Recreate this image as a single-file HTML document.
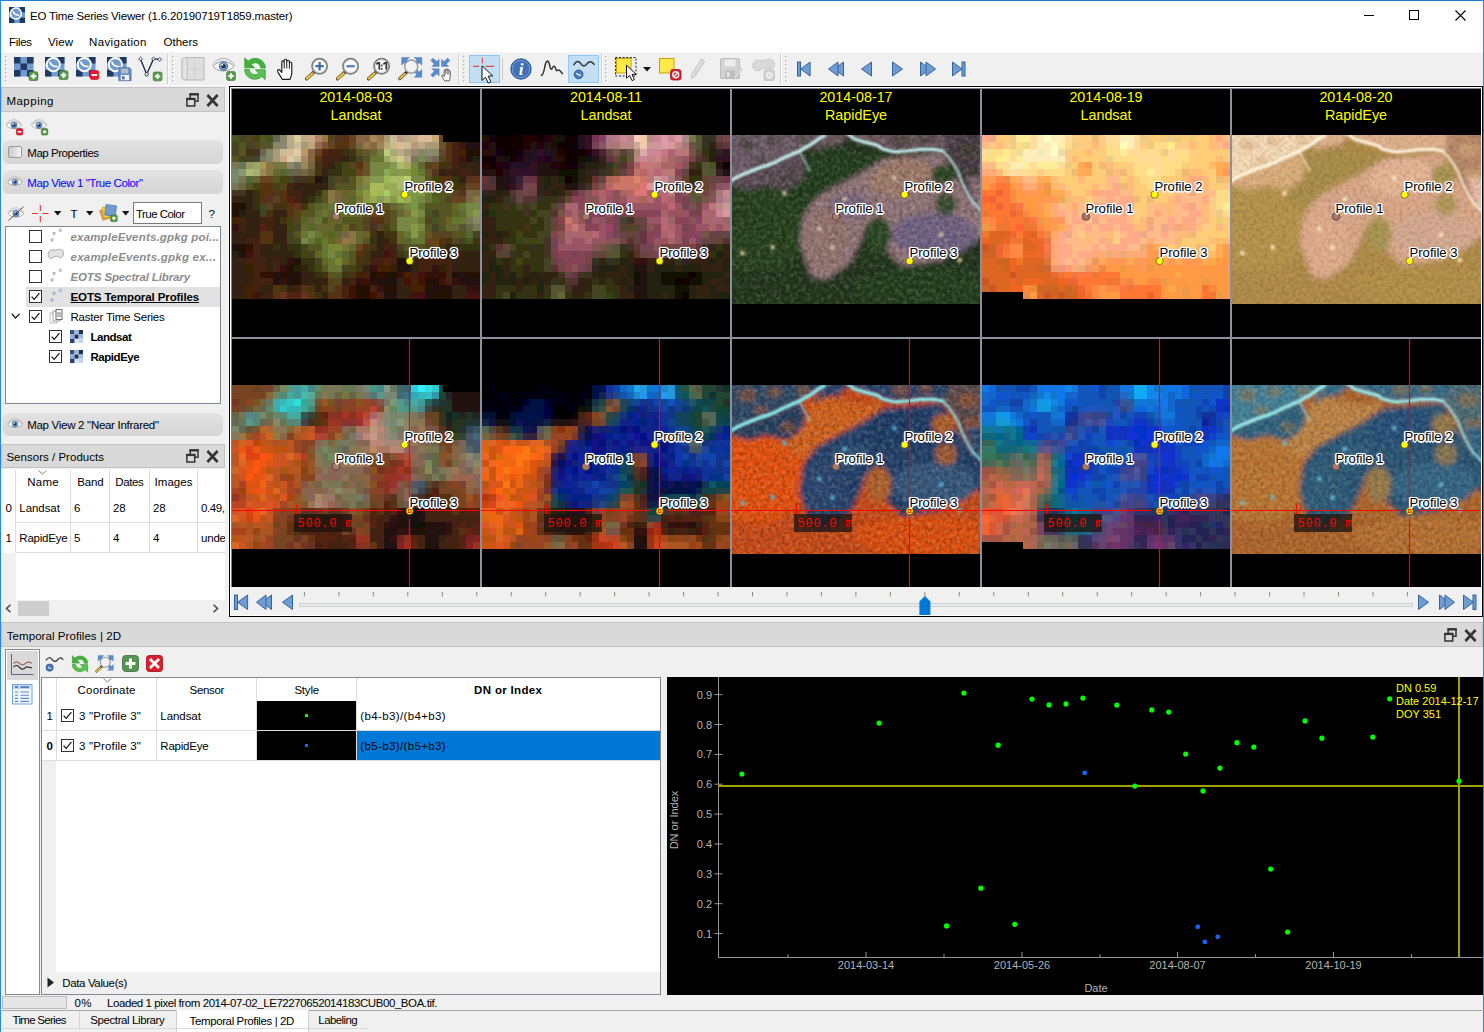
<!DOCTYPE html>
<html><head><meta charset="utf-8"><title>EO Time Series Viewer</title>
<style>

*{box-sizing:border-box;margin:0;padding:0}
html,body{width:1484px;height:1032px;overflow:hidden;background:#f0f0f0}
body{position:relative;font-family:"Liberation Sans",sans-serif;font-size:11.5px;color:#000}
.a{position:absolute}
.t{position:absolute;white-space:nowrap;line-height:14px;height:14px}
.c{text-align:center}
svg{position:absolute;overflow:visible}
.ml{position:absolute;white-space:nowrap;font-size:13.1px;line-height:16px;height:16px;color:#000;
 text-shadow:-1.5px 0 0 #fff,1.5px 0 0 #fff,0 -1.5px 0 #fff,0 1.5px 0 #fff,-1px -1px 0 #fff,1px -1px 0 #fff,-1px 1px 0 #fff,1px 1px 0 #fff,0 0 2px #fff}
.mt{position:absolute;white-space:nowrap;font-size:14.3px;line-height:16px;height:16px;color:#ffff00;text-align:center;width:250px}
.sc{position:absolute;white-space:nowrap;font-family:"Liberation Mono",monospace;font-size:12px;line-height:21px;height:18px;overflow:hidden;color:#f00;background:rgba(30,20,15,.78);letter-spacing:.75px;padding-left:4px}
.pl{position:absolute;white-space:nowrap;font-size:11px;line-height:12px;height:12px;color:#b4b4b4}
.btn{position:absolute;border-radius:6px;background:linear-gradient(#e3e3e3,#dadada 60%,#d6d6d6)}
.dt{position:absolute;background:#d9d9d9;border:1px solid #c4c4c4}
</style></head><body>
<div class="a" style="left:0;top:0;width:1484px;height:31px;background:#fff"></div><div class="a" style="left:0;top:31px;width:1484px;height:22px;background:#fff"></div><div class="a" style="left:0;top:52px;width:1484px;height:1px;background:#f7f7f7"></div><svg style="left:9px;top:7px" width="16" height="16" viewBox="0 0 16 16" ><rect x="0" y="0" width="16.02" height="16.02" fill="#6f9bd1"/><rect x="0.0" y="0.0" width="5.34" height="5.34" fill="#203a60"/><rect x="10.68" y="0.0" width="5.34" height="5.34" fill="#203a60"/><rect x="5.34" y="5.34" width="5.34" height="5.34" fill="#203a60"/><rect x="0.0" y="10.68" width="5.34" height="5.34" fill="#203a60"/><rect x="10.68" y="10.68" width="5.34" height="5.34" fill="#203a60"/><circle cx="6.9" cy="6.6" r="5.5" fill="#6f9bd1" stroke="#fff" stroke-width="1.5"/><path d="M4.2 4.8C4.8 7 6.2 7.8 9.6 8.2" stroke="#fff" stroke-width="1.5" fill="none" stroke-linecap="round"/></svg>
<div class="t" style="left:30.00px;top:9.00px;letter-spacing:-0.177px">EO Time Series Viewer (1.6.20190719T1859.master)</div>
<svg style="left:1364px;top:10px" width="110" height="12" viewBox="0 0 110 12" ><path d="M0 5.5H10" stroke="#000" stroke-width="1"/><rect x="45.5" y=".5" width="9" height="9" fill="none" stroke="#000" stroke-width="1"/><path d="M91.5 .5L101.5 10.5M101.5 .5L91.5 10.5" stroke="#000" stroke-width="1.1"/></svg>
<div class="t" style="left:9.00px;top:34.50px;letter-spacing:-0.320px">Files</div>
<div class="t" style="left:48.00px;top:34.50px;letter-spacing:0.093px">View</div>
<div class="t" style="left:89.00px;top:34.50px;letter-spacing:0.351px">Navigation</div>
<div class="t" style="left:163.50px;top:34.50px;letter-spacing:-0.002px">Others</div>
<div class="a" style="left:0;top:85px;width:1484px;height:1px;background:#fbfbfb"></div><svg style="left:5px;top:56px" width="4" height="27" viewBox="0 0 4 27" ><rect x="0" y="0" width="1.4" height="1.4" fill="#b4b4b4"/><rect x="1.2" y="1.2" width="1.3" height="1.3" fill="#fff"/><rect x="0" y="4" width="1.4" height="1.4" fill="#b4b4b4"/><rect x="1.2" y="5.2" width="1.3" height="1.3" fill="#fff"/><rect x="0" y="8" width="1.4" height="1.4" fill="#b4b4b4"/><rect x="1.2" y="9.2" width="1.3" height="1.3" fill="#fff"/><rect x="0" y="12" width="1.4" height="1.4" fill="#b4b4b4"/><rect x="1.2" y="13.2" width="1.3" height="1.3" fill="#fff"/><rect x="0" y="16" width="1.4" height="1.4" fill="#b4b4b4"/><rect x="1.2" y="17.2" width="1.3" height="1.3" fill="#fff"/><rect x="0" y="20" width="1.4" height="1.4" fill="#b4b4b4"/><rect x="1.2" y="21.2" width="1.3" height="1.3" fill="#fff"/><rect x="0" y="24" width="1.4" height="1.4" fill="#b4b4b4"/><rect x="1.2" y="25.2" width="1.3" height="1.3" fill="#fff"/></svg>
<svg style="left:172px;top:56px" width="4" height="27" viewBox="0 0 4 27" ><rect x="0" y="0" width="1.4" height="1.4" fill="#b4b4b4"/><rect x="1.2" y="1.2" width="1.3" height="1.3" fill="#fff"/><rect x="0" y="4" width="1.4" height="1.4" fill="#b4b4b4"/><rect x="1.2" y="5.2" width="1.3" height="1.3" fill="#fff"/><rect x="0" y="8" width="1.4" height="1.4" fill="#b4b4b4"/><rect x="1.2" y="9.2" width="1.3" height="1.3" fill="#fff"/><rect x="0" y="12" width="1.4" height="1.4" fill="#b4b4b4"/><rect x="1.2" y="13.2" width="1.3" height="1.3" fill="#fff"/><rect x="0" y="16" width="1.4" height="1.4" fill="#b4b4b4"/><rect x="1.2" y="17.2" width="1.3" height="1.3" fill="#fff"/><rect x="0" y="20" width="1.4" height="1.4" fill="#b4b4b4"/><rect x="1.2" y="21.2" width="1.3" height="1.3" fill="#fff"/><rect x="0" y="24" width="1.4" height="1.4" fill="#b4b4b4"/><rect x="1.2" y="25.2" width="1.3" height="1.3" fill="#fff"/></svg>
<svg style="left:463px;top:56px" width="4" height="27" viewBox="0 0 4 27" ><rect x="0" y="0" width="1.4" height="1.4" fill="#b4b4b4"/><rect x="1.2" y="1.2" width="1.3" height="1.3" fill="#fff"/><rect x="0" y="4" width="1.4" height="1.4" fill="#b4b4b4"/><rect x="1.2" y="5.2" width="1.3" height="1.3" fill="#fff"/><rect x="0" y="8" width="1.4" height="1.4" fill="#b4b4b4"/><rect x="1.2" y="9.2" width="1.3" height="1.3" fill="#fff"/><rect x="0" y="12" width="1.4" height="1.4" fill="#b4b4b4"/><rect x="1.2" y="13.2" width="1.3" height="1.3" fill="#fff"/><rect x="0" y="16" width="1.4" height="1.4" fill="#b4b4b4"/><rect x="1.2" y="17.2" width="1.3" height="1.3" fill="#fff"/><rect x="0" y="20" width="1.4" height="1.4" fill="#b4b4b4"/><rect x="1.2" y="21.2" width="1.3" height="1.3" fill="#fff"/><rect x="0" y="24" width="1.4" height="1.4" fill="#b4b4b4"/><rect x="1.2" y="25.2" width="1.3" height="1.3" fill="#fff"/></svg>
<svg style="left:605px;top:56px" width="4" height="27" viewBox="0 0 4 27" ><rect x="0" y="0" width="1.4" height="1.4" fill="#b4b4b4"/><rect x="1.2" y="1.2" width="1.3" height="1.3" fill="#fff"/><rect x="0" y="4" width="1.4" height="1.4" fill="#b4b4b4"/><rect x="1.2" y="5.2" width="1.3" height="1.3" fill="#fff"/><rect x="0" y="8" width="1.4" height="1.4" fill="#b4b4b4"/><rect x="1.2" y="9.2" width="1.3" height="1.3" fill="#fff"/><rect x="0" y="12" width="1.4" height="1.4" fill="#b4b4b4"/><rect x="1.2" y="13.2" width="1.3" height="1.3" fill="#fff"/><rect x="0" y="16" width="1.4" height="1.4" fill="#b4b4b4"/><rect x="1.2" y="17.2" width="1.3" height="1.3" fill="#fff"/><rect x="0" y="20" width="1.4" height="1.4" fill="#b4b4b4"/><rect x="1.2" y="21.2" width="1.3" height="1.3" fill="#fff"/><rect x="0" y="24" width="1.4" height="1.4" fill="#b4b4b4"/><rect x="1.2" y="25.2" width="1.3" height="1.3" fill="#fff"/></svg>
<svg style="left:785px;top:56px" width="4" height="27" viewBox="0 0 4 27" ><rect x="0" y="0" width="1.4" height="1.4" fill="#b4b4b4"/><rect x="1.2" y="1.2" width="1.3" height="1.3" fill="#fff"/><rect x="0" y="4" width="1.4" height="1.4" fill="#b4b4b4"/><rect x="1.2" y="5.2" width="1.3" height="1.3" fill="#fff"/><rect x="0" y="8" width="1.4" height="1.4" fill="#b4b4b4"/><rect x="1.2" y="9.2" width="1.3" height="1.3" fill="#fff"/><rect x="0" y="12" width="1.4" height="1.4" fill="#b4b4b4"/><rect x="1.2" y="13.2" width="1.3" height="1.3" fill="#fff"/><rect x="0" y="16" width="1.4" height="1.4" fill="#b4b4b4"/><rect x="1.2" y="17.2" width="1.3" height="1.3" fill="#fff"/><rect x="0" y="20" width="1.4" height="1.4" fill="#b4b4b4"/><rect x="1.2" y="21.2" width="1.3" height="1.3" fill="#fff"/><rect x="0" y="24" width="1.4" height="1.4" fill="#b4b4b4"/><rect x="1.2" y="25.2" width="1.3" height="1.3" fill="#fff"/></svg>
<div class="a" style="left:167px;top:54px;width:1px;height:30px;background:#d0d0d0"></div><div class="a" style="left:168px;top:54px;width:1px;height:30px;background:#fff"></div><div class="a" style="left:458px;top:54px;width:1px;height:30px;background:#d0d0d0"></div><div class="a" style="left:459px;top:54px;width:1px;height:30px;background:#fff"></div><div class="a" style="left:601px;top:54px;width:1px;height:30px;background:#d0d0d0"></div><div class="a" style="left:602px;top:54px;width:1px;height:30px;background:#fff"></div><div class="a" style="left:780px;top:54px;width:1px;height:30px;background:#d0d0d0"></div><div class="a" style="left:781px;top:54px;width:1px;height:30px;background:#fff"></div><div class="a" style="left:469px;top:55px;width:31px;height:28px;background:#c4def4;border:1px solid #90c8f6"></div><div class="a" style="left:568px;top:55px;width:31px;height:28px;background:#c4def4;border:1px solid #90c8f6"></div><div class="a" style="left:502px;top:58px;width:1px;height:22px;background:#c8c8c8"></div><svg style="left:14px;top:57px" width="24" height="24" viewBox="0 0 24 24" ><rect x="0" y="0" width="19.5" height="19.5" fill="#6f9bd1"/><rect x="0.0" y="0.0" width="6.5" height="6.5" fill="#203a60"/><rect x="13.0" y="0.0" width="6.5" height="6.5" fill="#203a60"/><rect x="6.5" y="6.5" width="6.5" height="6.5" fill="#203a60"/><rect x="0.0" y="13.0" width="6.5" height="6.5" fill="#203a60"/><rect x="13.0" y="13.0" width="6.5" height="6.5" fill="#203a60"/><rect x="15.1" y="14.799999999999999" width="8.8" height="8.8" rx="1.6" fill="#5a9a4e" stroke="#3d7a34" stroke-width=".7"/><path d="M16.8 19.2H22.2M19.5 16.5V21.9" stroke="#fff" stroke-width="1.9" fill="none"/></svg>
<svg style="left:45px;top:57px" width="24" height="24" viewBox="0 0 24 24" ><rect x="0" y="0" width="19.5" height="19.5" fill="#6f9bd1"/><rect x="0.0" y="0.0" width="6.5" height="6.5" fill="#203a60"/><rect x="13.0" y="0.0" width="6.5" height="6.5" fill="#203a60"/><rect x="6.5" y="6.5" width="6.5" height="6.5" fill="#203a60"/><rect x="0.0" y="13.0" width="6.5" height="6.5" fill="#203a60"/><rect x="13.0" y="13.0" width="6.5" height="6.5" fill="#203a60"/><circle cx="8.3" cy="7.6" r="6.6" fill="#6f9bd1" stroke="#fff" stroke-width="1.9"/><path d="M5.1000000000000005 5.3999999999999995C5.9 8.2 7.700000000000001 9.2 11.9 9.6" stroke="#fff" stroke-width="1.8" fill="none" stroke-linecap="round"/><rect x="14.200000000000001" y="13.799999999999999" width="8.8" height="8.8" rx="1.6" fill="#5a9a4e" stroke="#3d7a34" stroke-width=".7"/><path d="M15.900000000000002 18.2H21.3M18.6 15.5V20.9" stroke="#fff" stroke-width="1.9" fill="none"/></svg>
<svg style="left:76px;top:57px" width="24" height="24" viewBox="0 0 24 24" ><rect x="0" y="0" width="19.5" height="19.5" fill="#6f9bd1"/><rect x="0.0" y="0.0" width="6.5" height="6.5" fill="#203a60"/><rect x="13.0" y="0.0" width="6.5" height="6.5" fill="#203a60"/><rect x="6.5" y="6.5" width="6.5" height="6.5" fill="#203a60"/><rect x="0.0" y="13.0" width="6.5" height="6.5" fill="#203a60"/><rect x="13.0" y="13.0" width="6.5" height="6.5" fill="#203a60"/><circle cx="8.3" cy="7.6" r="6.6" fill="#6f9bd1" stroke="#fff" stroke-width="1.9"/><path d="M5.1000000000000005 5.3999999999999995C5.9 8.2 7.700000000000001 9.2 11.9 9.6" stroke="#fff" stroke-width="1.8" fill="none" stroke-linecap="round"/><rect x="13.999999999999998" y="13.6" width="8.8" height="8.8" rx="1.8" fill="#f01830" stroke="#d01028" stroke-width=".7"/><path d="M15.599999999999998 18H21.2" stroke="#fff" stroke-width="2" fill="none"/></svg>
<svg style="left:107px;top:57px" width="24" height="24" viewBox="0 0 24 24" ><rect x="0" y="0" width="19.5" height="19.5" fill="#6f9bd1"/><rect x="0.0" y="0.0" width="6.5" height="6.5" fill="#203a60"/><rect x="13.0" y="0.0" width="6.5" height="6.5" fill="#203a60"/><rect x="6.5" y="6.5" width="6.5" height="6.5" fill="#203a60"/><rect x="0.0" y="13.0" width="6.5" height="6.5" fill="#203a60"/><rect x="13.0" y="13.0" width="6.5" height="6.5" fill="#203a60"/><circle cx="8.3" cy="7.6" r="6.6" fill="#6f9bd1" stroke="#fff" stroke-width="1.9"/><path d="M5.1000000000000005 5.3999999999999995C5.9 8.2 7.700000000000001 9.2 11.9 9.6" stroke="#fff" stroke-width="1.8" fill="none" stroke-linecap="round"/><path d="M11.8 10.7H22.4L24.0 12.299999999999999V23.7H11.8Z" fill="#6a90c6" stroke="#44699f" stroke-width=".8"/><rect x="14.200000000000001" y="11.6" width="6.799999999999999" height="4.68" fill="#b9bcc2"/><rect x="13.8" y="17.98" width="8.2" height="5.22" fill="#f2f5fa"/><rect x="15.0" y="19.28" width="2.6" height="3.12" fill="#4a70a8"/></svg>
<svg style="left:139px;top:57px" width="24" height="24" viewBox="0 0 24 24" ><path d="M1.4 1.9L7.7 17.3L14.5 1.9L20.8 2.5" stroke="#1f2f4f" stroke-width="1.4" fill="none"/><path d="M-0.2999999999999998 1.9L1.6 0.0L3.5 1.9L1.6 3.8Z" fill="#fff" stroke="#1f2f4f" stroke-width=".9"/><path d="M12.6 1.9L14.5 0.0L16.4 1.9L14.5 3.8Z" fill="#fff" stroke="#1f2f4f" stroke-width=".9"/><path d="M18.900000000000002 2.5L20.8 0.6000000000000001L22.7 2.5L20.8 4.4Z" fill="#fff" stroke="#1f2f4f" stroke-width=".9"/><circle cx="7.7" cy="17.3" r="1.7" fill="#fff" stroke="#1f2f4f" stroke-width=".9"/><rect x="14.200000000000001" y="14.999999999999998" width="8.8" height="8.8" rx="1.6" fill="#5a9a4e" stroke="#3d7a34" stroke-width=".7"/><path d="M15.900000000000002 19.4H21.3M18.6 16.7V22.099999999999998" stroke="#fff" stroke-width="1.9" fill="none"/></svg>
<svg style="left:181px;top:57px" width="24" height="24" viewBox="0 0 24 24" ><path d="M3.6 .6H23V23H4.4C2 23 .8 21.6 .8 19.8V3.6C.8 1.6 2 .6 3.6 .6Z" fill="#dedede" stroke="#b8b8b8" stroke-width="1"/><path d="M3.8 .8C5.6 1 6 2.2 6 3.8V19.6C6 21.4 5.2 22.6 3.6 22.8" fill="#ececec" stroke="#b8b8b8" stroke-width="1"/><path d="M13.5 3.5V20.5M7.5 12H21.5" stroke="#c4c4c4" stroke-width="1" stroke-dasharray="1.6 1"/></svg>
<svg style="left:212px;top:57px" width="24" height="24" viewBox="0 0 24 24" ><path d="M1.0 9.5C6.25 2.75 16.75 2.75 22.0 9.5C16.75 15.440000000000001 6.25 15.440000000000001 1.0 9.5Z" fill="#fff" stroke="#8a8a8a" stroke-width="0.9"/><path d="M0.5 7.9C6.25 -0.7599999999999998 17.275 -0.7599999999999998 22.8 8.5" fill="none" stroke="#9a9a9a" stroke-width="0.8"/><circle cx="11.5" cy="9.2" r="4.3" fill="#6f9bd1" stroke="#35588a" stroke-width="0.7"/><circle cx="11.5" cy="9.2" r="2.1" fill="#1a2c48"/><circle cx="10.2" cy="7.8" r="1.0" fill="#fff"/><rect x="14.6" y="14.6" width="8.8" height="8.8" rx="1.6" fill="#5a9a4e" stroke="#3d7a34" stroke-width=".7"/><path d="M16.3 19H21.7M19 16.3V21.7" stroke="#fff" stroke-width="1.9" fill="none"/></svg>
<svg style="left:243px;top:57px" width="24" height="24" viewBox="0 0 24 24" ><g transform="translate(24,0) scale(-1,1)"><path d="M1.6 11C1.8 5.4 6.4 1.4 11.8 1.4C14.8 1.4 17 2.4 18.8 4.2L22.2 1V10.8H12.4L15.8 7.4C14.8 6.4 13.4 5.8 11.8 5.8C8.6 5.8 6.6 7.8 6.2 11Z" fill="#46b03e" stroke="#2e9a2e" stroke-width=".8" stroke-linejoin="round"/><path d="M22.4 12.6C22.2 18.2 17.6 22.2 12.2 22.2C9.2 22.2 7 21.2 5.2 19.4L1.8 22.6V12.8H11.6L8.2 16.2C9.2 17.2 10.6 17.8 12.2 17.8C15.4 17.8 17.4 15.8 17.8 12.6Z" fill="#5cc052" stroke="#2e9a2e" stroke-width=".8" stroke-linejoin="round"/></g></svg>
<svg style="left:275px;top:57px" width="24" height="24" viewBox="0 0 24 24" ><path d="M7.4 22.4C5.6 19.6 3.6 16.6 2.8 14.8C2 13 3.8 11.8 5.2 13.4L6.8 15.4V5.2C6.8 3.4 9.2 3.4 9.2 5.2V3.6C9.2 1.8 11.8 1.8 11.8 3.6V4.4C11.8 2.8 14.4 2.8 14.4 4.6V6.2C14.4 4.8 16.8 4.8 16.8 6.6V15.4C16.8 18.4 15.8 20.4 15 22.4Z" fill="#fff" stroke="#1a1a1a" stroke-width="1.15" stroke-linejoin="round"/><path d="M9.2 5.2V11.5M11.8 4.4V11.5M14.4 6.2V11.8" stroke="#1a1a1a" stroke-width="1" fill="none"/></svg>
<svg style="left:305px;top:57px" width="24" height="24" viewBox="0 0 24 24" ><path d="M9.6 14.6L1.6 21.8" stroke="#3a3a3a" stroke-width="3.4" stroke-linecap="round"/><path d="M7.6 16.4L1.8 21.6" stroke="#f2c230" stroke-width="2.3" stroke-linecap="round"/><circle cx="14.6" cy="9.2" r="7.6" fill="#f4f4f4" stroke="#7d7d7d" stroke-width="1.7"/><circle cx="14.6" cy="9.2" r="6.2" fill="#fdfdfd" stroke="#d4d4d4" stroke-width=".8"/><path d="M10.4 9.2H18.8M14.6 5V13.4" stroke="#3f6fae" stroke-width="2.3" fill="none"/></svg>
<svg style="left:336px;top:57px" width="24" height="24" viewBox="0 0 24 24" ><path d="M9.6 14.6L1.6 21.8" stroke="#3a3a3a" stroke-width="3.4" stroke-linecap="round"/><path d="M7.6 16.4L1.8 21.6" stroke="#f2c230" stroke-width="2.3" stroke-linecap="round"/><circle cx="14.6" cy="9.2" r="7.6" fill="#f4f4f4" stroke="#7d7d7d" stroke-width="1.7"/><circle cx="14.6" cy="9.2" r="6.2" fill="#fdfdfd" stroke="#d4d4d4" stroke-width=".8"/><path d="M10.4 9.2H18.8" stroke="#5d88c2" stroke-width="2.5" fill="none"/></svg>
<svg style="left:367px;top:57px" width="24" height="24" viewBox="0 0 24 24" ><path d="M9.6 14.6L1.6 21.8" stroke="#3a3a3a" stroke-width="3.4" stroke-linecap="round"/><path d="M7.6 16.4L1.8 21.6" stroke="#f2c230" stroke-width="2.3" stroke-linecap="round"/><circle cx="14.6" cy="9.2" r="7.6" fill="#f4f4f4" stroke="#7d7d7d" stroke-width="1.7"/><circle cx="14.6" cy="9.2" r="6.2" fill="#fdfdfd" stroke="#d4d4d4" stroke-width=".8"/><path d="M9.3 7.2L11.2 5.9H12.3V12.8" stroke="#333" stroke-width="1.7" fill="none" stroke-linejoin="miter"/><path d="M16.3 7.2L18.2 5.9H19.3V12.8" stroke="#333" stroke-width="1.7" fill="none" stroke-linejoin="miter"/><rect x="13.9" y="7.6" width="1.6" height="1.7" fill="#333"/><rect x="13.9" y="11" width="1.6" height="1.7" fill="#333"/></svg>
<svg style="left:399px;top:57px" width="24" height="24" viewBox="0 0 24 24" ><path d="M5.8919999999999995 3.792L10.452 8.352" stroke="#5b8dce" stroke-width="3.952" fill="none"/><path d="M2.7 0.6L10.3 0.6L2.7 8.2Z" fill="#5b8dce" stroke="#3c6db0" stroke-width=".4"/><path d="M19.608 3.792L15.048000000000002 8.352" stroke="#5b8dce" stroke-width="3.952" fill="none"/><path d="M22.8 0.6L15.200000000000001 0.6L22.8 8.2Z" fill="#5b8dce" stroke="#3c6db0" stroke-width=".4"/><path d="M19.608 17.008L15.048000000000002 12.448" stroke="#5b8dce" stroke-width="3.952" fill="none"/><path d="M22.8 20.2L15.200000000000001 20.2L22.8 12.6Z" fill="#5b8dce" stroke="#3c6db0" stroke-width=".4"/><path d="M7.4 15.4L.8 21.6" stroke="#222" stroke-width="3.2" stroke-linecap="round"/><path d="M6 16.8L.9 21.5" stroke="#f2c230" stroke-width="2.2" stroke-linecap="round"/><circle cx="12.2" cy="9.6" r="6.6" fill="#e9e9e9" stroke="#9a9a9a" stroke-width="1.4"/><circle cx="12.2" cy="9.6" r="5" fill="#f3f3f3"/></svg>
<svg style="left:430px;top:57px" width="24" height="24" viewBox="0 0 24 24" ><path d="M6.076000000000001 6.376L1.7560000000000011 2.056" stroke="#5b8dce" stroke-width="3.744" fill="none"/><path d="M9.100000000000001 9.4L1.9000000000000012 9.4L9.100000000000001 2.2Z" fill="#5b8dce" stroke="#3c6db0" stroke-width=".4"/><path d="M14.524000000000001 6.376L18.844 2.056" stroke="#5b8dce" stroke-width="3.744" fill="none"/><path d="M11.5 9.4L18.7 9.4L11.5 2.2Z" fill="#5b8dce" stroke="#3c6db0" stroke-width=".4"/><path d="M6.076000000000001 14.823999999999998L1.7560000000000011 19.144" stroke="#5b8dce" stroke-width="3.744" fill="none"/><path d="M9.100000000000001 11.799999999999999L1.9000000000000012 11.799999999999999L9.100000000000001 19.0Z" fill="#5b8dce" stroke="#3c6db0" stroke-width=".4"/><g transform="translate(10.2,10.4) scale(.6)"><path d="M7.4 22.4C5.6 19.6 3.6 16.6 2.8 14.8C2 13 3.8 11.8 5.2 13.4L6.8 15.4V5.2C6.8 3.4 9.2 3.4 9.2 5.2V3.6C9.2 1.8 11.8 1.8 11.8 3.6V4.4C11.8 2.8 14.4 2.8 14.4 4.6V6.2C14.4 4.8 16.8 4.8 16.8 6.6V15.4C16.8 18.4 15.8 20.4 15 22.4Z" fill="#fff" stroke="#1a1a1a" stroke-width="1.15" stroke-linejoin="round"/><path d="M9.2 5.2V11.5M11.8 4.4V11.5M14.4 6.2V11.8" stroke="#1a1a1a" stroke-width="1" fill="none"/></g></svg>
<svg style="left:473px;top:57px" width="24" height="24" viewBox="0 0 24 24" ><path d="M.2 9.4H6.2M12.4 9.4H20.9M9.3 .6V6.4M9.3 12.4V21.3" stroke="#e04848" stroke-width="1.1" fill="none"/><path d="M9 8.8L9 23.360000000000003L12.472000000000001 20.224L15.272 26.048000000000002L17.848 24.816000000000003L15.16 19.216L19.752000000000002 18.880000000000003Z" fill="#fff" stroke="#111" stroke-width="1" stroke-linejoin="round"/></svg>
<svg style="left:509px;top:57px" width="24" height="24" viewBox="0 0 24 24" ><circle cx="12" cy="12" r="10.2" fill="#3f6fb4" stroke="#27518f" stroke-width="1"/><circle cx="12" cy="12" r="8.8" fill="none" stroke="#7ea4d8" stroke-width=".9"/><text x="12.2" y="18.2" font-family="Liberation Serif" font-style="italic" font-weight="bold" font-size="17" text-anchor="middle" fill="#fff">i</text></svg>
<svg style="left:540px;top:57px" width="24" height="24" viewBox="0 0 24 24" ><path d="M1.5 18.5C3.5 17.5 4 14 5 9C6 3.5 8.4 2 9.6 8C10.4 12 11.2 13.4 12.4 11C13.6 8.4 15 8.6 15.8 12C16.4 14.6 17.4 13.6 18.4 13C19.6 12.4 20.4 14.6 22.5 16.5" stroke="#333" stroke-width="1.5" fill="none" stroke-linecap="round"/></svg>
<svg style="left:572px;top:57px" width="24" height="24" viewBox="0 0 24 24" ><path d="M1.8 7.8C4.4 3.6 6.8 3.8 8.8 6.6C10.8 9.6 13 9.8 15 6.8C17 4 19.6 3.8 22.2 7.4" stroke="#333" stroke-width="1.5" fill="none" stroke-linecap="round"/><circle cx="6.6" cy="17.4" r="4.4" fill="#4a7cc0" stroke="#2a5391" stroke-width=".9"/><path d="M4.6 16.6L6.6 18L8.6 18.2" stroke="#fff" stroke-width="1.2" fill="none" stroke-linecap="round"/></svg>
<svg style="left:615px;top:57px" width="24" height="24" viewBox="0 0 24 24" ><rect x="1.5" y="1.5" width="14.5" height="14.5" fill="#ffe84a" stroke="#c9a400" stroke-width="1"/><rect x=".5" y=".5" width="20.5" height="18.5" fill="none" stroke="#222" stroke-width="1" stroke-dasharray="2 1.6"/><path d="M11.5 8.2L11.5 21.2L14.6 18.4L17.1 23.6L19.4 22.5L17.0 17.5L21.1 17.2Z" fill="#fff" stroke="#111" stroke-width="1" stroke-linejoin="round"/></svg>
<svg style="left:658px;top:57px" width="24" height="24" viewBox="0 0 24 24" ><rect x="1.5" y="1.5" width="14.5" height="14.5" fill="#ffe84a" stroke="#c9a400" stroke-width="1"/><rect x="12.5" y="12.5" width="10.5" height="10.5" rx="2.4" fill="#e01a2b" stroke="#a30f1c" stroke-width=".8"/><circle cx="17.75" cy="17.75" r="3" fill="none" stroke="#fff" stroke-width="1.3"/><path d="M15.7 19.8L19.8 15.7" stroke="#fff" stroke-width="1.3"/></svg>
<svg style="left:688px;top:57px" width="24" height="24" viewBox="0 0 24 24" ><path d="M13.6 2L16.6 4.4L7 19.4L3.2 21.6L3.8 17.2Z" fill="#dedede" stroke="#c2c2c2" stroke-width="1" stroke-linejoin="round"/><path d="M5.4 15L8.6 17.4" stroke="#c6c6c6" stroke-width=".9"/></svg>
<svg style="left:719px;top:57px" width="24" height="24" viewBox="0 0 24 24" ><rect x="1.5" y="1.5" width="19" height="20" rx="1.5" fill="#d4d4d4" stroke="#bcbcbc" stroke-width="1"/><rect x="5" y="2" width="12" height="8" fill="#ececec" stroke="#c4c4c4" stroke-width=".6"/><rect x="6" y="13.5" width="10" height="8" fill="#bdbdbd"/><rect x="8" y="15" width="2.6" height="5" fill="#e4e4e4"/><path d="M21.4 10.4L23.2 12L17 21L14.6 22.2L15 19.6Z" fill="#e6dcdc" stroke="#c9bcbc" stroke-width=".8"/></svg>
<svg style="left:751px;top:57px" width="24" height="24" viewBox="0 0 24 24" ><path d="M3 5C6 1.5 11 4.5 14.5 3C18.5 1.2 23.5 2.5 23.5 7.5C23.5 12 19.5 12.4 15.5 11.5C11 10.5 9.5 14.5 5.5 13.5C1.5 12.5 .5 8 3 5Z" fill="#d9d9d9" stroke="#c6c6c6" stroke-width=".9"/><rect x="13" y="13" width="10.5" height="10.5" rx="2" fill="#cfcfcf" stroke="#bdbdbd" stroke-width=".7"/><path d="M18.25 14.6V21.9M14.6 18.25H21.9M15.7 15.7L20.8 20.8M20.8 15.7L15.7 20.8" stroke="#f3f3f3" stroke-width="1.5"/><circle cx="18.25" cy="18.25" r="1.2" fill="#cfcfcf"/></svg>
<svg style="left:643px;top:67px" width="8" height="5" viewBox="0 0 8 5" ><path d="M0 0H8L4 4.5Z" fill="#111"/></svg>
<svg style="left:797px;top:62px" width="15" height="14" viewBox="0 0 15 14" ><rect x="0.5" y="0" width="3" height="14" fill="#6d9dd2" stroke="#35639c" stroke-width="1"/><path d="M13.1 0L3.6 7.0L13.1 14Z" fill="#6d9dd2" stroke="#35639c" stroke-width="1" stroke-linejoin="round"/></svg>
<svg style="left:828px;top:62px" width="16" height="14" viewBox="0 0 16 14" ><path d="M15.5 0L6 7.0L15.5 14Z" fill="#6d9dd2" stroke="#35639c" stroke-width="1" stroke-linejoin="round"/><path d="M10.0 0L0.5 7.0L10.0 14Z" fill="#6d9dd2" stroke="#35639c" stroke-width="1" stroke-linejoin="round"/></svg>
<svg style="left:861px;top:62px" width="12" height="14" viewBox="0 0 12 14" ><path d="M10.5 0L0.5 7.0L10.5 14Z" fill="#6d9dd2" stroke="#35639c" stroke-width="1" stroke-linejoin="round"/></svg>
<svg style="left:892px;top:62px" width="12" height="14" viewBox="0 0 12 14" ><path d="M0.5 0L10.5 7.0L0.5 14Z" fill="#6d9dd2" stroke="#35639c" stroke-width="1" stroke-linejoin="round"/></svg>
<svg style="left:920px;top:62px" width="16" height="14" viewBox="0 0 16 14" ><path d="M0.5 0L10.0 7.0L0.5 14Z" fill="#6d9dd2" stroke="#35639c" stroke-width="1" stroke-linejoin="round"/><path d="M6 0L15.5 7.0L6 14Z" fill="#6d9dd2" stroke="#35639c" stroke-width="1" stroke-linejoin="round"/></svg>
<svg style="left:952px;top:62px" width="15" height="14" viewBox="0 0 15 14" ><path d="M0.5 0L10.0 7.0L0.5 14Z" fill="#6d9dd2" stroke="#35639c" stroke-width="1" stroke-linejoin="round"/><rect x="10.0" y="0" width="3" height="14" fill="#6d9dd2" stroke="#35639c" stroke-width="1"/></svg>
<div class="a" style="left:0;top:0;width:1px;height:1032px;background:#2a86d8"></div><div class="a" style="left:1483px;top:0;width:1px;height:1032px;background:#2a86d8"></div><div class="a" style="left:0;top:0;width:1484px;height:1px;background:#1b7fd6"></div><div class="dt" style="left:1px;top:87px;width:224px;height:25px"></div><div class="t" style="left:6.40px;top:94.00px;letter-spacing:0.497px">Mapping</div>
<svg style="left:186px;top:93px" width="34" height="14" viewBox="0 0 34 14" ><rect x="4.2" y="1" width="7.8" height="7.2" fill="none" stroke="#333" stroke-width="1.5"/><path d="M3.4 1.4H12.8" stroke="#333" stroke-width="2.2"/><rect x=".9" y="5.6" width="7.8" height="7.4" fill="#dcdcdc" stroke="#333" stroke-width="1.5"/><path d="M.2 6H9.4" stroke="#333" stroke-width="2.2"/><path d="M21.4 2L31.6 13M31.6 2L21.4 13" stroke="#333" stroke-width="2.6"/></svg>
<svg style="left:6px;top:118px" width="18" height="18" viewBox="0 0 18 18" ><path d="M0.4400000000000004 7.5C4.220000000000001 2.6400000000000006 11.78 2.6400000000000006 15.559999999999999 7.5C11.78 11.776800000000001 4.220000000000001 11.776800000000001 0.4400000000000004 7.5Z" fill="#fff" stroke="#8a8a8a" stroke-width="0.648"/><path d="M0.0800000000000004 6.348C4.220000000000001 0.1128000000000009 12.158000000000001 0.1128000000000009 16.136 6.78" fill="none" stroke="#9a9a9a" stroke-width="0.576"/><circle cx="8" cy="7.284" r="3.0959999999999996" fill="#6f9bd1" stroke="#35588a" stroke-width="0.504"/><circle cx="8" cy="7.284" r="1.512" fill="#1a2c48"/><circle cx="7.064" cy="6.276" r="0.72" fill="#fff"/><rect x="10.4" y="10.6" width="6.4" height="6.4" rx="1.4" fill="#e8192c" stroke="#a80f1e" stroke-width=".6"/><path d="M11.8 13.8H15.4" stroke="#fff" stroke-width="1.6"/></svg>
<svg style="left:31px;top:118px" width="18" height="18" viewBox="0 0 18 18" ><path d="M0.4400000000000004 7.5C4.220000000000001 2.6400000000000006 11.78 2.6400000000000006 15.559999999999999 7.5C11.78 11.776800000000001 4.220000000000001 11.776800000000001 0.4400000000000004 7.5Z" fill="#fff" stroke="#8a8a8a" stroke-width="0.648"/><path d="M0.0800000000000004 6.348C4.220000000000001 0.1128000000000009 12.158000000000001 0.1128000000000009 16.136 6.78" fill="none" stroke="#9a9a9a" stroke-width="0.576"/><circle cx="8" cy="7.284" r="3.0959999999999996" fill="#6f9bd1" stroke="#35588a" stroke-width="0.504"/><circle cx="8" cy="7.284" r="1.512" fill="#1a2c48"/><circle cx="7.064" cy="6.276" r="0.72" fill="#fff"/><rect x="10.4" y="10.6" width="6.4" height="6.4" rx="1.4" fill="#4e9a3d" stroke="#2f6e26" stroke-width=".6"/><path d="M11.8 13.8H15.4M13.6 12V15.6" stroke="#fff" stroke-width="1.4"/></svg>
<div class="btn" style="left:3px;top:140px;width:220px;height:24px"></div><div class="a" style="left:8px;top:146px;width:14px;height:12px;border:1px solid #9a9a9a;border-radius:2px;background:linear-gradient(90deg,#c9c9c9,#f4f4f4)"></div><div class="t" style="left:27.30px;top:146.00px;letter-spacing:-0.476px">Map Properties</div>
<div class="btn" style="left:3px;top:170px;width:220px;height:24px"></div><svg style="left:7px;top:176px" width="16" height="12" viewBox="0 0 16 12" ><path d="M0.8599999999999994 6.3C4.43 1.709999999999999 11.57 1.709999999999999 15.14 6.3C11.57 10.339200000000002 4.43 10.339200000000002 0.8599999999999994 6.3Z" fill="#fff" stroke="#8a8a8a" stroke-width="0.6120000000000001"/><path d="M0.5199999999999994 5.212C4.43 -0.676800000000001 11.927 -0.676800000000001 15.684000000000001 5.62" fill="none" stroke="#9a9a9a" stroke-width="0.544"/><circle cx="8" cy="6.096" r="2.924" fill="#6f9bd1" stroke="#35588a" stroke-width="0.476"/><circle cx="8" cy="6.096" r="1.4280000000000002" fill="#1a2c48"/><circle cx="7.116" cy="5.144" r="0.68" fill="#fff"/></svg>
<div class="t" style="left:27.30px;top:176.00px;letter-spacing:-0.429px;color:#0000ff">Map View 1 "True Color"</div>
<svg style="left:7px;top:205px" width="18" height="17" viewBox="0 0 18 17" ><path d="M1.2300000000000004 8.8C5.115 3.8050000000000006 12.885 3.8050000000000006 16.77 8.8C12.885 13.1956 5.115 13.1956 1.2300000000000004 8.8Z" fill="#fff" stroke="#8a8a8a" stroke-width="0.666"/><path d="M0.8600000000000004 7.6160000000000005C5.115 1.2076000000000011 13.2735 1.2076000000000011 17.362 8.06" fill="none" stroke="#9a9a9a" stroke-width="0.592"/><circle cx="9" cy="8.578000000000001" r="3.182" fill="#6f9bd1" stroke="#35588a" stroke-width="0.518"/><circle cx="9" cy="8.578000000000001" r="1.554" fill="#1a2c48"/><circle cx="8.038" cy="7.542000000000001" r="0.74" fill="#fff"/><path d="M1.5 15.5L16.5 1.8" stroke="#555" stroke-width="1"/></svg>
<svg style="left:32px;top:205px" width="17" height="17" viewBox="0 0 17 17" ><path d="M0 8.5H6M10.5 8.5H16.5M8.3 0V6M8.3 11V17" stroke="#e83030" stroke-width="1.1"/></svg>
<svg style="left:54px;top:211px" width="8" height="5" viewBox="0 0 8 5" ><path d="M0 0H7.4L3.7 4.4Z" fill="#111"/></svg>
<div class="t" style="left:70.50px;top:207.00px">T</div>
<svg style="left:86px;top:211px" width="8" height="5" viewBox="0 0 8 5" ><path d="M0 0H7.4L3.7 4.4Z" fill="#111"/></svg>
<svg style="left:100px;top:204px" width="18" height="18" viewBox="0 0 18 18" ><rect x="1" y="5" width="10" height="10" fill="#e8a23a" stroke="#b97818" stroke-width=".6" transform="rotate(-18 6 10)"/><rect x="3" y="2.5" width="10.5" height="10.5" fill="#f2d04a" stroke="#c5a21c" stroke-width=".6" transform="rotate(-8 8 8)"/><rect x="5.4" y="1" width="10.6" height="10.6" fill="#6f9bd1" stroke="#3f6ea8" stroke-width=".6" transform="rotate(8 10 6)"/><rect x="10.6" y="11" width="6.6" height="6.6" rx="1.4" fill="#4e9a3d" stroke="#2f6e26" stroke-width=".6"/><path d="M12 14.3H15.8M13.9 12.4V16.2" stroke="#fff" stroke-width="1.4"/></svg>
<svg style="left:122px;top:211px" width="8" height="5" viewBox="0 0 8 5" ><path d="M0 0H7.4L3.7 4.4Z" fill="#111"/></svg>
<div class="a" style="left:133px;top:202px;width:69px;height:22px;background:#fff;border:1px solid #7a7a7a"></div><div class="t" style="left:136.00px;top:207.00px;letter-spacing:-0.544px">True Color</div>
<div class="t" style="left:208.50px;top:206.50px">?</div>
<div class="a" style="left:5px;top:226px;width:216px;height:178px;background:#fff;border:1px solid #828790"></div><div class="a" style="left:26px;top:287px;width:194px;height:20px;background:#e2e2e2"></div><svg style="left:29px;top:230px" width="13" height="13" viewBox="0 0 13 13" ><rect x=".5" y=".5" width="12" height="12" fill="#fff" stroke="#333" stroke-width="1"/></svg>
<svg style="left:49px;top:228px" width="15" height="15" viewBox="0 0 15 15" ><circle cx="3" cy="12" r="1.2" fill="#fff" stroke="#8a8a8a" stroke-width=".8"/><circle cx="5" cy="5.4" r="1.2" fill="#fff" stroke="#8a8a8a" stroke-width=".8"/><circle cx="11.4" cy="2.4" r="1.2" fill="#fff" stroke="#8a8a8a" stroke-width=".8"/></svg>
<div class="t" style="left:70.50px;top:229.50px;letter-spacing:0.170px;font-weight:bold;font-style:italic;color:#8c8c8c">exampleEvents.gpkg poi...</div>
<svg style="left:29px;top:250px" width="13" height="13" viewBox="0 0 13 13" ><rect x=".5" y=".5" width="12" height="12" fill="#fff" stroke="#333" stroke-width="1"/></svg>
<svg style="left:47px;top:248px" width="18" height="13" viewBox="0 0 18 13" ><path d="M2 3.5C4 .5 7 2.5 9 2C12 1 16.5 .8 16.5 4.8C16.5 8.5 14 10.5 12.2 9.2C10.4 7.8 7.6 7.8 5.8 9.6C3.4 11.8 .6 9 1.2 6.2Z" fill="#e2e2e2" stroke="#9a9a9a" stroke-width=".8"/></svg>
<div class="t" style="left:70.50px;top:249.50px;letter-spacing:0.236px;font-weight:bold;font-style:italic;color:#8c8c8c">exampleEvents.gpkg ex...</div>
<svg style="left:29px;top:270px" width="13" height="13" viewBox="0 0 13 13" ><rect x=".5" y=".5" width="12" height="12" fill="#fff" stroke="#333" stroke-width="1"/></svg>
<svg style="left:49px;top:268px" width="15" height="15" viewBox="0 0 15 15" ><circle cx="3" cy="12" r="1.2" fill="#fff" stroke="#8a8a8a" stroke-width=".8"/><circle cx="5" cy="5.4" r="1.2" fill="#fff" stroke="#8a8a8a" stroke-width=".8"/><circle cx="11.4" cy="2.4" r="1.2" fill="#fff" stroke="#8a8a8a" stroke-width=".8"/></svg>
<div class="t" style="left:70.50px;top:269.50px;letter-spacing:-0.124px;font-weight:bold;font-style:italic;color:#8c8c8c">EOTS Spectral Library</div>
<svg style="left:29px;top:290px" width="13" height="13" viewBox="0 0 13 13" ><rect x=".5" y=".5" width="12" height="12" fill="#fff" stroke="#333" stroke-width="1"/><path d="M2.6 6.6L5.2 9.4L10.4 3.2" stroke="#111" stroke-width="1.2" fill="none"/></svg>
<svg style="left:49px;top:288px" width="15" height="15" viewBox="0 0 15 15" ><circle cx="3" cy="12" r="1.2" fill="#fff" stroke="#5a8ac6" stroke-width=".8"/><circle cx="5" cy="5.4" r="1.2" fill="#fff" stroke="#5a8ac6" stroke-width=".8"/><circle cx="11.4" cy="2.4" r="1.2" fill="#fff" stroke="#5a8ac6" stroke-width=".8"/></svg>
<div class="t" style="left:70.50px;top:289.50px;letter-spacing:-0.100px;font-weight:bold;text-decoration:underline">EOTS Temporal Profiles</div>
<svg style="left:29px;top:310px" width="13" height="13" viewBox="0 0 13 13" ><rect x=".5" y=".5" width="12" height="12" fill="#fff" stroke="#333" stroke-width="1"/><path d="M2.6 6.6L5.2 9.4L10.4 3.2" stroke="#111" stroke-width="1.2" fill="none"/></svg>
<svg style="left:49px;top:309px" width="15" height="15" viewBox="0 0 15 15" ><rect x="1" y="4" width="7" height="10" fill="#fff" stroke="#aaa" stroke-width=".8"/><rect x="4" y="2" width="7" height="10" fill="#fff" stroke="#888" stroke-width=".8"/><rect x="7" y=".6" width="6" height="10" fill="#fff" stroke="#555" stroke-width=".9"/><path d="M9 3V8M11 3V8" stroke="#555" stroke-width=".8"/></svg>
<div class="t" style="left:70.50px;top:309.50px;letter-spacing:-0.205px">Raster Time Series</div>
<svg style="left:11px;top:313px" width="10" height="7" viewBox="0 0 10 7" ><path d="M.8 .8L4.6 5L8.6 .8" stroke="#222" stroke-width="1.3" fill="none"/></svg>
<svg style="left:49px;top:330px" width="13" height="13" viewBox="0 0 13 13" ><rect x=".5" y=".5" width="12" height="12" fill="#fff" stroke="#333" stroke-width="1"/><path d="M2.6 6.6L5.2 9.4L10.4 3.2" stroke="#111" stroke-width="1.2" fill="none"/></svg>
<svg style="left:70px;top:330px" width="13" height="13" viewBox="0 0 13 13" ><rect width="13" height="13" fill="#dbe6f3"/><rect x="0" y="0" width="4.4" height="4.4" fill="#35507a"/><rect x="8.6" y="0" width="4.4" height="4.4" fill="#1c2f4f"/><rect x="4.4" y="4.4" width="4.2" height="4.2" fill="#1c2f4f"/><rect x="0" y="8.6" width="4.4" height="4.4" fill="#27426c"/><rect x="4.4" y="0" width="4.2" height="4.4" fill="#9dbbe0"/><rect x="8.6" y="4.4" width="4.4" height="4.2" fill="#9dbbe0"/><rect x="0" y="4.4" width="4.4" height="4.2" fill="#8fb0da"/><rect x="8.6" y="8.6" width="4.4" height="4.4" fill="#c6d6ea"/></svg>
<div class="t" style="left:90.50px;top:329.50px;letter-spacing:-0.465px;font-weight:bold">Landsat</div>
<svg style="left:49px;top:350px" width="13" height="13" viewBox="0 0 13 13" ><rect x=".5" y=".5" width="12" height="12" fill="#fff" stroke="#333" stroke-width="1"/><path d="M2.6 6.6L5.2 9.4L10.4 3.2" stroke="#111" stroke-width="1.2" fill="none"/></svg>
<svg style="left:70px;top:350px" width="13" height="13" viewBox="0 0 13 13" ><rect width="13" height="13" fill="#dbe6f3"/><rect x="0" y="0" width="4.4" height="4.4" fill="#35507a"/><rect x="8.6" y="0" width="4.4" height="4.4" fill="#1c2f4f"/><rect x="4.4" y="4.4" width="4.2" height="4.2" fill="#1c2f4f"/><rect x="0" y="8.6" width="4.4" height="4.4" fill="#27426c"/><rect x="4.4" y="0" width="4.2" height="4.4" fill="#9dbbe0"/><rect x="8.6" y="4.4" width="4.4" height="4.2" fill="#9dbbe0"/><rect x="0" y="4.4" width="4.4" height="4.2" fill="#8fb0da"/><rect x="8.6" y="8.6" width="4.4" height="4.4" fill="#c6d6ea"/></svg>
<div class="t" style="left:90.50px;top:349.50px;letter-spacing:-0.458px;font-weight:bold">RapidEye</div>
<div class="btn" style="left:3px;top:413px;width:220px;height:23px"></div><svg style="left:7px;top:418px" width="16" height="12" viewBox="0 0 16 12" ><path d="M0.8599999999999994 6.3C4.43 1.709999999999999 11.57 1.709999999999999 15.14 6.3C11.57 10.339200000000002 4.43 10.339200000000002 0.8599999999999994 6.3Z" fill="#fff" stroke="#8a8a8a" stroke-width="0.6120000000000001"/><path d="M0.5199999999999994 5.212C4.43 -0.676800000000001 11.927 -0.676800000000001 15.684000000000001 5.62" fill="none" stroke="#9a9a9a" stroke-width="0.544"/><circle cx="8" cy="6.096" r="2.924" fill="#6f9bd1" stroke="#35588a" stroke-width="0.476"/><circle cx="8" cy="6.096" r="1.4280000000000002" fill="#1a2c48"/><circle cx="7.116" cy="5.144" r="0.68" fill="#fff"/></svg>
<div class="t" style="left:27.20px;top:418.00px;letter-spacing:-0.288px">Map View 2 "Near Infrared"</div>
<div class="dt" style="left:1px;top:444px;width:224px;height:24px"></div><div class="t" style="left:6.40px;top:450.00px;letter-spacing:0.026px">Sensors / Products</div>
<svg style="left:186px;top:449px" width="34" height="14" viewBox="0 0 34 14" ><rect x="4.2" y="1" width="7.8" height="7.2" fill="none" stroke="#333" stroke-width="1.5"/><path d="M3.4 1.4H12.8" stroke="#333" stroke-width="2.2"/><rect x=".9" y="5.6" width="7.8" height="7.4" fill="#dcdcdc" stroke="#333" stroke-width="1.5"/><path d="M.2 6H9.4" stroke="#333" stroke-width="2.2"/><path d="M21.4 2L31.6 13M31.6 2L21.4 13" stroke="#333" stroke-width="2.6"/></svg>
<div class="a" style="left:1px;top:469px;width:224px;height:148px;background:#fff"></div><div class="a" style="left:1px;top:553px;width:15px;height:48px;background:#f0f0f0"></div><svg style="left:38px;top:470px" width="10" height="5" viewBox="0 0 10 5" ><path d="M.5 .5L4.5 4L8.5 .5" stroke="#777" stroke-width=".9" fill="none"/></svg>
<div class="t" style="left:27.25px;top:475.00px;letter-spacing:0.274px">Name</div>
<div class="t" style="left:77.25px;top:475.00px;letter-spacing:-0.120px">Band</div>
<div class="t" style="left:115.25px;top:475.00px;letter-spacing:-0.385px">Dates</div>
<div class="t" style="left:154.50px;top:475.00px;letter-spacing:0.057px">Images</div>
<div class="a" style="left:15px;top:470px;width:1px;height:82px;background:#dcdcdc"></div><div class="a" style="left:70px;top:470px;width:1px;height:82px;background:#dcdcdc"></div><div class="a" style="left:109px;top:470px;width:1px;height:82px;background:#dcdcdc"></div><div class="a" style="left:149px;top:470px;width:1px;height:82px;background:#dcdcdc"></div><div class="a" style="left:197px;top:470px;width:1px;height:82px;background:#dcdcdc"></div><div class="a" style="left:15px;top:522px;width:210px;height:1px;background:#dcdcdc"></div><div class="a" style="left:15px;top:552px;width:210px;height:1px;background:#dcdcdc"></div><div class="t" style="left:5.50px;top:500.50px">0</div>
<div class="t" style="left:19.30px;top:500.50px;letter-spacing:-0.054px">Landsat</div>
<div class="t" style="left:74.00px;top:500.50px">6</div>
<div class="t" style="left:113.00px;top:500.50px;letter-spacing:-0.192px">28</div>
<div class="t" style="left:153.00px;top:500.50px;letter-spacing:-0.192px">28</div>
<div class="t" style="left:201.00px;top:500.50px;letter-spacing:-0.394px">0.49,</div>
<div class="t" style="left:5.50px;top:530.50px">1</div>
<div class="t" style="left:19.30px;top:530.50px;letter-spacing:-0.224px">RapidEye</div>
<div class="t" style="left:74.00px;top:530.50px">5</div>
<div class="t" style="left:113.00px;top:530.50px">4</div>
<div class="t" style="left:153.00px;top:530.50px">4</div>
<div class="t" style="left:201.00px;top:530.50px;letter-spacing:-0.195px">unde</div>
<div class="a" style="left:225px;top:469px;width:5px;height:148px;background:#f0f0f0"></div><div class="a" style="left:1px;top:600px;width:224px;height:17px;background:#f0f0f0"></div><div class="a" style="left:18px;top:601px;width:31px;height:15px;background:#cdcdcd"></div><svg style="left:5px;top:604px" width="7" height="9" viewBox="0 0 7 9" ><path d="M5.5 .8L1.5 4.5L5.5 8.2" stroke="#444" stroke-width="1.5" fill="none"/></svg>
<svg style="left:212px;top:604px" width="7" height="9" viewBox="0 0 7 9" ><path d="M1.5 .8L5.5 4.5L1.5 8.2" stroke="#444" stroke-width="1.5" fill="none"/></svg>
<div class="a" style="left:229px;top:86px;width:1254px;height:531px;background:#000;border:1px solid #000"></div><div class="a" style="left:230px;top:87px;width:1252px;height:529px;border:1px solid #fff"></div><div class="a" style="left:231px;top:88px;width:1250px;height:499px;border:1px solid #7c8494;border-right:none;border-bottom:none"></div><div class="a" style="left:228px;top:86px;width:1px;height:531px;background:#fafafa"></div><svg style="left:0px;top:0px" width="1484" height="1032" viewBox="0 0 1484 1032" ><defs><clipPath id="rc"><rect x="0" y="0" width="249" height="169"/></clipPath><filter id="rb" x="-5%" y="-5%" width="110%" height="110%"><feGaussianBlur stdDeviation="2.6"/></filter><filter id="rb2" x="-5%" y="-5%" width="110%" height="110%"><feGaussianBlur stdDeviation=".9"/></filter><filter id="rn" x="0" y="0" width="100%" height="100%"><feTurbulence type="fractalNoise" baseFrequency=".28" numOctaves="2" seed="7"/><feColorMatrix values="0 0 0 0 0  0 0 0 0 0  0 0 0 0 0  1.6 0 0 0 -.62"/></filter><filter id="rw" x="0" y="0" width="100%" height="100%"><feTurbulence type="fractalNoise" baseFrequency=".24" numOctaves="2" seed="23"/><feColorMatrix values="0 0 0 0 1  0 0 0 0 1  0 0 0 0 .9  0 1.8 0 0 -.74"/></filter></defs><path fill="#452" d="M232 135h7v7h-7zM266 135h7v7h-7zM425 210h7v7h-7zM432 217h7v7h-7zM466 238h7v6h-7z"/><path fill="#442" d="M239 135h7v7h-7zM232 142h7v7h-7zM246 142h7v7h-7zM232 149h7v7h-7zM239 156h7v6h-7zM246 156h7v6h-7zM356 156h7v6h-7zM287 176h7v7h-7zM328 176h7v7h-7zM342 176h7v7h-7zM328 183h7v7h-7zM315 196h7v7h-7zM260 203h6v7h-6zM260 210h6v7h-6zM432 210h7v7h-7zM294 224h7v7h-7zM432 224h7v7h-7zM287 231h7v7h-7zM473 231h7v7h-7zM287 238h7v6h-7zM294 238h7v6h-7zM459 238h7v6h-7zM301 244h7v7h-7zM397 244h7v7h-7zM308 251h7v7h-7zM411 251h7v7h-7zM315 258h7v7h-7zM342 265h7v7h-7z"/><path fill="#542" d="M246 135h7v7h-7zM328 135h7v7h-7zM253 142h7v7h-7zM439 156h7v6h-7zM349 162h7v7h-7zM425 162h7v7h-7zM335 176h7v7h-7zM280 183h7v7h-7zM446 183h6v7h-6zM452 190h7v6h-7zM273 196h7v7h-7zM446 196h6v7h-6zM266 203h7v7h-7zM377 203h7v7h-7zM384 210h6v7h-6zM294 217h7v7h-7zM363 217h7v7h-7zM384 217h6v7h-6zM425 217h7v7h-7zM349 224h7v7h-7zM363 224h7v7h-7zM377 224h7v7h-7zM432 231h7v7h-7zM439 231h7v7h-7zM446 231h6v7h-6zM452 238h7v6h-7zM335 278h7v7h-7zM328 285h7v7h-7z"/><path fill="#441" d="M253 135h7v7h-7zM342 162h7v7h-7zM342 169h7v7h-7zM349 169h7v7h-7zM280 176h7v7h-7zM432 176h7v7h-7zM253 183h7v7h-7zM273 183h7v7h-7zM432 183h7v7h-7zM287 217h7v7h-7zM287 224h7v7h-7zM384 224h6v7h-6zM301 251h7v7h-7zM404 251h7v7h-7zM418 251h7v7h-7zM315 265h7v7h-7zM349 265h7v7h-7z"/><path fill="#552" d="M260 135h6v7h-6zM239 142h7v7h-7zM260 142h6v7h-6zM239 149h7v7h-7zM356 149h7v7h-7zM232 156h7v6h-7zM363 156h7v6h-7zM273 176h7v7h-7zM349 176h7v7h-7zM425 176h7v7h-7zM246 183h7v7h-7zM335 183h7v7h-7zM342 183h7v7h-7zM349 183h7v7h-7zM425 183h7v7h-7zM322 190h6v6h-6zM432 190h7v6h-7zM439 190h7v6h-7zM446 190h6v6h-6zM322 196h6v7h-6zM439 196h7v7h-7zM308 203h7v7h-7zM370 203h7v7h-7zM384 203h6v7h-6zM425 203h7v7h-7zM432 203h7v7h-7zM439 203h7v7h-7zM446 203h6v7h-6zM301 210h7v7h-7zM308 210h7v7h-7zM363 210h7v7h-7zM390 210h7v7h-7zM439 210h7v7h-7zM446 210h6v7h-6zM322 217h6v7h-6zM342 217h7v7h-7zM349 217h7v7h-7zM356 217h7v7h-7zM390 217h7v7h-7zM439 217h7v7h-7zM335 224h7v7h-7zM356 224h7v7h-7zM390 224h7v7h-7zM425 224h7v7h-7zM439 224h7v7h-7zM294 231h7v7h-7zM452 231h7v7h-7zM459 231h7v7h-7zM363 238h7v6h-7zM308 244h7v7h-7zM315 244h7v7h-7zM404 244h7v7h-7zM411 244h7v7h-7zM418 244h7v7h-7zM349 251h7v7h-7zM349 258h7v7h-7zM322 265h6v7h-6zM328 272h7v6h-7zM335 272h7v6h-7z"/><path fill="#665" d="M273 135h7v7h-7zM260 149h6v7h-6z"/><path fill="#886" d="M280 135h7v7h-7zM273 142h7v7h-7zM266 149h7v7h-7zM418 149h7v7h-7zM432 149h7v7h-7zM266 156h7v6h-7zM287 162h7v7h-7zM473 217h7v7h-7z"/><path fill="#ba8" d="M287 135h7v7h-7zM301 135h7v7h-7zM404 135h7v7h-7zM287 142h7v7h-7zM418 142h7v7h-7zM397 149h7v7h-7zM404 156h7v6h-7z"/><path fill="#dc9" d="M294 135h7v7h-7z"/><path fill="#ca8" d="M308 135h7v7h-7zM411 135h7v7h-7zM280 156h7v6h-7z"/><path fill="#a86" d="M315 135h7v7h-7zM301 156h7v6h-7z"/><path fill="#974" d="M322 135h6v7h-6zM363 142h7v7h-7zM342 238h7v6h-7z"/><path fill="#532" d="M335 135h7v7h-7zM432 169h7v7h-7zM466 176h7v7h-7zM439 183h7v7h-7zM273 190h7v6h-7zM459 190h7v6h-7zM266 196h7v7h-7zM370 217h7v7h-7z"/><path fill="#531" d="M342 135h7v7h-7zM446 135h6v7h-6zM335 142h7v7h-7zM342 142h7v7h-7zM446 142h6v7h-6zM446 149h6v7h-6zM315 156h7v6h-7zM446 156h6v6h-6zM356 162h7v7h-7zM439 176h7v7h-7zM446 176h6v7h-6zM260 183h6v7h-6zM266 183h7v7h-7zM260 190h6v6h-6zM266 190h7v6h-7zM280 190h7v6h-7zM260 196h6v7h-6zM280 196h7v7h-7zM287 203h7v7h-7zM287 210h7v7h-7zM377 217h7v7h-7zM260 231h6v7h-6zM266 231h7v7h-7zM260 238h6v6h-6zM266 238h7v6h-7zM439 238h7v6h-7zM363 244h7v7h-7zM356 251h7v7h-7zM425 251h7v7h-7zM432 251h7v7h-7zM273 285h7v7h-7zM301 285h7v7h-7zM335 285h7v7h-7zM273 292h7v7h-7zM308 292h7v7h-7zM328 292h7v7h-7zM335 292h7v7h-7z"/><path fill="#642" d="M349 135h7v7h-7zM328 142h7v7h-7zM349 142h7v7h-7zM315 149h7v7h-7zM432 162h7v7h-7zM356 169h7v7h-7zM260 176h6v7h-6zM266 176h7v7h-7zM466 183h7v7h-7zM473 183h7v7h-7zM452 196h7v7h-7zM459 196h7v7h-7zM370 210h7v7h-7zM425 238h7v6h-7zM356 244h7v7h-7zM432 244h7v7h-7z"/><path fill="#864" d="M356 135h7v7h-7zM363 135h7v7h-7zM370 142h7v7h-7zM308 149h7v7h-7zM308 156h7v6h-7z"/><path fill="#a85" d="M370 135h7v7h-7z"/><path fill="#975" d="M377 135h7v7h-7z"/><path fill="#a97" d="M384 135h6v7h-6zM301 142h7v7h-7zM425 142h7v7h-7zM432 142h7v7h-7zM273 149h7v7h-7zM404 149h7v7h-7zM273 156h7v6h-7z"/><path fill="#cb9" d="M390 135h7v7h-7zM294 142h7v7h-7zM404 142h7v7h-7zM280 149h7v7h-7zM294 156h7v6h-7z"/><path fill="#b98" d="M397 135h7v7h-7z"/><path fill="#db9" d="M418 135h7v7h-7zM425 135h7v7h-7zM397 142h7v7h-7zM287 149h7v7h-7z"/><path fill="#ca7" d="M432 135h7v7h-7z"/><path fill="#643" d="M439 135h7v7h-7zM439 149h7v7h-7z"/><path fill="#421" d="M452 135h7v7h-7zM452 142h7v7h-7zM328 149h7v7h-7zM335 149h7v7h-7zM452 149h7v7h-7zM322 156h6v6h-6zM328 156h7v6h-7zM335 156h7v6h-7zM452 156h7v6h-7zM322 162h6v7h-6zM452 162h7v7h-7zM446 169h6v7h-6zM459 169h7v7h-7zM466 169h7v7h-7zM287 183h7v7h-7zM287 190h7v6h-7zM294 190h7v6h-7zM294 196h7v7h-7zM239 217h7v7h-7zM260 217h6v7h-6zM266 217h7v7h-7zM239 224h7v7h-7zM266 224h7v7h-7zM246 238h7v6h-7zM253 238h7v6h-7zM253 244h7v7h-7zM384 244h6v7h-6zM390 244h7v7h-7zM253 251h7v7h-7zM390 251h7v7h-7zM439 251h7v7h-7zM246 258h7v7h-7zM253 258h7v7h-7zM260 258h6v7h-6zM273 258h7v7h-7zM370 258h7v7h-7zM377 258h7v7h-7zM390 258h7v7h-7zM418 258h7v7h-7zM425 258h7v7h-7zM432 258h7v7h-7zM439 258h7v7h-7zM446 258h6v7h-6zM253 265h7v7h-7zM260 265h6v7h-6zM273 265h7v7h-7zM418 265h7v7h-7zM425 265h7v7h-7zM446 265h6v7h-6zM253 272h7v6h-7zM363 272h7v6h-7zM411 272h7v6h-7zM446 272h6v6h-6zM253 278h7v7h-7zM260 278h6v7h-6zM266 278h7v7h-7zM349 278h7v7h-7zM411 278h7v7h-7zM446 278h6v7h-6zM253 285h7v7h-7zM294 285h7v7h-7zM342 285h7v7h-7zM370 285h7v7h-7zM266 292h7v7h-7zM342 292h7v7h-7zM377 292h7v7h-7z"/><path fill="#420" d="M459 135h7v7h-7zM459 149h7v7h-7zM232 217h7v7h-7zM377 265h7v7h-7zM384 265h6v7h-6zM356 272h7v6h-7zM404 272h7v6h-7zM246 285h7v7h-7zM411 285h7v7h-7zM418 285h7v7h-7zM246 292h7v7h-7z"/><path fill="#210" d="M466 135h7v7h-7zM473 135h7v7h-7zM466 149h7v7h-7zM473 149h7v7h-7zM232 203h7v7h-7zM239 203h7v7h-7zM232 210h7v7h-7zM239 244h7v7h-7zM294 258h7v7h-7zM287 265h7v7h-7zM280 272h7v6h-7zM287 272h7v6h-7zM370 272h7v6h-7zM384 272h6v6h-6zM390 272h7v6h-7zM452 272h7v6h-7zM466 272h7v6h-7zM473 272h7v6h-7zM294 278h7v7h-7zM425 278h7v7h-7zM432 278h7v7h-7zM356 285h7v7h-7zM363 285h7v7h-7zM384 285h6v7h-6zM390 285h7v7h-7zM425 285h7v7h-7zM439 285h7v7h-7zM356 292h7v7h-7zM363 292h7v7h-7zM432 292h7v7h-7zM439 292h7v7h-7zM446 292h6v7h-6z"/><path fill="#553" d="M266 142h7v7h-7zM459 224h7v7h-7z"/><path fill="#887" d="M280 142h7v7h-7zM425 149h7v7h-7z"/><path fill="#ba7" d="M308 142h7v7h-7zM384 142h6v7h-6z"/><path fill="#965" d="M315 142h7v7h-7z"/><path fill="#753" d="M322 142h6v7h-6z"/><path fill="#764" d="M356 142h7v7h-7zM308 162h7v7h-7zM301 169h7v7h-7zM466 190h7v6h-7zM335 196h7v7h-7zM466 196h7v7h-7zM342 231h7v7h-7z"/><path fill="#985" d="M377 142h7v7h-7zM301 162h7v7h-7zM260 169h6v7h-6z"/><path fill="#cb8" d="M390 142h7v7h-7z"/><path fill="#b97" d="M411 142h7v7h-7z"/><path fill="#653" d="M439 142h7v7h-7zM363 149h7v7h-7zM308 169h7v7h-7z"/><path fill="#411" d="M459 142h7v7h-7zM459 156h7v6h-7zM246 251h7v7h-7zM384 251h6v7h-6zM418 272h7v6h-7zM439 278h7v7h-7zM253 292h7v7h-7zM411 292h7v7h-7zM418 292h7v7h-7zM466 292h7v7h-7zM473 292h7v7h-7z"/><path fill="#211" d="M466 142h7v7h-7zM473 142h7v7h-7zM466 156h7v6h-7zM315 176h7v7h-7zM232 244h7v7h-7zM239 251h7v7h-7zM397 258h7v7h-7zM404 258h7v7h-7zM397 265h7v7h-7zM404 265h7v7h-7zM273 272h7v6h-7zM294 272h7v6h-7zM459 272h7v6h-7zM273 278h7v7h-7zM287 278h7v7h-7zM370 278h7v7h-7zM377 278h7v7h-7zM384 278h6v7h-6zM390 278h7v7h-7zM459 278h7v7h-7zM466 278h7v7h-7zM473 278h7v7h-7zM432 285h7v7h-7zM446 285h6v7h-6zM384 292h6v7h-6zM390 292h7v7h-7zM425 292h7v7h-7z"/><path fill="#431" d="M246 149h7v7h-7zM349 149h7v7h-7zM315 162h7v7h-7zM439 162h7v7h-7zM446 162h6v7h-6zM315 169h7v7h-7zM308 176h7v7h-7zM452 183h7v7h-7zM459 183h7v7h-7zM273 203h7v7h-7zM280 203h7v7h-7zM301 203h7v7h-7zM266 210h7v7h-7zM280 217h7v7h-7zM370 231h7v7h-7zM384 231h6v7h-6zM390 231h7v7h-7zM390 238h7v6h-7zM446 238h6v6h-6zM473 238h7v6h-7zM370 244h7v7h-7zM439 244h7v7h-7zM363 251h7v7h-7zM397 251h7v7h-7zM356 258h7v7h-7zM363 258h7v7h-7zM356 265h7v7h-7zM322 272h6v6h-6zM342 272h7v6h-7zM349 272h7v6h-7zM280 285h7v7h-7zM308 285h7v7h-7zM322 285h6v7h-6z"/><path fill="#432" d="M253 149h7v7h-7zM294 176h7v7h-7zM301 176h7v7h-7zM232 190h7v6h-7zM239 190h7v6h-7zM370 224h7v7h-7z"/><path fill="#dca" d="M294 149h7v7h-7zM287 156h7v6h-7z"/><path fill="#b96" d="M301 149h7v7h-7z"/><path fill="#521" d="M322 149h6v7h-6zM287 196h7v7h-7zM260 224h6v7h-6zM384 258h6v7h-6zM287 292h7v7h-7zM294 292h7v7h-7z"/><path fill="#331" d="M342 149h7v7h-7zM349 156h7v6h-7zM335 162h7v7h-7zM328 169h7v7h-7zM335 169h7v7h-7zM452 176h7v7h-7zM253 190h7v6h-7zM315 190h7v6h-7zM253 196h7v7h-7zM308 196h7v7h-7zM253 203h7v7h-7zM370 238h7v6h-7zM273 244h7v7h-7zM287 244h7v7h-7zM294 244h7v7h-7zM452 244h7v7h-7zM459 244h7v7h-7zM466 244h7v7h-7zM473 244h7v7h-7zM294 251h7v7h-7zM301 258h7v7h-7zM308 258h7v7h-7zM308 265h7v7h-7zM315 272h7v6h-7zM315 292h7v7h-7z"/><path fill="#663" d="M370 149h7v7h-7zM418 162h7v7h-7zM273 169h7v7h-7zM253 176h7v7h-7zM349 190h7v6h-7zM342 196h7v7h-7zM322 203h6v7h-6zM390 203h7v7h-7zM315 210h7v7h-7zM328 210h7v7h-7zM335 210h7v7h-7zM356 210h7v7h-7zM397 210h7v7h-7zM459 210h7v7h-7zM308 217h7v7h-7zM335 217h7v7h-7zM301 224h7v7h-7zM315 224h7v7h-7zM322 224h6v7h-6zM328 224h7v7h-7zM446 224h6v7h-6zM452 224h7v7h-7zM335 231h7v7h-7zM356 231h7v7h-7zM356 238h7v6h-7zM349 244h7v7h-7z"/><path fill="#774" d="M377 149h7v7h-7zM273 162h7v7h-7zM280 162h7v7h-7zM356 183h7v7h-7z"/><path fill="#bc7" d="M384 149h6v7h-6zM404 176h7v7h-7z"/><path fill="#aa7" d="M390 149h7v7h-7zM253 169h7v7h-7z"/><path fill="#987" d="M411 149h7v7h-7z"/><path fill="#443" d="M253 156h7v6h-7z"/><path fill="#776" d="M260 156h6v6h-6zM294 162h7v7h-7z"/><path fill="#321" d="M342 156h7v6h-7zM328 162h7v7h-7zM459 162h7v7h-7zM466 162h7v7h-7zM473 162h7v7h-7zM322 169h6v7h-6zM439 169h7v7h-7zM452 169h7v7h-7zM473 169h7v7h-7zM459 176h7v7h-7zM294 183h7v7h-7zM301 183h7v7h-7zM308 183h7v7h-7zM315 183h7v7h-7zM322 183h6v7h-6zM246 190h7v6h-7zM301 190h7v6h-7zM308 190h7v6h-7zM232 196h7v7h-7zM239 196h7v7h-7zM246 196h7v7h-7zM301 196h7v7h-7zM246 203h7v7h-7zM246 210h7v7h-7zM253 210h7v7h-7zM273 210h7v7h-7zM280 210h7v7h-7zM246 217h7v7h-7zM253 217h7v7h-7zM273 217h7v7h-7zM246 224h7v7h-7zM253 224h7v7h-7zM273 224h7v7h-7zM280 224h7v7h-7zM232 231h7v7h-7zM239 231h7v7h-7zM246 231h7v7h-7zM253 231h7v7h-7zM273 231h7v7h-7zM280 231h7v7h-7zM377 231h7v7h-7zM232 238h7v6h-7zM239 238h7v6h-7zM273 238h7v6h-7zM280 238h7v6h-7zM377 238h7v6h-7zM384 238h6v6h-6zM260 244h6v7h-6zM266 244h7v7h-7zM280 244h7v7h-7zM377 244h7v7h-7zM446 244h6v7h-6zM260 251h6v7h-6zM266 251h7v7h-7zM273 251h7v7h-7zM280 251h7v7h-7zM287 251h7v7h-7zM370 251h7v7h-7zM377 251h7v7h-7zM446 251h6v7h-6zM452 251h7v7h-7zM459 251h7v7h-7zM466 251h7v7h-7zM473 251h7v7h-7zM232 258h7v7h-7zM239 258h7v7h-7zM266 258h7v7h-7zM280 258h7v7h-7zM411 258h7v7h-7zM452 258h7v7h-7zM459 258h7v7h-7zM466 258h7v7h-7zM473 258h7v7h-7zM232 265h7v7h-7zM239 265h7v7h-7zM266 265h7v7h-7zM301 265h7v7h-7zM363 265h7v7h-7zM411 265h7v7h-7zM452 265h7v7h-7zM459 265h7v7h-7zM466 265h7v7h-7zM473 265h7v7h-7zM232 272h7v6h-7zM239 272h7v6h-7zM246 272h7v6h-7zM301 272h7v6h-7zM308 272h7v6h-7zM232 278h7v7h-7zM239 278h7v7h-7zM246 278h7v7h-7zM301 278h7v7h-7zM308 278h7v7h-7zM315 278h7v7h-7zM322 278h6v7h-6zM342 278h7v7h-7zM397 278h7v7h-7zM232 285h7v7h-7zM239 285h7v7h-7zM260 285h6v7h-6zM266 285h7v7h-7zM287 285h7v7h-7zM315 285h7v7h-7zM397 285h7v7h-7zM404 285h7v7h-7zM452 285h7v7h-7zM459 285h7v7h-7zM232 292h7v7h-7zM239 292h7v7h-7zM260 292h6v7h-6zM322 292h6v7h-6zM397 292h7v7h-7zM404 292h7v7h-7zM452 292h7v7h-7zM459 292h7v7h-7z"/><path fill="#673" d="M370 156h7v6h-7zM377 156h7v6h-7zM418 169h7v7h-7zM425 190h7v6h-7zM425 196h7v7h-7zM328 203h7v7h-7zM356 203h7v7h-7zM397 203h7v7h-7zM418 203h7v7h-7zM459 203h7v7h-7zM322 210h6v7h-6zM315 217h7v7h-7zM418 217h7v7h-7zM452 217h7v7h-7zM459 217h7v7h-7zM301 231h7v7h-7zM315 231h7v7h-7zM404 231h7v7h-7zM418 231h7v7h-7zM308 238h7v6h-7zM322 238h6v6h-6zM411 238h7v6h-7zM418 238h7v6h-7zM322 244h6v7h-6zM322 251h6v7h-6zM335 251h7v7h-7zM328 258h7v7h-7zM328 265h7v7h-7zM335 265h7v7h-7z"/><path fill="#9a6" d="M384 156h6v6h-6zM253 162h7v7h-7zM404 183h7v7h-7z"/><path fill="#bb7" d="M390 156h7v6h-7z"/><path fill="#cc8" d="M397 156h7v6h-7z"/><path fill="#775" d="M411 156h7v6h-7zM425 156h7v6h-7zM232 162h7v7h-7zM239 176h7v7h-7zM232 183h7v7h-7zM466 217h7v7h-7zM473 224h7v7h-7z"/><path fill="#785" d="M418 156h7v6h-7z"/><path fill="#765" d="M432 156h7v6h-7z"/><path fill="#221" d="M473 156h7v6h-7zM322 176h6v7h-6zM239 210h7v7h-7zM232 251h7v7h-7z"/><path fill="#675" d="M239 162h7v7h-7z"/><path fill="#996" d="M246 162h7v7h-7z"/><path fill="#a95" d="M260 162h6v7h-6z"/><path fill="#874" d="M266 162h7v7h-7zM266 169h7v7h-7zM328 190h7v6h-7zM328 196h7v7h-7zM473 196h7v7h-7zM349 231h7v7h-7zM349 238h7v6h-7z"/><path fill="#652" d="M363 162h7v7h-7zM363 169h7v7h-7zM425 169h7v7h-7zM425 231h7v7h-7z"/><path fill="#784" d="M370 162h7v7h-7zM377 162h7v7h-7zM384 162h6v7h-6zM411 162h7v7h-7zM370 169h7v7h-7zM377 169h7v7h-7zM411 176h7v7h-7zM418 176h7v7h-7zM363 183h7v7h-7zM418 196h7v7h-7zM404 203h7v7h-7zM466 203h7v7h-7zM473 203h7v7h-7zM418 210h7v7h-7zM466 210h7v7h-7zM397 217h7v7h-7zM404 217h7v7h-7zM411 217h7v7h-7zM397 224h7v7h-7zM404 224h7v7h-7zM418 224h7v7h-7zM308 231h7v7h-7zM301 238h7v6h-7zM328 251h7v7h-7z"/><path fill="#895" d="M390 162h7v7h-7zM397 169h7v7h-7zM370 176h7v7h-7zM377 176h7v7h-7zM404 190h7v6h-7zM377 196h7v7h-7z"/><path fill="#ab6" d="M397 162h7v7h-7zM390 176h7v7h-7zM397 176h7v7h-7zM397 183h7v7h-7z"/><path fill="#aa6" d="M404 162h7v7h-7z"/><path fill="#786" d="M232 169h7v7h-7zM232 176h7v7h-7z"/><path fill="#897" d="M239 169h7v7h-7z"/><path fill="#ab7" d="M246 169h7v7h-7z"/><path fill="#563" d="M280 169h7v7h-7zM246 176h7v7h-7zM349 196h7v7h-7zM466 231h7v7h-7zM404 238h7v6h-7zM342 251h7v7h-7z"/><path fill="#664" d="M287 169h7v7h-7zM294 169h7v7h-7zM239 183h7v7h-7zM466 224h7v7h-7z"/><path fill="#8a5" d="M384 169h6v7h-6z"/><path fill="#894" d="M390 169h7v7h-7zM404 169h7v7h-7zM363 190h7v6h-7zM418 190h7v6h-7zM363 196h7v7h-7zM390 196h7v7h-7zM411 210h7v7h-7zM473 210h7v7h-7zM411 224h7v7h-7zM411 231h7v7h-7z"/><path fill="#783" d="M411 169h7v7h-7zM418 183h7v7h-7zM356 190h7v6h-7zM328 244h7v7h-7zM335 244h7v7h-7zM335 258h7v7h-7z"/><path fill="#773" d="M356 176h7v7h-7zM356 196h7v7h-7zM335 203h7v7h-7zM404 210h7v7h-7zM342 244h7v7h-7z"/><path fill="#884" d="M363 176h7v7h-7z"/><path fill="#9b5" d="M384 176h6v7h-6zM377 190h7v6h-7zM397 196h7v7h-7z"/><path fill="#631" d="M473 176h7v7h-7z"/><path fill="#ab5" d="M370 183h7v7h-7zM377 183h7v7h-7zM370 190h7v6h-7z"/><path fill="#9a5" d="M384 183h6v7h-6zM390 183h7v7h-7zM390 190h7v6h-7zM397 190h7v6h-7zM370 196h7v7h-7zM384 196h6v7h-6zM404 196h7v7h-7z"/><path fill="#885" d="M411 183h7v7h-7z"/><path fill="#763" d="M335 190h7v6h-7zM473 190h7v6h-7zM335 238h7v6h-7z"/><path fill="#662" d="M342 190h7v6h-7zM349 203h7v7h-7zM363 203h7v7h-7zM452 203h7v7h-7zM342 210h7v7h-7zM349 210h7v7h-7zM328 217h7v7h-7zM446 217h6v7h-6zM342 224h7v7h-7zM322 231h6v7h-6zM363 231h7v7h-7zM397 231h7v7h-7zM328 238h7v6h-7zM397 238h7v6h-7zM315 251h7v7h-7zM322 258h6v7h-6zM342 258h7v7h-7z"/><path fill="#ac6" d="M384 190h6v6h-6z"/><path fill="#794" d="M411 190h7v6h-7zM411 196h7v7h-7zM411 203h7v7h-7z"/><path fill="#562" d="M432 196h7v7h-7zM315 203h7v7h-7zM342 203h7v7h-7zM452 210h7v7h-7zM301 217h7v7h-7zM308 224h7v7h-7zM328 231h7v7h-7zM315 238h7v6h-7z"/><path fill="#632" d="M294 203h7v7h-7zM280 292h7v7h-7zM301 292h7v7h-7z"/><path fill="#541" d="M294 210h7v7h-7zM425 244h7v7h-7zM328 278h7v7h-7z"/><path fill="#641" d="M377 210h7v7h-7zM432 238h7v6h-7z"/><path fill="#311" d="M232 224h7v7h-7zM287 258h7v7h-7zM280 265h7v7h-7zM370 265h7v7h-7zM432 265h7v7h-7zM397 272h7v6h-7zM432 272h7v6h-7zM280 278h7v7h-7zM356 278h7v7h-7zM452 278h7v7h-7zM377 285h7v7h-7zM466 285h7v7h-7zM473 285h7v7h-7z"/><path fill="#310" d="M246 244h7v7h-7zM260 272h6v6h-6zM266 272h7v6h-7zM377 272h7v6h-7zM425 272h7v6h-7zM439 272h7v6h-7z"/><path fill="#320" d="M246 265h7v7h-7zM390 265h7v7h-7zM439 265h7v7h-7z"/><path fill="#220" d="M294 265h7v7h-7z"/><path fill="#410" d="M363 278h7v7h-7zM404 278h7v7h-7zM418 278h7v7h-7zM349 285h7v7h-7zM349 292h7v7h-7zM370 292h7v7h-7z"/><rect x="443" y="135" width="38" height="7" fill="#000"/><path fill="#210" d="M482 135h7v7h-7zM551 135h7v7h-7zM482 149h7v7h-7zM558 156h7v6h-7zM634 292h6v7h-6z"/><path fill="#101" d="M489 135h7v7h-7zM572 142h6v7h-6zM496 149h7v7h-7zM516 149h7v7h-7zM489 156h7v6h-7zM572 162h6v7h-6z"/><path fill="#100" d="M496 135h7v7h-7zM503 135h7v7h-7zM510 135h6v7h-6zM516 135h7v7h-7zM537 135h7v7h-7zM565 135h7v7h-7zM572 135h6v7h-6zM496 142h7v7h-7zM503 142h7v7h-7zM510 142h6v7h-6zM516 142h7v7h-7zM558 142h7v7h-7zM565 142h7v7h-7zM503 149h7v7h-7zM510 149h6v7h-6zM565 149h7v7h-7zM572 149h6v7h-6zM578 149h7v7h-7zM482 156h7v6h-7zM510 156h6v6h-6zM565 156h7v6h-7zM572 156h6v6h-6zM489 162h7v7h-7zM565 162h7v7h-7zM723 162h7v7h-7zM565 176h7v7h-7zM689 272h7v6h-7zM675 278h7v7h-7zM682 278h7v7h-7zM682 292h7v7h-7z"/><path fill="#200" d="M523 135h7v7h-7zM530 135h7v7h-7zM523 142h7v7h-7zM558 149h7v7h-7zM482 162h7v7h-7zM558 162h7v7h-7zM496 169h7v7h-7z"/><path fill="#201" d="M544 135h7v7h-7zM482 142h7v7h-7zM537 142h7v7h-7zM585 149h7v7h-7zM516 156h7v6h-7zM496 162h7v7h-7zM503 162h7v7h-7zM551 162h7v7h-7z"/><path fill="#111" d="M558 135h7v7h-7zM503 156h7v6h-7zM585 156h7v6h-7z"/><path fill="#212" d="M578 135h7v7h-7zM578 142h7v7h-7zM530 149h7v7h-7zM544 149h7v7h-7zM523 156h7v6h-7zM530 156h7v6h-7zM510 162h6v7h-6zM516 162h7v7h-7zM523 162h7v7h-7zM510 176h6v7h-6z"/><path fill="#312" d="M585 135h7v7h-7zM585 142h7v7h-7zM537 149h7v7h-7zM592 149h7v7h-7zM723 149h7v7h-7zM716 156h7v6h-7zM723 156h7v6h-7zM530 162h7v7h-7zM510 169h6v7h-6zM516 169h7v7h-7zM530 169h7v7h-7zM510 183h6v7h-6z"/><path fill="#735" d="M592 135h7v7h-7z"/><path fill="#846" d="M599 135h7v7h-7zM613 203h7v7h-7zM654 210h7v7h-7zM696 217h6v7h-6zM606 231h7v7h-7zM654 231h7v7h-7zM696 231h6v7h-6z"/><path fill="#a78" d="M606 135h7v7h-7zM716 196h7v7h-7z"/><path fill="#b78" d="M613 135h7v7h-7zM668 183h7v7h-7z"/><path fill="#c89" d="M620 135h7v7h-7zM654 135h7v7h-7zM668 135h7v7h-7zM647 149h7v7h-7zM654 149h7v7h-7zM640 156h7v6h-7zM661 176h7v7h-7zM723 190h7v6h-7zM716 210h7v7h-7z"/><path fill="#b88" d="M627 135h7v7h-7zM647 135h7v7h-7zM620 142h7v7h-7zM627 142h7v7h-7zM675 142h7v7h-7zM634 156h6v6h-6zM647 156h7v6h-7zM654 183h7v7h-7zM661 183h7v7h-7zM723 196h7v7h-7zM716 203h7v7h-7z"/><path fill="#fcb" d="M634 135h6v7h-6z"/><path fill="#eca" d="M640 135h7v7h-7zM640 142h7v7h-7z"/><path fill="#d9a" d="M661 135h7v7h-7zM675 135h7v7h-7zM661 142h7v7h-7z"/><path fill="#a88" d="M682 135h7v7h-7z"/><path fill="#774" d="M689 135h7v7h-7z"/><path fill="#553" d="M696 135h6v7h-6zM696 142h6v7h-6zM702 162h7v7h-7zM702 169h7v7h-7zM709 169h7v7h-7zM696 196h6v7h-6zM613 244h7v7h-7zM606 251h7v7h-7zM613 251h7v7h-7zM551 285h7v7h-7zM558 285h7v7h-7zM551 292h7v7h-7z"/><path fill="#332" d="M702 135h7v7h-7zM709 135h7v7h-7zM702 142h7v7h-7zM606 162h7v7h-7zM599 169h7v7h-7zM696 183h6v7h-6zM503 196h7v7h-7zM537 196h7v7h-7zM530 244h7v7h-7zM620 244h7v7h-7zM510 251h6v7h-6zM592 258h7v7h-7zM606 258h7v7h-7zM675 258h7v7h-7zM585 272h7v6h-7zM551 278h7v7h-7z"/><path fill="#644" d="M716 135h7v7h-7zM606 149h7v7h-7zM620 169h7v7h-7zM682 169h7v7h-7zM599 176h7v7h-7zM709 176h7v7h-7zM716 176h7v7h-7zM682 183h7v7h-7zM516 190h7v6h-7zM530 190h7v6h-7zM516 196h7v7h-7zM558 203h7v7h-7zM551 217h7v7h-7zM634 217h6v7h-6zM640 217h7v7h-7zM640 224h7v7h-7zM620 231h7v7h-7zM634 231h6v7h-6zM709 231h7v7h-7zM716 231h7v7h-7zM723 231h7v7h-7zM634 238h6v6h-6zM702 238h7v6h-7zM709 238h7v6h-7zM592 251h7v7h-7zM640 251h7v7h-7zM661 251h7v7h-7zM668 251h7v7h-7zM689 251h7v7h-7zM551 258h7v7h-7zM585 265h7v7h-7zM565 272h7v6h-7z"/><path fill="#744" d="M723 135h7v7h-7zM689 156h7v6h-7zM627 162h7v7h-7zM530 183h7v7h-7zM592 183h7v7h-7zM675 183h7v7h-7zM709 183h7v7h-7zM523 190h7v6h-7zM702 190h7v6h-7zM696 203h6v7h-6zM696 210h6v7h-6zM558 224h7v7h-7zM620 238h7v6h-7zM661 244h7v7h-7zM668 244h7v7h-7zM675 244h7v7h-7zM682 244h7v7h-7zM689 244h7v7h-7zM551 251h7v7h-7zM647 251h7v7h-7zM585 258h7v7h-7zM558 265h7v7h-7z"/><path fill="#211" d="M489 142h7v7h-7zM530 142h7v7h-7zM544 142h7v7h-7zM489 149h7v7h-7zM523 149h7v7h-7zM551 149h7v7h-7zM496 156h7v6h-7zM551 156h7v6h-7zM592 156h7v6h-7zM537 162h7v7h-7zM544 162h7v7h-7zM578 162h7v7h-7zM716 162h7v7h-7zM482 169h7v7h-7zM489 169h7v7h-7zM503 169h7v7h-7zM537 169h7v7h-7zM544 169h7v7h-7zM551 169h7v7h-7zM723 169h7v7h-7zM496 176h7v7h-7zM503 176h7v7h-7zM496 183h7v7h-7zM503 183h7v7h-7zM565 183h7v7h-7zM572 183h6v7h-6zM634 265h6v7h-6zM640 265h7v7h-7zM640 272h7v6h-7zM640 278h7v7h-7zM634 285h6v7h-6zM640 285h7v7h-7zM640 292h7v7h-7z"/><path fill="#110" d="M551 142h7v7h-7zM578 156h7v6h-7zM558 169h7v7h-7zM565 169h7v7h-7zM572 169h6v7h-6zM572 176h6v7h-6zM634 272h6v6h-6zM661 272h7v6h-7zM668 272h7v6h-7zM675 272h7v6h-7zM682 272h7v6h-7zM696 272h6v6h-6zM634 278h6v7h-6zM661 278h7v7h-7zM668 278h7v7h-7zM689 278h7v7h-7zM696 278h6v7h-6zM675 285h7v7h-7zM682 285h7v7h-7zM675 292h7v7h-7z"/><path fill="#745" d="M592 142h7v7h-7zM523 183h7v7h-7zM578 190h7v6h-7zM675 190h7v6h-7zM682 196h7v7h-7zM682 203h7v7h-7zM585 210h7v7h-7zM599 210h7v7h-7zM613 210h7v7h-7zM620 210h7v7h-7zM627 210h7v7h-7zM689 210h7v7h-7zM585 217h7v7h-7zM613 217h7v7h-7zM613 224h7v7h-7zM682 224h7v7h-7zM613 231h7v7h-7zM551 238h7v6h-7zM682 238h7v6h-7zM696 238h6v6h-6zM551 244h7v7h-7zM640 244h7v7h-7zM647 244h7v7h-7zM572 251h6v7h-6zM585 251h7v7h-7zM654 251h7v7h-7zM558 258h7v7h-7zM578 265h7v7h-7z"/><path fill="#856" d="M599 142h7v7h-7zM716 183h7v7h-7zM599 217h7v7h-7z"/><path fill="#a77" d="M606 142h7v7h-7zM613 142h7v7h-7zM682 142h7v7h-7zM668 176h7v7h-7zM716 190h7v6h-7z"/><path fill="#ca9" d="M634 142h6v7h-6z"/><path fill="#c99" d="M647 142h7v7h-7zM654 142h7v7h-7zM654 176h7v7h-7zM723 203h7v7h-7z"/><path fill="#d99" d="M668 142h7v7h-7zM647 183h7v7h-7zM723 210h7v7h-7z"/><path fill="#654" d="M689 142h7v7h-7zM627 149h7v7h-7zM689 196h7v7h-7zM606 244h7v7h-7z"/><path fill="#321" d="M709 142h7v7h-7zM599 162h7v7h-7zM585 169h7v7h-7zM689 169h7v7h-7zM696 169h6v7h-6zM537 176h7v7h-7zM551 176h7v7h-7zM585 176h7v7h-7zM551 183h7v7h-7zM558 183h7v7h-7zM489 190h7v6h-7zM503 190h7v6h-7zM544 190h7v6h-7zM558 190h7v6h-7zM496 196h7v7h-7zM482 203h7v7h-7zM482 217h7v7h-7zM489 217h7v7h-7zM482 224h7v7h-7zM489 224h7v7h-7zM489 231h7v7h-7zM503 231h7v7h-7zM482 238h7v6h-7zM489 238h7v6h-7zM496 238h7v6h-7zM723 244h7v7h-7zM482 251h7v7h-7zM489 251h7v7h-7zM627 251h7v7h-7zM702 251h7v7h-7zM723 251h7v7h-7zM482 258h7v7h-7zM503 258h7v7h-7zM599 258h7v7h-7zM627 258h7v7h-7zM647 258h7v7h-7zM654 258h7v7h-7zM661 258h7v7h-7zM668 258h7v7h-7zM689 258h7v7h-7zM696 258h6v7h-6zM702 258h7v7h-7zM716 258h7v7h-7zM482 265h7v7h-7zM503 265h7v7h-7zM523 265h7v7h-7zM620 265h7v7h-7zM647 265h7v7h-7zM675 265h7v7h-7zM702 265h7v7h-7zM709 265h7v7h-7zM716 265h7v7h-7zM489 272h7v6h-7zM503 272h7v6h-7zM523 272h7v6h-7zM537 272h7v6h-7zM544 272h7v6h-7zM551 272h7v6h-7zM592 272h7v6h-7zM606 272h7v6h-7zM613 272h7v6h-7zM620 272h7v6h-7zM723 272h7v6h-7zM489 278h7v7h-7zM516 278h7v7h-7zM530 278h7v7h-7zM544 278h7v7h-7zM578 278h7v7h-7zM585 278h7v7h-7zM599 278h7v7h-7zM613 278h7v7h-7zM627 278h7v7h-7zM709 278h7v7h-7zM716 278h7v7h-7zM482 285h7v7h-7zM489 285h7v7h-7zM516 285h7v7h-7zM572 285h6v7h-6zM578 285h7v7h-7zM585 285h7v7h-7zM620 285h7v7h-7zM696 285h6v7h-6zM702 285h7v7h-7zM716 285h7v7h-7zM723 285h7v7h-7zM482 292h7v7h-7zM489 292h7v7h-7zM537 292h7v7h-7zM572 292h6v7h-6zM578 292h7v7h-7zM620 292h7v7h-7zM627 292h7v7h-7zM661 292h7v7h-7zM696 292h6v7h-6zM702 292h7v7h-7z"/><path fill="#533" d="M716 142h7v7h-7zM696 156h6v6h-6zM620 162h7v7h-7zM482 183h7v7h-7zM489 183h7v7h-7zM510 190h6v6h-6zM523 196h7v7h-7zM530 196h7v7h-7zM551 210h7v7h-7zM627 238h7v6h-7zM723 238h7v6h-7zM496 244h7v7h-7zM696 251h6v7h-6zM551 265h7v7h-7zM565 278h7v7h-7zM572 278h6v7h-6z"/><path fill="#634" d="M723 142h7v7h-7zM606 156h7v6h-7zM523 176h7v7h-7zM530 176h7v7h-7zM572 190h6v6h-6zM640 231h7v7h-7zM640 238h7v6h-7zM696 244h6v7h-6zM572 272h6v6h-6z"/><path fill="#523" d="M599 149h7v7h-7z"/><path fill="#754" d="M613 149h7v7h-7zM689 149h7v7h-7zM702 196h7v7h-7zM558 210h7v7h-7zM702 231h7v7h-7zM599 244h7v7h-7z"/><path fill="#543" d="M620 149h7v7h-7zM696 149h6v7h-6zM551 203h7v7h-7zM620 224h7v7h-7zM634 224h6v7h-6zM496 251h7v7h-7zM503 251h7v7h-7z"/><path fill="#a87" d="M634 149h6v7h-6z"/><path fill="#daa" d="M640 149h7v7h-7z"/><path fill="#c78" d="M661 149h7v7h-7z"/><path fill="#a67" d="M668 149h7v7h-7zM654 190h7v6h-7zM572 203h6v7h-6zM702 210h7v7h-7zM709 217h7v7h-7zM716 217h7v7h-7zM572 231h6v7h-6zM565 238h7v6h-7zM585 238h7v6h-7z"/><path fill="#b77" d="M675 149h7v7h-7zM682 149h7v7h-7zM661 156h7v6h-7zM654 162h7v7h-7zM647 169h7v7h-7zM661 169h7v7h-7zM668 169h7v7h-7zM647 176h7v7h-7zM668 190h7v6h-7zM709 203h7v7h-7z"/><path fill="#331" d="M702 149h7v7h-7zM696 162h6v7h-6zM689 176h7v7h-7zM696 176h6v7h-6zM544 196h7v7h-7zM551 196h7v7h-7zM489 203h7v7h-7zM496 203h7v7h-7zM510 203h6v7h-6zM537 203h7v7h-7zM544 203h7v7h-7zM496 210h7v7h-7zM503 210h7v7h-7zM510 210h6v7h-6zM516 210h7v7h-7zM530 210h7v7h-7zM496 217h7v7h-7zM503 217h7v7h-7zM510 217h6v7h-6zM516 217h7v7h-7zM523 217h7v7h-7zM537 217h7v7h-7zM496 224h7v7h-7zM503 224h7v7h-7zM510 224h6v7h-6zM516 224h7v7h-7zM530 224h7v7h-7zM537 224h7v7h-7zM510 231h6v7h-6zM523 231h7v7h-7zM530 231h7v7h-7zM503 238h7v6h-7zM510 238h6v6h-6zM489 244h7v7h-7zM516 244h7v7h-7zM523 244h7v7h-7zM537 244h7v7h-7zM716 244h7v7h-7zM516 251h7v7h-7zM530 251h7v7h-7zM537 251h7v7h-7zM620 251h7v7h-7zM709 251h7v7h-7zM496 258h7v7h-7zM510 258h6v7h-6zM523 258h7v7h-7zM530 258h7v7h-7zM537 258h7v7h-7zM613 258h7v7h-7zM510 265h6v7h-6zM516 265h7v7h-7zM530 265h7v7h-7zM537 265h7v7h-7zM516 272h7v6h-7zM558 278h7v7h-7zM592 278h7v7h-7zM606 278h7v7h-7zM496 285h7v7h-7zM503 285h7v7h-7zM510 285h6v7h-6zM523 285h7v7h-7zM530 285h7v7h-7zM544 285h7v7h-7zM606 285h7v7h-7zM613 285h7v7h-7zM496 292h7v7h-7zM516 292h7v7h-7zM523 292h7v7h-7zM530 292h7v7h-7zM544 292h7v7h-7zM565 292h7v7h-7zM585 292h7v7h-7zM613 292h7v7h-7z"/><path fill="#221" d="M709 149h7v7h-7zM709 156h7v6h-7zM585 162h7v7h-7zM592 162h7v7h-7zM578 169h7v7h-7zM544 176h7v7h-7zM558 176h7v7h-7zM578 176h7v7h-7zM544 183h7v7h-7zM496 190h7v6h-7zM551 190h7v6h-7zM482 196h7v7h-7zM489 196h7v7h-7zM482 210h7v7h-7zM482 231h7v7h-7zM496 231h7v7h-7zM482 244h7v7h-7zM716 251h7v7h-7zM489 258h7v7h-7zM620 258h7v7h-7zM709 258h7v7h-7zM723 258h7v7h-7zM489 265h7v7h-7zM496 265h7v7h-7zM599 265h7v7h-7zM606 265h7v7h-7zM613 265h7v7h-7zM627 265h7v7h-7zM654 265h7v7h-7zM661 265h7v7h-7zM668 265h7v7h-7zM682 265h7v7h-7zM689 265h7v7h-7zM696 265h6v7h-6zM723 265h7v7h-7zM482 272h7v6h-7zM496 272h7v6h-7zM510 272h6v6h-6zM530 272h7v6h-7zM599 272h7v6h-7zM627 272h7v6h-7zM647 272h7v6h-7zM654 272h7v6h-7zM702 272h7v6h-7zM709 272h7v6h-7zM716 272h7v6h-7zM482 278h7v7h-7zM496 278h7v7h-7zM503 278h7v7h-7zM510 278h6v7h-6zM523 278h7v7h-7zM537 278h7v7h-7zM620 278h7v7h-7zM647 278h7v7h-7zM654 278h7v7h-7zM702 278h7v7h-7zM723 278h7v7h-7zM537 285h7v7h-7zM627 285h7v7h-7zM647 285h7v7h-7zM654 285h7v7h-7zM661 285h7v7h-7zM668 285h7v7h-7zM689 285h7v7h-7zM709 285h7v7h-7zM510 292h6v7h-6zM647 292h7v7h-7zM654 292h7v7h-7zM668 292h7v7h-7zM689 292h7v7h-7zM709 292h7v7h-7zM716 292h7v7h-7zM723 292h7v7h-7z"/><path fill="#322" d="M716 149h7v7h-7zM599 156h7v6h-7zM592 169h7v7h-7zM716 169h7v7h-7zM537 183h7v7h-7zM578 183h7v7h-7zM482 190h7v6h-7zM537 190h7v6h-7zM709 244h7v7h-7zM682 258h7v7h-7zM592 265h7v7h-7z"/><path fill="#302" d="M537 156h7v6h-7z"/><path fill="#202" d="M544 156h7v6h-7z"/><path fill="#643" d="M613 156h7v6h-7zM682 176h7v7h-7zM702 176h7v7h-7zM702 183h7v7h-7zM565 196h7v7h-7zM551 224h7v7h-7zM627 231h7v7h-7zM716 238h7v6h-7zM503 244h7v7h-7zM599 251h7v7h-7zM675 251h7v7h-7zM682 251h7v7h-7z"/><path fill="#442" d="M620 156h7v6h-7zM613 162h7v7h-7zM516 203h7v7h-7zM530 203h7v7h-7zM537 210h7v7h-7zM544 210h7v7h-7zM530 217h7v7h-7zM544 217h7v7h-7zM544 224h7v7h-7zM537 231h7v7h-7zM544 231h7v7h-7zM523 238h7v6h-7zM537 238h7v6h-7zM510 244h6v7h-6zM523 251h7v7h-7zM544 258h7v7h-7zM544 265h7v7h-7zM592 285h7v7h-7zM599 285h7v7h-7zM503 292h7v7h-7zM592 292h7v7h-7zM599 292h7v7h-7z"/><path fill="#653" d="M627 156h7v6h-7zM689 190h7v6h-7z"/><path fill="#c88" d="M654 156h7v6h-7z"/><path fill="#a66" d="M668 156h7v6h-7zM634 162h6v7h-6zM661 162h7v7h-7zM668 162h7v7h-7zM599 190h7v6h-7zM620 190h7v6h-7zM647 190h7v6h-7zM599 196h7v7h-7zM668 196h7v7h-7zM565 203h7v7h-7zM572 210h6v7h-6zM661 210h7v7h-7zM709 210h7v7h-7zM572 217h6v7h-6zM702 217h7v7h-7zM578 224h7v7h-7zM668 224h7v7h-7zM709 224h7v7h-7zM723 224h7v7h-7zM565 231h7v7h-7zM578 231h7v7h-7zM585 231h7v7h-7zM661 231h7v7h-7zM668 238h7v6h-7z"/><path fill="#966" d="M675 156h7v6h-7zM668 217h7v7h-7zM723 217h7v7h-7z"/><path fill="#956" d="M682 156h7v6h-7zM723 183h7v7h-7zM606 196h7v7h-7zM620 196h7v7h-7zM654 196h7v7h-7zM585 203h7v7h-7zM592 203h7v7h-7zM599 203h7v7h-7zM627 203h7v7h-7zM634 203h6v7h-6zM640 203h7v7h-7zM647 203h7v7h-7zM654 203h7v7h-7zM675 203h7v7h-7zM702 203h7v7h-7zM565 210h7v7h-7zM606 210h7v7h-7zM668 210h7v7h-7zM682 210h7v7h-7zM592 217h7v7h-7zM647 217h7v7h-7zM654 217h7v7h-7zM599 224h7v7h-7zM675 224h7v7h-7zM696 224h6v7h-6zM702 224h7v7h-7zM716 224h7v7h-7zM599 231h7v7h-7zM675 231h7v7h-7zM572 238h6v6h-6zM578 238h7v6h-7zM592 238h7v6h-7zM599 238h7v6h-7zM654 238h7v6h-7zM675 238h7v6h-7zM689 238h7v6h-7zM558 244h7v7h-7zM565 244h7v7h-7zM572 244h6v7h-6zM578 244h7v7h-7zM585 244h7v7h-7z"/><path fill="#432" d="M702 156h7v6h-7zM689 162h7v7h-7zM606 169h7v7h-7zM585 183h7v7h-7zM689 183h7v7h-7zM565 190h7v6h-7zM558 196h7v7h-7zM503 203h7v7h-7zM523 203h7v7h-7zM523 210h7v7h-7zM627 217h7v7h-7zM544 238h7v6h-7zM544 244h7v7h-7zM627 244h7v7h-7zM702 244h7v7h-7zM544 251h7v7h-7zM558 272h7v6h-7zM578 272h7v6h-7zM565 285h7v7h-7z"/><path fill="#c77" d="M640 162h7v7h-7zM647 162h7v7h-7zM572 224h6v7h-6z"/><path fill="#a56" d="M675 162h7v7h-7zM592 190h7v6h-7zM606 190h7v6h-7zM661 203h7v7h-7z"/><path fill="#855" d="M682 162h7v7h-7zM675 176h7v7h-7zM599 183h7v7h-7zM585 190h7v6h-7zM613 190h7v6h-7zM682 190h7v6h-7zM585 196h7v7h-7zM592 196h7v7h-7zM613 196h7v7h-7zM709 196h7v7h-7zM578 210h7v7h-7zM689 217h7v7h-7zM647 224h7v7h-7zM558 231h7v7h-7zM558 238h7v6h-7zM606 238h7v6h-7zM613 238h7v6h-7zM592 244h7v7h-7zM654 244h7v7h-7zM572 265h6v7h-6z"/><path fill="#452" d="M709 162h7v7h-7z"/><path fill="#313" d="M523 169h7v7h-7z"/><path fill="#542" d="M613 169h7v7h-7zM627 224h7v7h-7z"/><path fill="#844" d="M627 169h7v7h-7zM558 217h7v7h-7z"/><path fill="#b76" d="M634 169h6v7h-6z"/><path fill="#b66" d="M640 169h7v7h-7zM606 183h7v7h-7zM627 190h7v6h-7zM634 196h6v7h-6zM565 224h7v7h-7z"/><path fill="#b67" d="M654 169h7v7h-7zM661 190h7v6h-7zM627 196h7v7h-7zM647 196h7v7h-7zM661 196h7v7h-7zM668 203h7v7h-7zM661 217h7v7h-7zM661 224h7v7h-7zM592 231h7v7h-7zM668 231h7v7h-7z"/><path fill="#845" d="M675 169h7v7h-7zM572 196h6v7h-6zM578 196h7v7h-7zM675 196h7v7h-7zM578 203h7v7h-7zM606 203h7v7h-7zM620 203h7v7h-7zM592 210h7v7h-7zM634 210h6v7h-6zM640 210h7v7h-7zM647 210h7v7h-7zM606 217h7v7h-7zM675 217h7v7h-7zM682 217h7v7h-7zM585 224h7v7h-7zM592 224h7v7h-7zM654 224h7v7h-7zM689 224h7v7h-7zM551 231h7v7h-7zM647 231h7v7h-7zM682 231h7v7h-7zM689 231h7v7h-7zM647 238h7v6h-7zM558 251h7v7h-7zM565 251h7v7h-7zM578 251h7v7h-7zM565 258h7v7h-7zM572 258h6v7h-6zM578 258h7v7h-7zM565 265h7v7h-7z"/><path fill="#633" d="M482 176h7v7h-7zM592 176h7v7h-7zM634 244h6v7h-6z"/><path fill="#433" d="M489 176h7v7h-7zM510 196h6v7h-6z"/><path fill="#323" d="M516 176h7v7h-7z"/><path fill="#a65" d="M606 176h7v7h-7zM640 196h7v7h-7z"/><path fill="#b65" d="M613 176h7v7h-7z"/><path fill="#c76" d="M620 176h7v7h-7zM627 176h7v7h-7zM640 176h7v7h-7zM613 183h7v7h-7zM620 183h7v7h-7zM627 183h7v7h-7zM634 183h6v7h-6zM565 217h7v7h-7z"/><path fill="#d86" d="M634 176h6v7h-6z"/><path fill="#734" d="M723 176h7v7h-7z"/><path fill="#423" d="M516 183h7v7h-7z"/><path fill="#d77" d="M640 183h7v7h-7zM634 190h6v6h-6zM640 190h7v6h-7z"/><path fill="#663" d="M696 190h6v6h-6zM558 292h7v7h-7z"/><path fill="#755" d="M709 190h7v6h-7zM689 203h7v7h-7z"/><path fill="#231" d="M489 210h7v7h-7z"/><path fill="#955" d="M675 210h7v7h-7zM578 217h7v7h-7zM661 238h7v6h-7z"/><path fill="#443" d="M620 217h7v7h-7z"/><path fill="#431" d="M523 224h7v7h-7z"/><path fill="#946" d="M606 224h7v7h-7z"/><path fill="#441" d="M516 231h7v7h-7zM530 238h7v6h-7zM516 258h7v7h-7z"/><path fill="#341" d="M516 238h7v6h-7zM606 292h7v7h-7z"/><path fill="#532" d="M634 251h6v7h-6z"/><path fill="#311" d="M634 258h6v7h-6zM640 258h7v7h-7z"/><path fill="#fa8" d="M982 135h7v7h-7zM1223 142h7v7h-7zM1196 176h6v7h-6zM1113 183h7v7h-7zM1099 190h7v6h-7zM1106 190h7v6h-7zM1113 190h7v6h-7zM1106 196h7v7h-7zM1120 196h7v7h-7zM1127 196h7v7h-7zM1175 196h7v7h-7zM1202 196h7v7h-7zM1085 203h7v7h-7zM1092 203h7v7h-7zM1099 203h7v7h-7zM1106 203h7v7h-7zM1113 203h7v7h-7zM1120 203h7v7h-7zM1127 203h7v7h-7zM1182 203h7v7h-7zM1058 210h7v7h-7zM1072 210h6v7h-6zM1092 210h7v7h-7zM1099 210h7v7h-7zM1120 210h7v7h-7zM1189 210h7v7h-7zM1196 210h6v7h-6zM1072 217h6v7h-6zM1078 217h7v7h-7zM1106 217h7v7h-7zM1113 217h7v7h-7zM1120 217h7v7h-7zM1168 217h7v7h-7zM1182 217h7v7h-7zM1189 217h7v7h-7zM1085 224h7v7h-7zM1099 224h7v7h-7zM1106 224h7v7h-7zM1120 224h7v7h-7zM1127 224h7v7h-7zM1168 224h7v7h-7zM1189 224h7v7h-7zM1058 231h7v7h-7zM1127 231h7v7h-7zM1134 231h6v7h-6zM1161 231h7v7h-7zM1058 238h7v6h-7zM1099 238h7v6h-7zM1120 238h7v6h-7zM1127 238h7v6h-7zM1134 238h6v6h-6zM1058 244h7v7h-7zM1065 244h7v7h-7zM1092 244h7v7h-7zM1106 244h7v7h-7zM1113 244h7v7h-7zM1120 244h7v7h-7zM1058 251h7v7h-7zM1065 251h7v7h-7zM1078 251h7v7h-7zM1085 251h7v7h-7zM1058 258h7v7h-7zM1072 258h6v7h-6z"/><path fill="#ea8" d="M989 135h7v7h-7zM1189 183h7v7h-7zM1189 190h7v6h-7zM1189 203h7v7h-7zM1092 217h7v7h-7zM1147 224h7v7h-7zM1161 224h7v7h-7zM1065 231h7v7h-7zM1140 231h7v7h-7z"/><path fill="#fc7" d="M996 135h7v7h-7zM1003 135h7v7h-7zM1078 135h7v7h-7zM1147 135h7v7h-7zM1154 135h7v7h-7zM1182 135h7v7h-7zM1196 135h6v7h-6zM1202 135h7v7h-7zM1085 142h7v7h-7zM1196 142h6v7h-6zM1202 142h7v7h-7zM1072 149h6v7h-6zM1078 149h7v7h-7zM1092 149h7v7h-7zM1099 149h7v7h-7zM1196 149h6v7h-6zM1202 149h7v7h-7zM1209 149h7v7h-7zM1216 149h7v7h-7zM1223 149h7v7h-7zM1078 156h7v6h-7zM1085 156h7v6h-7zM1092 156h7v6h-7zM1099 156h7v6h-7zM1189 156h7v6h-7zM1196 156h6v6h-6zM1202 156h7v6h-7zM1209 156h7v6h-7zM1223 156h7v6h-7zM1072 162h6v7h-6zM1092 162h7v7h-7zM1113 162h7v7h-7zM1120 162h7v7h-7zM1182 162h7v7h-7zM1189 162h7v7h-7zM1196 162h6v7h-6zM1202 162h7v7h-7zM1065 169h7v7h-7zM1092 169h7v7h-7zM1099 169h7v7h-7zM1127 169h7v7h-7zM1175 169h7v7h-7zM1202 169h7v7h-7zM1209 169h7v7h-7zM1058 176h7v7h-7zM1065 176h7v7h-7zM1072 176h6v7h-6zM1085 176h7v7h-7zM1092 176h7v7h-7zM1099 176h7v7h-7zM1120 176h7v7h-7zM1134 176h6v7h-6zM1161 176h7v7h-7zM1168 176h7v7h-7zM1175 176h7v7h-7zM1209 176h7v7h-7zM1065 183h7v7h-7zM1072 183h6v7h-6zM1078 183h7v7h-7zM1085 183h7v7h-7zM1099 183h7v7h-7zM1134 183h6v7h-6zM1140 183h7v7h-7zM1161 183h7v7h-7zM1168 183h7v7h-7zM1175 183h7v7h-7zM1182 183h7v7h-7zM1209 183h7v7h-7zM1216 183h7v7h-7zM1072 190h6v6h-6zM1078 190h7v6h-7zM1134 190h6v6h-6zM1140 190h7v6h-7zM1147 190h7v6h-7zM1154 190h7v6h-7zM1161 190h7v6h-7zM1168 190h7v6h-7zM1085 196h7v7h-7zM1140 196h7v7h-7zM1154 196h7v7h-7zM1161 196h7v7h-7zM1134 203h6v7h-6zM1140 203h7v7h-7zM1140 210h7v7h-7zM1134 217h6v7h-6zM1209 217h7v7h-7zM1223 217h7v7h-7zM1209 224h7v7h-7zM1223 224h7v7h-7zM1196 231h6v7h-6zM1202 231h7v7h-7zM1209 231h7v7h-7zM1216 231h7v7h-7zM1223 231h7v7h-7zM1182 238h7v6h-7zM1189 238h7v6h-7zM1196 238h6v6h-6zM1202 238h7v6h-7zM1168 244h7v7h-7zM1182 244h7v7h-7zM1189 244h7v7h-7zM1209 244h7v7h-7zM1168 251h7v7h-7zM1175 251h7v7h-7z"/><path fill="#ec8" d="M1010 135h6v7h-6zM1140 135h7v7h-7zM1161 135h7v7h-7zM1168 135h7v7h-7zM1010 142h6v7h-6zM1072 142h6v7h-6zM1161 149h7v7h-7zM1106 156h7v6h-7zM1216 210h7v7h-7z"/><path fill="#fe9" d="M1016 135h7v7h-7zM1023 135h7v7h-7zM1120 149h7v7h-7zM1003 156h7v6h-7zM1016 156h7v6h-7zM1023 162h7v7h-7zM1037 162h7v7h-7zM1044 162h7v7h-7zM1051 162h7v7h-7zM1147 169h7v7h-7zM1223 203h7v7h-7z"/><path fill="#fd9" d="M1030 135h7v7h-7zM1065 135h7v7h-7zM1106 135h7v7h-7zM1113 135h7v7h-7zM1134 135h6v7h-6zM1030 142h7v7h-7zM1113 142h7v7h-7zM1134 142h6v7h-6zM982 149h7v7h-7zM1127 149h7v7h-7zM1134 149h6v7h-6zM1147 149h7v7h-7zM1168 149h7v7h-7zM1010 156h6v6h-6zM1140 156h7v6h-7zM1147 156h7v6h-7zM1154 156h7v6h-7zM1168 156h7v6h-7zM1003 162h7v7h-7zM1030 162h7v7h-7zM1058 162h7v7h-7zM1154 162h7v7h-7zM1016 169h7v7h-7zM1023 169h7v7h-7zM1154 169h7v7h-7z"/><path fill="#feb" d="M1037 135h7v7h-7zM1051 135h7v7h-7zM1058 135h7v7h-7zM1120 135h7v7h-7zM1127 135h7v7h-7zM1037 142h7v7h-7zM1044 142h7v7h-7zM1127 142h7v7h-7zM1023 149h7v7h-7zM1030 149h7v7h-7zM1044 149h7v7h-7zM1023 156h7v6h-7zM1030 156h7v6h-7zM1037 156h7v6h-7zM1044 156h7v6h-7zM1051 156h7v6h-7zM1058 156h7v6h-7zM1016 162h7v7h-7z"/><path fill="#ffc" d="M1044 135h7v7h-7zM1051 149h7v7h-7z"/><path fill="#fc8" d="M1072 135h6v7h-6zM1085 135h7v7h-7zM1099 135h7v7h-7zM989 142h7v7h-7zM1003 142h7v7h-7zM1078 142h7v7h-7zM1099 142h7v7h-7zM1140 142h7v7h-7zM1175 142h7v7h-7zM1182 142h7v7h-7zM1065 149h7v7h-7zM1189 149h7v7h-7zM1065 156h7v6h-7zM1127 162h7v7h-7zM1037 169h7v7h-7zM1223 183h7v7h-7zM1209 196h7v7h-7zM1209 203h7v7h-7zM1134 210h6v7h-6zM1209 210h7v7h-7zM1202 224h7v7h-7zM1078 231h7v7h-7zM1113 231h7v7h-7zM1113 238h7v6h-7z"/><path fill="#eb7" d="M1092 135h7v7h-7zM1099 162h7v7h-7zM1072 169h6v7h-6zM1106 169h7v7h-7zM1120 169h7v7h-7zM1182 169h7v7h-7zM1216 176h7v7h-7zM1120 183h7v7h-7zM1065 196h7v7h-7zM1134 196h6v7h-6zM1147 196h7v7h-7zM1189 231h7v7h-7zM1106 238h7v6h-7zM1175 238h7v6h-7zM1196 244h6v7h-6zM1202 251h7v7h-7z"/><path fill="#ec7" d="M1175 135h7v7h-7zM1189 135h7v7h-7zM1147 142h7v7h-7zM1065 162h7v7h-7zM1216 217h7v7h-7z"/><path fill="#fb7" d="M1209 135h7v7h-7zM996 142h7v7h-7zM1092 142h7v7h-7zM1189 142h7v7h-7zM1209 142h7v7h-7zM1085 149h7v7h-7zM1072 156h6v6h-6zM1216 156h7v6h-7zM1106 162h7v7h-7zM996 169h7v7h-7zM1113 169h7v7h-7zM1189 169h7v7h-7zM1196 169h6v7h-6zM1030 176h7v7h-7zM1051 176h7v7h-7zM1078 176h7v7h-7zM1127 176h7v7h-7zM1182 176h7v7h-7zM1202 176h7v7h-7zM1058 183h7v7h-7zM1092 183h7v7h-7zM1127 183h7v7h-7zM1202 183h7v7h-7zM1065 190h7v6h-7zM1085 190h7v6h-7zM1072 196h6v7h-6zM1078 196h7v7h-7zM1168 196h7v7h-7zM1065 203h7v7h-7zM1161 203h7v7h-7zM1168 203h7v7h-7zM1202 203h7v7h-7zM1168 210h7v7h-7zM1202 210h7v7h-7zM1140 217h7v7h-7zM1202 217h7v7h-7zM1134 224h6v7h-6zM1140 224h7v7h-7zM1196 224h6v7h-6zM1216 224h7v7h-7zM1085 231h7v7h-7zM1106 231h7v7h-7zM1175 231h7v7h-7zM1182 231h7v7h-7zM1085 238h7v6h-7zM1209 238h7v6h-7zM1223 238h7v6h-7zM1161 244h7v7h-7zM1175 244h7v7h-7zM1202 244h7v7h-7z"/><path fill="#fa7" d="M1216 135h7v7h-7zM982 169h7v7h-7zM989 169h7v7h-7zM1189 176h7v7h-7zM1023 183h7v7h-7zM1030 183h7v7h-7zM1092 190h7v6h-7zM1051 203h7v7h-7zM1072 203h6v7h-6zM1051 210h7v7h-7zM1154 210h7v7h-7zM1065 224h7v7h-7zM1182 224h7v7h-7zM1051 238h7v6h-7zM1147 238h7v6h-7zM1051 244h7v7h-7zM1051 251h7v7h-7zM1092 251h7v7h-7zM1099 251h7v7h-7zM1113 251h7v7h-7zM1127 251h7v7h-7zM1134 251h6v7h-6zM1140 251h7v7h-7zM1051 258h7v7h-7zM1085 258h7v7h-7zM1072 265h6v7h-6z"/><path fill="#fb8" d="M1223 135h7v7h-7zM982 142h7v7h-7zM1216 142h7v7h-7zM982 162h7v7h-7zM989 162h7v7h-7zM1023 176h7v7h-7zM1106 176h7v7h-7zM1113 176h7v7h-7zM1106 183h7v7h-7zM1196 183h6v7h-6zM1120 190h7v6h-7zM1127 190h7v6h-7zM1175 190h7v6h-7zM1182 190h7v6h-7zM1196 190h6v6h-6zM1202 190h7v6h-7zM1209 190h7v6h-7zM1092 196h7v7h-7zM1099 196h7v7h-7zM1113 196h7v7h-7zM1182 196h7v7h-7zM1189 196h7v7h-7zM1196 196h6v7h-6zM1058 203h7v7h-7zM1078 203h7v7h-7zM1147 203h7v7h-7zM1154 203h7v7h-7zM1175 203h7v7h-7zM1196 203h6v7h-6zM1065 210h7v7h-7zM1078 210h7v7h-7zM1085 210h7v7h-7zM1106 210h7v7h-7zM1113 210h7v7h-7zM1127 210h7v7h-7zM1147 210h7v7h-7zM1161 210h7v7h-7zM1175 210h7v7h-7zM1182 210h7v7h-7zM1065 217h7v7h-7zM1085 217h7v7h-7zM1099 217h7v7h-7zM1127 217h7v7h-7zM1154 217h7v7h-7zM1161 217h7v7h-7zM1175 217h7v7h-7zM1196 217h6v7h-6zM1072 224h6v7h-6zM1078 224h7v7h-7zM1092 224h7v7h-7zM1113 224h7v7h-7zM1154 224h7v7h-7zM1072 231h6v7h-6zM1092 231h7v7h-7zM1099 231h7v7h-7zM1120 231h7v7h-7zM1147 231h7v7h-7zM1154 231h7v7h-7zM1168 231h7v7h-7zM1065 238h7v6h-7zM1072 238h6v6h-6zM1078 238h7v6h-7zM1092 238h7v6h-7zM1140 238h7v6h-7zM1154 238h7v6h-7zM1161 238h7v6h-7zM1168 238h7v6h-7zM1072 244h6v7h-6zM1078 244h7v7h-7zM1085 244h7v7h-7zM1099 244h7v7h-7zM1127 244h7v7h-7zM1134 244h6v7h-6zM1072 251h6v7h-6zM1065 258h7v7h-7zM1078 258h7v7h-7z"/><path fill="#fd8" d="M1016 142h7v7h-7zM1065 142h7v7h-7zM1106 142h7v7h-7zM1154 142h7v7h-7zM1161 142h7v7h-7zM989 149h7v7h-7zM996 149h7v7h-7zM1010 149h6v7h-6zM1106 149h7v7h-7zM1113 149h7v7h-7zM1140 149h7v7h-7zM1154 149h7v7h-7zM1175 149h7v7h-7zM1182 149h7v7h-7zM982 156h7v6h-7zM989 156h7v6h-7zM1113 156h7v6h-7zM1120 156h7v6h-7zM1127 156h7v6h-7zM1134 156h6v6h-6zM1161 156h7v6h-7zM1175 156h7v6h-7zM1182 156h7v6h-7zM996 162h7v7h-7zM1134 162h6v7h-6zM1140 162h7v7h-7zM1147 162h7v7h-7zM1161 162h7v7h-7zM1168 162h7v7h-7zM1175 162h7v7h-7zM1003 169h7v7h-7zM1030 169h7v7h-7zM1044 169h7v7h-7zM1051 169h7v7h-7zM1058 169h7v7h-7zM1134 169h6v7h-6zM1140 169h7v7h-7zM1161 169h7v7h-7zM1168 169h7v7h-7zM1140 176h7v7h-7zM1147 176h7v7h-7zM1154 176h7v7h-7zM1147 183h7v7h-7zM1154 183h7v7h-7zM1216 190h7v6h-7zM1223 190h7v6h-7zM1216 196h7v7h-7zM1223 196h7v7h-7zM1216 203h7v7h-7zM1223 210h7v7h-7z"/><path fill="#ed8" d="M1023 142h7v7h-7z"/><path fill="#ffb" d="M1051 142h7v7h-7zM1120 142h7v7h-7z"/><path fill="#fea" d="M1058 142h7v7h-7zM1010 162h6v7h-6z"/><path fill="#fe8" d="M1168 142h7v7h-7zM1003 149h7v7h-7zM996 156h7v6h-7z"/><path fill="#ed9" d="M1016 149h7v7h-7z"/><path fill="#eeb" d="M1037 149h7v7h-7z"/><path fill="#eda" d="M1058 149h7v7h-7z"/><path fill="#fa5" d="M1078 162h7v7h-7zM1216 162h7v7h-7zM1223 162h7v7h-7zM1078 169h7v7h-7zM1085 169h7v7h-7zM1216 169h7v7h-7zM1010 176h6v7h-6zM1037 176h7v7h-7zM1044 176h7v7h-7zM1051 190h7v6h-7zM1058 190h7v6h-7zM1044 203h7v7h-7zM1044 210h7v7h-7zM1058 224h7v7h-7zM1154 244h7v7h-7zM1216 244h7v7h-7zM1216 251h7v7h-7zM1099 258h7v7h-7zM1127 258h7v7h-7zM1161 258h7v7h-7zM1175 258h7v7h-7zM1202 258h7v7h-7z"/><path fill="#f95" d="M1085 162h7v7h-7zM1223 169h7v7h-7zM982 176h7v7h-7zM989 176h7v7h-7zM1016 183h7v7h-7zM1037 183h7v7h-7zM1023 190h7v6h-7zM1030 190h7v6h-7zM1044 196h7v7h-7zM1051 196h7v7h-7zM1037 203h7v7h-7zM1051 217h7v7h-7zM1058 217h7v7h-7zM1051 224h7v7h-7zM1147 244h7v7h-7zM1223 244h7v7h-7zM1147 251h7v7h-7zM1106 258h7v7h-7zM1113 258h7v7h-7zM1120 258h7v7h-7zM1134 258h6v7h-6zM1140 258h7v7h-7zM1168 258h7v7h-7zM1182 258h7v7h-7zM1189 258h7v7h-7zM1196 258h6v7h-6zM1092 265h7v7h-7zM1140 265h7v7h-7zM1223 265h7v7h-7z"/><path fill="#fb6" d="M1209 162h7v7h-7zM1223 176h7v7h-7zM1051 183h7v7h-7zM1216 238h7v6h-7zM1161 251h7v7h-7zM1182 251h7v7h-7zM1209 251h7v7h-7z"/><path fill="#fda" d="M1010 169h6v7h-6z"/><path fill="#f84" d="M996 176h7v7h-7zM989 183h7v7h-7zM1010 190h6v6h-6zM1010 196h6v7h-6zM1023 210h7v7h-7zM982 217h7v7h-7zM989 217h7v7h-7zM989 224h7v7h-7zM1037 224h7v7h-7zM1010 244h6v7h-6zM1016 244h7v7h-7zM1010 251h6v7h-6zM1016 251h7v7h-7zM1120 278h7v7h-7zM1147 278h7v7h-7zM1154 278h7v7h-7zM1092 285h7v7h-7zM1106 285h7v7h-7zM1113 285h7v7h-7zM1092 292h7v7h-7z"/><path fill="#e84" d="M1003 176h7v7h-7zM1044 231h7v7h-7zM1099 265h7v7h-7zM1127 278h7v7h-7zM1023 292h7v7h-7z"/><path fill="#fa6" d="M1016 176h7v7h-7zM1051 231h7v7h-7z"/><path fill="#f94" d="M982 183h7v7h-7zM1010 183h6v7h-6zM1016 190h7v6h-7zM1037 190h7v6h-7zM1016 196h7v7h-7zM1023 196h7v7h-7zM1030 196h7v7h-7zM1037 196h7v7h-7zM1023 203h7v7h-7zM1030 203h7v7h-7zM1030 210h7v7h-7zM1037 210h7v7h-7zM1044 217h7v7h-7zM1044 224h7v7h-7zM1154 251h7v7h-7zM1223 251h7v7h-7zM1147 258h7v7h-7zM1154 258h7v7h-7zM1216 258h7v7h-7zM1223 258h7v7h-7zM1106 265h7v7h-7zM1113 265h7v7h-7zM1127 265h7v7h-7zM1134 265h6v7h-6zM1154 265h7v7h-7zM1161 265h7v7h-7zM1168 265h7v7h-7zM1175 265h7v7h-7zM1182 265h7v7h-7zM1189 265h7v7h-7zM1196 265h6v7h-6zM1202 265h7v7h-7zM1209 265h7v7h-7zM1216 265h7v7h-7zM1120 272h7v6h-7zM1127 272h7v6h-7zM1134 272h6v6h-6zM1140 272h7v6h-7zM1147 272h7v6h-7zM1154 272h7v6h-7zM1161 272h7v6h-7zM1168 272h7v6h-7zM1182 272h7v6h-7zM1189 272h7v6h-7zM1196 272h6v6h-6zM1202 272h7v6h-7zM1209 272h7v6h-7zM1216 272h7v6h-7zM1223 272h7v6h-7zM1134 278h6v7h-6zM1140 278h7v7h-7zM1168 278h7v7h-7zM1175 278h7v7h-7zM1182 278h7v7h-7zM1189 278h7v7h-7zM1196 278h6v7h-6zM1209 278h7v7h-7zM1216 278h7v7h-7zM1223 278h7v7h-7zM1099 285h7v7h-7zM1161 285h7v7h-7zM1175 285h7v7h-7zM1189 285h7v7h-7zM1196 285h6v7h-6zM1216 285h7v7h-7zM1223 285h7v7h-7zM1030 292h7v7h-7zM1099 292h7v7h-7zM1106 292h7v7h-7zM1113 292h7v7h-7zM1161 292h7v7h-7zM1168 292h7v7h-7zM1175 292h7v7h-7zM1189 292h7v7h-7zM1196 292h6v7h-6zM1223 292h7v7h-7z"/><path fill="#f73" d="M996 183h7v7h-7zM1003 183h7v7h-7zM982 190h7v6h-7zM989 190h7v6h-7zM1003 190h7v6h-7zM996 196h7v7h-7zM1003 196h7v7h-7zM982 203h7v7h-7zM989 203h7v7h-7zM1003 203h7v7h-7zM989 210h7v7h-7zM996 210h7v7h-7zM1003 210h7v7h-7zM996 217h7v7h-7zM1010 217h6v7h-6zM1016 217h7v7h-7zM1010 224h6v7h-6zM1016 231h7v7h-7zM1037 231h7v7h-7zM1003 251h7v7h-7zM1065 272h7v6h-7zM1099 272h7v6h-7zM1106 272h7v6h-7zM1113 272h7v6h-7zM1078 278h7v7h-7zM1085 278h7v7h-7zM1092 278h7v7h-7zM1099 278h7v7h-7zM1085 285h7v7h-7zM1134 285h6v7h-6zM1140 285h7v7h-7zM1147 285h7v7h-7zM1154 285h7v7h-7zM1120 292h7v7h-7zM1127 292h7v7h-7zM1134 292h6v7h-6zM1140 292h7v7h-7zM1154 292h7v7h-7zM1202 292h7v7h-7z"/><path fill="#e94" d="M1044 183h7v7h-7zM1044 190h7v6h-7zM1037 217h7v7h-7zM982 224h7v7h-7zM1120 265h7v7h-7zM1147 265h7v7h-7zM1161 278h7v7h-7zM1202 278h7v7h-7zM1182 285h7v7h-7zM1182 292h7v7h-7zM1216 292h7v7h-7z"/><path fill="#e63" d="M996 190h7v6h-7zM989 196h7v7h-7zM996 203h7v7h-7zM1010 210h6v7h-6zM1010 231h6v7h-6zM1037 238h7v6h-7zM996 244h7v7h-7zM1037 244h7v7h-7zM996 251h7v7h-7zM1037 251h7v7h-7zM1051 272h7v6h-7zM1065 278h7v7h-7zM1072 278h6v7h-6zM1078 285h7v7h-7zM1147 292h7v7h-7z"/><path fill="#f63" d="M982 196h7v7h-7zM1016 224h7v7h-7z"/><path fill="#ea5" d="M1058 196h7v7h-7z"/><path fill="#e73" d="M1010 203h6v7h-6zM982 210h7v7h-7zM1016 210h7v7h-7zM1003 217h7v7h-7zM1023 217h7v7h-7zM996 224h7v7h-7zM1003 224h7v7h-7zM1023 224h7v7h-7zM1030 224h7v7h-7zM982 231h7v7h-7zM1010 238h6v6h-6zM1016 238h7v6h-7zM1003 244h7v7h-7zM1058 272h7v6h-7zM1092 272h7v6h-7zM1106 278h7v7h-7zM1113 278h7v7h-7zM1127 285h7v7h-7zM1202 285h7v7h-7zM1085 292h7v7h-7zM1209 292h7v7h-7z"/><path fill="#f74" d="M1016 203h7v7h-7zM1030 217h7v7h-7zM1044 244h7v7h-7zM1078 272h7v6h-7zM1085 272h7v6h-7zM1120 285h7v7h-7z"/><path fill="#ea7" d="M1147 217h7v7h-7zM1175 224h7v7h-7zM1140 244h7v7h-7zM1106 251h7v7h-7zM1120 251h7v7h-7zM1078 265h7v7h-7z"/><path fill="#d62" d="M989 231h7v7h-7zM996 231h7v7h-7zM1003 231h7v7h-7zM1030 231h7v7h-7zM989 238h7v6h-7zM996 238h7v6h-7zM1023 238h7v6h-7zM1023 244h7v7h-7zM1030 244h7v7h-7zM982 258h7v7h-7zM989 258h7v7h-7zM1023 258h7v7h-7zM1030 258h7v7h-7zM1037 258h7v7h-7zM982 265h7v7h-7zM989 265h7v7h-7zM996 265h7v7h-7zM1016 265h7v7h-7zM1023 265h7v7h-7zM1030 265h7v7h-7zM982 272h7v6h-7zM989 272h7v6h-7zM996 272h7v6h-7zM1003 272h7v6h-7zM1016 272h7v6h-7zM1023 272h7v6h-7zM1030 272h7v6h-7zM1037 272h7v6h-7zM1044 272h7v6h-7zM989 278h7v7h-7zM996 278h7v7h-7zM1003 278h7v7h-7zM1016 278h7v7h-7zM1044 278h7v7h-7zM1051 278h7v7h-7zM996 285h7v7h-7zM1003 285h7v7h-7zM1058 285h7v7h-7zM1072 285h6v7h-6zM996 292h7v7h-7zM1003 292h7v7h-7zM1010 292h6v7h-6zM1016 292h7v7h-7zM1037 292h7v7h-7z"/><path fill="#e62" d="M1023 231h7v7h-7zM982 238h7v6h-7zM1003 238h7v6h-7zM1030 238h7v6h-7zM1023 251h7v7h-7zM1030 251h7v7h-7zM1010 258h6v7h-6zM1010 265h6v7h-6zM1010 278h6v7h-6zM1023 278h7v7h-7zM1030 278h7v7h-7zM1037 278h7v7h-7zM1058 278h7v7h-7zM1010 285h6v7h-6zM1016 285h7v7h-7zM1078 292h7v7h-7z"/><path fill="#e74" d="M1044 238h7v6h-7zM1044 251h7v7h-7zM1072 272h6v6h-6z"/><path fill="#c52" d="M982 244h7v7h-7zM1010 272h6v6h-6zM982 278h7v7h-7zM989 285h7v7h-7zM989 292h7v7h-7zM1044 292h7v7h-7zM1058 292h7v7h-7z"/><path fill="#c62" d="M989 244h7v7h-7zM982 251h7v7h-7zM989 251h7v7h-7zM996 258h7v7h-7zM1003 258h7v7h-7zM1003 265h7v7h-7zM1037 265h7v7h-7zM982 285h7v7h-7zM1037 285h7v7h-7zM1044 285h7v7h-7zM1051 285h7v7h-7zM1065 285h7v7h-7zM1051 292h7v7h-7zM1065 292h7v7h-7zM1072 292h6v7h-6z"/><path fill="#fc6" d="M1189 251h7v7h-7z"/><path fill="#eb6" d="M1196 251h6v7h-6z"/><path fill="#e72" d="M1016 258h7v7h-7z"/><path fill="#d73" d="M1044 258h7v7h-7z"/><path fill="#e95" d="M1092 258h7v7h-7z"/><path fill="#fa4" d="M1209 258h7v7h-7zM1175 272h7v6h-7zM1168 285h7v7h-7z"/><path fill="#c63" d="M1044 265h7v7h-7z"/><path fill="#e96" d="M1051 265h7v7h-7zM1085 265h7v7h-7z"/><path fill="#e97" d="M1058 265h7v7h-7z"/><path fill="#f97" d="M1065 265h7v7h-7z"/><path fill="#f83" d="M1023 285h7v7h-7zM1209 285h7v7h-7z"/><path fill="#e83" d="M1030 285h7v7h-7z"/><path fill="#b52" d="M982 292h7v7h-7z"/><rect x="982" y="292" width="41" height="8" fill="#000"/><g transform="translate(732,135)" clip-path="url(#rc)"><g filter="url(#rb)"><rect x="-10" y="-10" width="270" height="190" fill="#20341a"/><ellipse cx="25.3" cy="94.3" rx="50.5" ry="43.8" fill="#284420" opacity="0.8"/><ellipse cx="193.7" cy="151.6" rx="70.8" ry="20.2" fill="#284420" opacity="0.55"/><polygon points="-10.1,-10.1 101.1,-10.1 91.8,1.3 79.2,9.3 67.4,16.0 55.6,21.1 42.1,27.8 25.3,33.7 10.1,39.6 -10.1,50.5" fill="#6e5c68"/><polygon points="-10.1,48.9 10.1,40.4 25.3,34.5 42.1,28.6 55.6,21.9 67.4,16.8 74.1,30.3 70.8,43.8 55.6,55.6 33.7,50.5 16.8,55.6 0.0,50.5" fill="#5c4c54"/><polygon points="91.8,1.3 101.1,-10.1 225.7,-10.1 219.0,16.8 210.6,16.0 202.2,14.3 188.7,14.3 175.2,16.0 161.7,16.8 151.6,14.3 144.9,10.1 134.8,7.6 123.0,4.2 116.2,0.0 107.8,10.1 94.3,11.8 79.2,18.5" fill="#6a545c"/><polygon points="219.0,-10.1 262.8,-10.1 262.8,84.2 250.0,76.7 242.6,69.1 235.8,59.0 230.0,47.2 225.7,36.2 220.7,27.8 216.5,21.9 212.3,16.8" fill="#4a3e44"/><ellipse cx="15.2" cy="10.1" rx="9.3" ry="6.5" fill="#3a3a2c" opacity="0.55"/><ellipse cx="42.1" cy="6.7" rx="7.6" ry="5.3" fill="#3a3a2c" opacity="0.55"/><ellipse cx="28.6" cy="25.3" rx="6.7" ry="4.7" fill="#3a3a2c" opacity="0.55"/><ellipse cx="70.8" cy="5.1" rx="6.7" ry="4.7" fill="#3a3a2c" opacity="0.55"/><ellipse cx="55.6" cy="42.1" rx="7.6" ry="5.3" fill="#3a3a2c" opacity="0.55"/><ellipse cx="168.5" cy="5.1" rx="9.3" ry="6.5" fill="#3a3a2c" opacity="0.55"/><ellipse cx="193.7" cy="3.4" rx="7.6" ry="5.3" fill="#3a3a2c" opacity="0.55"/><ellipse cx="235.8" cy="15.2" rx="10.1" ry="7.1" fill="#3a3a2c" opacity="0.55"/><ellipse cx="240.9" cy="38.7" rx="8.4" ry="5.9" fill="#3a3a2c" opacity="0.55"/><polygon points="74.1,30.3 79.2,18.5 94.3,11.8 107.8,15.2 128.0,20.2 148.2,16.0 146.6,25.3 128.0,38.7 107.8,48.9 84.2,62.3 70.8,74.1 57.3,67.4 55.6,55.6 70.8,43.8" fill="#213c1b"/><polygon points="107.8,48.9 128.0,38.7 151.6,23.6 210.6,17.7 224.1,42.1 235.8,60.6 242.6,70.8 262.8,80.9 262.8,102.8 219.0,107.8 212.3,124.7 170.1,131.4 156.7,117.9 144.9,101.1 134.8,87.6 128.0,107.8 117.9,128.0 94.3,144.9 79.2,141.5 67.4,107.8 70.8,80.9 84.2,62.3" fill="#927479"/><ellipse cx="168.5" cy="42.1" rx="32.0" ry="17.7" fill="#a07c6a" transform="rotate(-12 168.5 42.1)"/><ellipse cx="94.3" cy="104.4" rx="20.2" ry="33.7" fill="#96746e" opacity="0.8"/><ellipse cx="202.2" cy="99.4" rx="42.1" ry="21.9" fill="#736384"/><ellipse cx="117.9" cy="70.8" rx="20.2" ry="11.8" fill="#736384" opacity="0.7"/><polygon points="235.8,42.1 262.8,43.8 262.8,80.9 242.6,70.8" fill="#8a6c76"/><ellipse cx="146.6" cy="99.4" rx="12.6" ry="17.7" fill="#2a4624"/><ellipse cx="211.4" cy="39.6" rx="11.8" ry="10.4" fill="#2a4624"/><ellipse cx="213.9" cy="69.1" rx="11.1" ry="11.1" fill="#2a4624" opacity="0.85"/></g><rect x="0" y="0" width="249" height="169" filter="url(#rn)" opacity="0.38"/><rect x="0" y="0" width="249" height="169" filter="url(#rw)" opacity="0.21"/><g filter="url(#rb2)" fill="none" stroke="#c6f0f0" stroke-linecap="round" stroke-linejoin="round"><path d="M-1.7 45.8L10.1 39.6L25.3 33.7L42.1 27.8L55.6 21.1L67.4 16.0L79.2 9.3L87.6 3.4L92.3 0.7" stroke-width="3.4"/><path d="M67.4 16.8L74.1 28.6L77.8 35.7" stroke-width="1.8" opacity=".65"/><path d="M115.9 -1.0L123.0 4.2L134.8 7.6L144.9 10.1L151.6 14.3L161.7 16.8L175.2 16.0L188.7 14.3L202.2 14.3L210.6 16.0" stroke-width="3.2"/><path d="M210.6 16.0L216.5 21.9L220.7 27.8L225.7 36.2L230.0 47.2L235.8 59.0L242.6 69.1L251.0 77.2" stroke-width="2.3" opacity=".85"/></g><g filter="url(#rb2)" fill="#dccaa8" opacity=".8"><rect x="84.8" y="91.5" width="4.5" height="4.5"/><rect x="98.2" y="110.5" width="4.5" height="4.5"/><rect x="110.5" y="61.7" width="4.5" height="4.5"/><rect x="50.2" y="56.1" width="4.5" height="4.5"/><rect x="160.1" y="41.0" width="4.5" height="4.5"/><rect x="38.4" y="110.0" width="4.5" height="4.5"/><rect x="8.1" y="115.9" width="4.5" height="4.5"/><rect x="225.4" y="122.7" width="4.5" height="4.5"/><rect x="206.9" y="97.4" width="4.5" height="4.5"/></g></g><g transform="translate(1232,135)" clip-path="url(#rc)"><g filter="url(#rb)"><rect x="-10" y="-10" width="270" height="190" fill="#b08c46"/><ellipse cx="25.3" cy="94.3" rx="50.5" ry="43.8" fill="#b8964e" opacity="0.8"/><ellipse cx="193.7" cy="151.6" rx="70.8" ry="20.2" fill="#b8964e" opacity="0.55"/><polygon points="-10.1,-10.1 101.1,-10.1 91.8,1.3 79.2,9.3 67.4,16.0 55.6,21.1 42.1,27.8 25.3,33.7 10.1,39.6 -10.1,50.5" fill="#f8dcb8"/><polygon points="-10.1,48.9 10.1,40.4 25.3,34.5 42.1,28.6 55.6,21.9 67.4,16.8 74.1,30.3 70.8,43.8 55.6,55.6 33.7,50.5 16.8,55.6 0.0,50.5" fill="#dcae7c"/><polygon points="91.8,1.3 101.1,-10.1 225.7,-10.1 219.0,16.8 210.6,16.0 202.2,14.3 188.7,14.3 175.2,16.0 161.7,16.8 151.6,14.3 144.9,10.1 134.8,7.6 123.0,4.2 116.2,0.0 107.8,10.1 94.3,11.8 79.2,18.5" fill="#e2b28e"/><polygon points="219.0,-10.1 262.8,-10.1 262.8,84.2 250.0,76.7 242.6,69.1 235.8,59.0 230.0,47.2 225.7,36.2 220.7,27.8 216.5,21.9 212.3,16.8" fill="#b88868"/><ellipse cx="15.2" cy="10.1" rx="9.3" ry="6.5" fill="#d8b080" opacity="0.55"/><ellipse cx="42.1" cy="6.7" rx="7.6" ry="5.3" fill="#d8b080" opacity="0.55"/><ellipse cx="28.6" cy="25.3" rx="6.7" ry="4.7" fill="#d8b080" opacity="0.55"/><ellipse cx="70.8" cy="5.1" rx="6.7" ry="4.7" fill="#d8b080" opacity="0.55"/><ellipse cx="55.6" cy="42.1" rx="7.6" ry="5.3" fill="#d8b080" opacity="0.55"/><ellipse cx="168.5" cy="5.1" rx="9.3" ry="6.5" fill="#d8b080" opacity="0.55"/><ellipse cx="193.7" cy="3.4" rx="7.6" ry="5.3" fill="#d8b080" opacity="0.55"/><ellipse cx="235.8" cy="15.2" rx="10.1" ry="7.1" fill="#d8b080" opacity="0.55"/><ellipse cx="240.9" cy="38.7" rx="8.4" ry="5.9" fill="#d8b080" opacity="0.55"/><polygon points="74.1,30.3 79.2,18.5 94.3,11.8 107.8,15.2 128.0,20.2 148.2,16.0 146.6,25.3 128.0,38.7 107.8,48.9 84.2,62.3 70.8,74.1 57.3,67.4 55.6,55.6 70.8,43.8" fill="#aa8e4a"/><polygon points="107.8,48.9 128.0,38.7 151.6,23.6 210.6,17.7 224.1,42.1 235.8,60.6 242.6,70.8 262.8,80.9 262.8,102.8 219.0,107.8 212.3,124.7 170.1,131.4 156.7,117.9 144.9,101.1 134.8,87.6 128.0,107.8 117.9,128.0 94.3,144.9 79.2,141.5 67.4,107.8 70.8,80.9 84.2,62.3" fill="#dca888"/><ellipse cx="168.5" cy="42.1" rx="32.0" ry="17.7" fill="#e6b696" transform="rotate(-12 168.5 42.1)"/><ellipse cx="94.3" cy="104.4" rx="20.2" ry="33.7" fill="#e2ae8e" opacity="0.8"/><ellipse cx="202.2" cy="99.4" rx="42.1" ry="21.9" fill="#d6aa92"/><ellipse cx="117.9" cy="70.8" rx="20.2" ry="11.8" fill="#d6aa92" opacity="0.7"/><polygon points="235.8,42.1 262.8,43.8 262.8,80.9 242.6,70.8" fill="#e8c0a8"/><ellipse cx="146.6" cy="99.4" rx="12.6" ry="17.7" fill="#aa9652"/><ellipse cx="211.4" cy="39.6" rx="11.8" ry="10.4" fill="#aa9652"/><ellipse cx="213.9" cy="69.1" rx="11.1" ry="11.1" fill="#aa9652" opacity="0.85"/></g><rect x="0" y="0" width="249" height="169" filter="url(#rn)" opacity="0.2"/><rect x="0" y="0" width="249" height="169" filter="url(#rw)" opacity="0.11"/><g filter="url(#rb2)" fill="none" stroke="#fff6e0" stroke-linecap="round" stroke-linejoin="round"><path d="M-1.7 45.8L10.1 39.6L25.3 33.7L42.1 27.8L55.6 21.1L67.4 16.0L79.2 9.3L87.6 3.4L92.3 0.7" stroke-width="3.4"/><path d="M67.4 16.8L74.1 28.6L77.8 35.7" stroke-width="1.8" opacity=".65"/><path d="M115.9 -1.0L123.0 4.2L134.8 7.6L144.9 10.1L151.6 14.3L161.7 16.8L175.2 16.0L188.7 14.3L202.2 14.3L210.6 16.0" stroke-width="3.2"/><path d="M210.6 16.0L216.5 21.9L220.7 27.8L225.7 36.2L230.0 47.2L235.8 59.0L242.6 69.1L251.0 77.2" stroke-width="2.3" opacity=".85"/></g><g filter="url(#rb2)" fill="#ffecc0" opacity=".8"><rect x="84.8" y="91.5" width="4.5" height="4.5"/><rect x="98.2" y="110.5" width="4.5" height="4.5"/><rect x="110.5" y="61.7" width="4.5" height="4.5"/><rect x="50.2" y="56.1" width="4.5" height="4.5"/><rect x="160.1" y="41.0" width="4.5" height="4.5"/><rect x="38.4" y="110.0" width="4.5" height="4.5"/><rect x="8.1" y="115.9" width="4.5" height="4.5"/><rect x="225.4" y="122.7" width="4.5" height="4.5"/><rect x="206.9" y="97.4" width="4.5" height="4.5"/></g></g><path fill="#742" d="M232 385h7v7h-7zM239 385h7v7h-7zM246 385h7v7h-7zM260 385h6v7h-6zM232 392h7v7h-7zM239 392h7v7h-7zM246 392h7v7h-7zM253 392h7v7h-7zM260 392h6v7h-6zM239 399h7v7h-7zM232 406h7v6h-7zM315 406h7v6h-7zM335 406h7v6h-7zM439 440h7v6h-7zM446 440h6v6h-6zM446 446h6v7h-6zM370 460h7v7h-7zM377 460h7v7h-7zM384 460h6v7h-6zM446 460h6v7h-6zM446 481h6v7h-6zM439 488h7v6h-7zM446 488h6v6h-6zM452 488h7v6h-7zM370 494h7v7h-7zM377 494h7v7h-7zM452 494h7v7h-7zM459 494h7v7h-7zM377 501h7v7h-7zM459 501h7v7h-7zM294 508h7v7h-7zM294 515h7v7h-7zM349 515h7v7h-7zM356 515h7v7h-7zM273 522h7v6h-7zM349 522h7v6h-7zM363 522h7v6h-7zM280 528h7v7h-7zM342 528h7v7h-7zM363 528h7v7h-7zM273 535h7v7h-7zM280 535h7v7h-7zM287 535h7v7h-7zM301 535h7v7h-7zM273 542h7v7h-7zM280 542h7v7h-7z"/><path fill="#642" d="M253 385h7v7h-7zM425 412h7v7h-7zM432 412h7v7h-7zM432 419h7v7h-7zM439 481h7v7h-7zM370 501h7v7h-7zM322 508h6v7h-6zM342 508h7v7h-7zM363 508h7v7h-7zM356 522h7v6h-7z"/><path fill="#743" d="M266 385h7v7h-7zM335 399h7v7h-7zM239 406h7v6h-7zM425 419h7v7h-7zM384 453h6v7h-6zM459 481h7v7h-7z"/><path fill="#664" d="M273 385h7v7h-7zM335 392h7v7h-7zM349 392h7v7h-7zM232 412h7v7h-7zM432 440h7v6h-7zM432 453h7v7h-7zM432 460h7v7h-7zM425 474h7v7h-7zM439 474h7v7h-7zM356 501h7v7h-7z"/><path fill="#786" d="M280 385h7v7h-7zM260 412h6v7h-6zM390 412h7v7h-7zM404 412h7v7h-7zM232 426h7v7h-7zM390 426h7v7h-7zM322 446h6v7h-6z"/><path fill="#598" d="M287 385h7v7h-7zM377 392h7v7h-7zM308 399h7v7h-7zM397 399h7v7h-7zM397 406h7v6h-7zM411 406h7v6h-7zM246 419h7v7h-7z"/><path fill="#499" d="M294 385h7v7h-7zM294 392h7v7h-7zM418 399h7v7h-7z"/><path fill="#4aa" d="M301 385h7v7h-7zM273 399h7v7h-7zM411 399h7v7h-7zM273 406h7v6h-7zM287 412h7v7h-7z"/><path fill="#488" d="M308 385h7v7h-7zM377 385h7v7h-7zM404 399h7v7h-7zM418 406h7v6h-7z"/><path fill="#686" d="M315 385h7v7h-7zM273 392h7v7h-7zM266 406h7v6h-7zM390 406h7v6h-7zM273 412h7v7h-7z"/><path fill="#775" d="M322 385h6v7h-6zM328 385h7v7h-7zM335 385h7v7h-7zM328 392h7v7h-7zM356 392h7v7h-7zM239 412h7v7h-7zM322 440h6v6h-6zM335 440h7v6h-7zM349 440h7v6h-7zM315 446h7v7h-7zM328 446h7v7h-7zM425 446h7v7h-7zM432 446h7v7h-7zM335 453h7v7h-7zM322 460h6v7h-6zM328 460h7v7h-7zM439 467h7v7h-7zM432 474h7v7h-7zM328 481h7v7h-7zM335 481h7v7h-7zM342 494h7v7h-7zM349 494h7v7h-7zM349 501h7v7h-7z"/><path fill="#675" d="M342 385h7v7h-7zM349 385h7v7h-7zM315 392h7v7h-7zM266 412h7v7h-7zM239 419h7v7h-7zM280 419h7v7h-7zM335 446h7v7h-7zM322 453h6v7h-6z"/><path fill="#776" d="M356 385h7v7h-7zM363 392h7v7h-7zM384 399h6v7h-6zM411 412h7v7h-7zM397 426h7v7h-7zM349 433h7v7h-7zM404 433h7v7h-7zM342 440h7v6h-7zM473 453h7v7h-7zM356 494h7v7h-7z"/><path fill="#787" d="M363 385h7v7h-7zM384 392h6v7h-6zM390 392h7v7h-7zM397 412h7v7h-7zM390 419h7v7h-7z"/><path fill="#498" d="M370 385h7v7h-7zM404 406h7v6h-7z"/><path fill="#898" d="M384 385h6v7h-6z"/><path fill="#676" d="M390 385h7v7h-7zM266 399h7v7h-7z"/><path fill="#466" d="M397 385h7v7h-7z"/><path fill="#367" d="M404 385h7v7h-7z"/><path fill="#3cd" d="M411 385h7v7h-7z"/><path fill="#3ef" d="M418 385h7v7h-7z"/><path fill="#3dd" d="M425 385h7v7h-7zM294 399h7v7h-7z"/><path fill="#3cc" d="M432 385h7v7h-7zM287 399h7v7h-7zM280 406h7v6h-7z"/><path fill="#244" d="M439 385h7v7h-7zM432 399h7v7h-7z"/><path fill="#222" d="M446 385h6v7h-6zM446 392h6v7h-6zM459 412h7v7h-7zM473 412h7v7h-7zM446 419h6v7h-6z"/><path fill="#111" d="M452 385h7v7h-7zM411 515h7v7h-7zM411 522h7v6h-7z"/><path fill="#211" d="M459 385h7v7h-7zM452 392h7v7h-7zM459 392h7v7h-7zM466 392h7v7h-7zM473 392h7v7h-7zM452 399h7v7h-7zM459 399h7v7h-7zM466 399h7v7h-7zM473 399h7v7h-7zM452 406h7v6h-7zM459 406h7v6h-7zM466 406h7v6h-7zM473 406h7v6h-7zM411 508h7v7h-7zM418 508h7v7h-7zM397 515h7v7h-7zM404 515h7v7h-7zM418 515h7v7h-7zM390 522h7v6h-7zM404 522h7v6h-7zM425 522h7v6h-7zM432 522h7v6h-7zM439 522h7v6h-7zM384 528h6v7h-6zM390 528h7v7h-7zM411 528h7v7h-7zM425 528h7v7h-7zM432 528h7v7h-7zM439 528h7v7h-7zM384 535h6v7h-6zM425 535h7v7h-7zM432 535h7v7h-7zM384 542h6v7h-6zM390 542h7v7h-7zM432 542h7v7h-7z"/><path fill="#110" d="M466 385h7v7h-7zM418 522h7v6h-7z"/><path fill="#210" d="M473 385h7v7h-7zM397 522h7v6h-7zM418 528h7v7h-7zM425 542h7v7h-7z"/><path fill="#863" d="M266 392h7v7h-7zM287 426h7v7h-7z"/><path fill="#587" d="M280 392h7v7h-7zM253 412h7v7h-7zM280 412h7v7h-7zM253 419h7v7h-7zM287 419h7v7h-7zM294 419h7v7h-7z"/><path fill="#4a9" d="M287 392h7v7h-7zM301 406h7v6h-7zM294 412h7v7h-7z"/><path fill="#4ba" d="M301 392h7v7h-7z"/><path fill="#5a9" d="M308 392h7v7h-7z"/><path fill="#875" d="M322 392h6v7h-6zM411 419h7v7h-7zM418 419h7v7h-7zM273 426h7v7h-7zM280 426h7v7h-7zM232 433h7v7h-7zM349 446h7v7h-7zM356 446h7v7h-7zM418 446h7v7h-7zM315 453h7v7h-7zM342 453h7v7h-7zM459 453h7v7h-7zM315 460h7v7h-7zM335 460h7v7h-7zM322 467h6v7h-6zM446 467h6v7h-6zM342 474h7v7h-7zM446 474h6v7h-6zM322 481h6v7h-6zM328 488h7v6h-7zM342 488h7v6h-7zM349 488h7v6h-7z"/><path fill="#774" d="M342 392h7v7h-7z"/><path fill="#577" d="M370 392h7v7h-7z"/><path fill="#467" d="M397 392h7v7h-7zM473 433h7v7h-7z"/><path fill="#378" d="M404 392h7v7h-7z"/><path fill="#3ab" d="M411 392h7v7h-7z"/><path fill="#3bb" d="M418 392h7v7h-7zM280 399h7v7h-7zM287 406h7v6h-7zM294 406h7v6h-7z"/><path fill="#3bc" d="M425 392h7v7h-7z"/><path fill="#39a" d="M432 392h7v7h-7z"/><path fill="#243" d="M439 392h7v7h-7z"/><path fill="#732" d="M232 399h7v7h-7zM390 460h7v7h-7zM377 467h7v7h-7zM287 515h7v7h-7zM287 542h7v7h-7zM301 542h7v7h-7z"/><path fill="#842" d="M246 399h7v7h-7zM349 399h7v7h-7zM328 406h7v6h-7zM342 406h7v6h-7zM349 406h7v6h-7zM287 433h7v7h-7zM328 433h7v7h-7zM301 440h7v6h-7zM308 440h7v6h-7zM301 446h7v7h-7zM301 474h7v7h-7zM308 474h7v7h-7zM377 474h7v7h-7zM452 481h7v7h-7zM370 488h7v6h-7zM377 488h7v6h-7zM459 488h7v6h-7zM473 494h7v7h-7zM473 501h7v7h-7zM280 508h7v7h-7zM287 508h7v7h-7zM273 515h7v7h-7zM280 515h7v7h-7zM280 522h7v6h-7zM273 528h7v7h-7zM356 528h7v7h-7zM294 542h7v7h-7z"/><path fill="#752" d="M253 399h7v7h-7zM328 399h7v7h-7zM356 508h7v7h-7z"/><path fill="#764" d="M260 399h6v7h-6zM253 406h7v6h-7zM266 419h7v7h-7zM349 426h7v7h-7zM342 433h7v7h-7zM418 433h7v7h-7zM425 433h7v7h-7zM328 440h7v6h-7zM452 460h7v7h-7zM418 467h7v7h-7zM349 474h7v7h-7zM315 481h7v7h-7zM342 481h7v7h-7zM356 481h7v7h-7zM356 488h7v6h-7zM335 494h7v7h-7zM342 501h7v7h-7zM363 501h7v7h-7z"/><path fill="#3a9" d="M301 399h7v7h-7z"/><path fill="#753" d="M315 399h7v7h-7zM253 426h7v7h-7zM439 446h7v7h-7z"/><path fill="#952" d="M322 399h6v7h-6zM246 433h7v7h-7zM308 460h7v7h-7zM308 467h7v7h-7zM294 494h7v7h-7zM466 494h7v7h-7zM294 501h7v7h-7zM253 535h7v7h-7z"/><path fill="#843" d="M342 399h7v7h-7zM370 399h7v7h-7zM377 406h7v6h-7zM377 453h7v7h-7zM370 474h7v7h-7z"/><path fill="#852" d="M356 399h7v7h-7zM308 453h7v7h-7zM439 453h7v7h-7zM370 467h7v7h-7zM370 481h7v7h-7z"/><path fill="#942" d="M363 399h7v7h-7zM356 406h7v6h-7zM363 406h7v6h-7zM328 426h7v7h-7zM335 426h7v7h-7zM294 440h7v6h-7zM294 446h7v7h-7zM301 460h7v7h-7zM280 474h7v7h-7zM294 488h7v6h-7zM466 501h7v7h-7zM273 508h7v7h-7zM266 535h7v7h-7zM266 542h7v7h-7z"/><path fill="#854" d="M377 399h7v7h-7zM301 481h7v7h-7zM397 481h7v7h-7zM473 488h7v6h-7z"/><path fill="#797" d="M390 399h7v7h-7z"/><path fill="#265" d="M425 399h7v7h-7z"/><path fill="#233" d="M439 399h7v7h-7zM466 419h7v7h-7zM473 419h7v7h-7zM459 426h7v7h-7z"/><path fill="#232" d="M446 399h6v7h-6zM439 406h7v6h-7zM446 406h6v6h-6zM466 412h7v7h-7zM452 419h7v7h-7zM459 419h7v7h-7zM452 426h7v7h-7z"/><path fill="#653" d="M246 406h7v6h-7zM246 426h7v7h-7zM397 501h7v7h-7z"/><path fill="#665" d="M260 406h6v6h-6zM232 419h7v7h-7zM260 419h6v7h-6zM239 426h7v7h-7zM342 446h7v7h-7zM425 453h7v7h-7zM432 467h7v7h-7z"/><path fill="#487" d="M308 406h7v6h-7z"/><path fill="#841" d="M322 406h6v6h-6zM301 467h7v7h-7z"/><path fill="#b43" d="M370 406h7v6h-7zM363 412h7v7h-7z"/><path fill="#986" d="M384 406h6v6h-6z"/><path fill="#444" d="M425 406h7v6h-7zM301 419h7v7h-7z"/><path fill="#332" d="M432 406h7v6h-7zM439 412h7v7h-7zM439 419h7v7h-7z"/><path fill="#588" d="M246 412h7v7h-7z"/><path fill="#355" d="M301 412h7v7h-7z"/><path fill="#343" d="M308 412h7v7h-7zM459 433h7v7h-7z"/><path fill="#531" d="M315 412h7v7h-7zM315 419h7v7h-7zM439 494h7v7h-7zM446 494h6v7h-6zM390 501h7v7h-7zM446 501h6v7h-6zM377 508h7v7h-7zM452 508h7v7h-7zM294 528h7v7h-7zM459 528h7v7h-7z"/><path fill="#621" d="M322 412h6v7h-6zM466 528h7v7h-7zM411 542h7v7h-7z"/><path fill="#832" d="M328 412h7v7h-7zM335 412h7v7h-7zM349 412h7v7h-7zM315 426h7v7h-7zM397 460h7v7h-7zM384 467h6v7h-6zM390 467h7v7h-7zM404 467h7v7h-7zM377 481h7v7h-7zM384 481h6v7h-6zM384 488h6v6h-6zM404 535h7v7h-7zM356 542h7v7h-7zM363 542h7v7h-7z"/><path fill="#a32" d="M342 412h7v7h-7zM356 412h7v7h-7zM397 467h7v7h-7z"/><path fill="#a66" d="M370 412h7v7h-7z"/><path fill="#a76" d="M377 412h7v7h-7zM356 426h7v7h-7zM363 426h7v7h-7zM377 446h7v7h-7zM384 446h6v7h-6zM322 501h6v7h-6z"/><path fill="#887" d="M384 412h6v7h-6zM384 419h6v7h-6zM390 433h7v7h-7zM466 453h7v7h-7z"/><path fill="#765" d="M418 412h7v7h-7zM425 440h7v6h-7zM459 440h7v6h-7zM459 446h7v7h-7zM418 453h7v7h-7zM466 467h7v7h-7zM418 474h7v7h-7zM363 494h7v7h-7z"/><path fill="#122" d="M446 412h6v7h-6z"/><path fill="#132" d="M452 412h7v7h-7z"/><path fill="#886" d="M273 419h7v7h-7zM404 419h7v7h-7zM404 426h7v7h-7zM473 460h7v7h-7zM335 488h7v6h-7z"/><path fill="#432" d="M308 419h7v7h-7zM425 488h7v6h-7zM418 494h7v7h-7z"/><path fill="#631" d="M322 419h6v7h-6zM452 501h7v7h-7zM287 522h7v6h-7zM342 522h7v6h-7zM287 528h7v7h-7zM308 535h7v7h-7zM370 542h7v7h-7z"/><path fill="#932" d="M328 419h7v7h-7zM335 419h7v7h-7zM322 426h6v7h-6zM384 474h6v7h-6zM390 474h7v7h-7zM232 494h7v7h-7zM356 535h7v7h-7zM363 535h7v7h-7zM404 542h7v7h-7zM473 542h7v7h-7z"/><path fill="#833" d="M342 419h7v7h-7zM349 419h7v7h-7z"/><path fill="#933" d="M356 419h7v7h-7zM397 474h7v7h-7zM390 481h7v7h-7z"/><path fill="#b54" d="M363 419h7v7h-7z"/><path fill="#c87" d="M370 419h7v7h-7z"/><path fill="#987" d="M377 419h7v7h-7zM384 426h6v7h-6zM384 433h6v7h-6z"/><path fill="#897" d="M397 419h7v7h-7z"/><path fill="#b62" d="M260 426h6v7h-6z"/><path fill="#a63" d="M266 426h7v7h-7zM294 426h7v7h-7z"/><path fill="#a52" d="M301 426h7v7h-7zM294 433h7v7h-7zM273 440h7v6h-7zM280 440h7v6h-7zM294 474h7v7h-7zM294 481h7v7h-7zM287 501h7v7h-7zM232 522h7v6h-7zM246 522h7v6h-7zM266 522h7v6h-7zM246 528h7v7h-7zM260 528h6v7h-6zM266 528h7v7h-7zM260 535h6v7h-6zM246 542h7v7h-7z"/><path fill="#b52" d="M308 426h7v7h-7zM260 433h6v7h-6zM301 433h7v7h-7zM232 440h7v6h-7zM266 440h7v6h-7zM287 440h7v6h-7zM287 446h7v7h-7zM232 453h7v7h-7zM232 460h7v7h-7zM287 460h7v7h-7zM273 467h7v7h-7zM287 467h7v7h-7zM294 467h7v7h-7zM232 474h7v7h-7zM273 474h7v7h-7zM232 481h7v7h-7zM280 488h7v6h-7zM246 494h7v7h-7zM239 522h7v6h-7zM253 522h7v6h-7zM260 522h6v6h-6zM239 535h7v7h-7zM246 535h7v7h-7z"/><path fill="#865" d="M342 426h7v7h-7zM411 426h7v7h-7zM315 440h7v6h-7zM356 440h7v6h-7zM363 440h7v6h-7zM418 440h7v6h-7zM411 446h7v7h-7zM349 453h7v7h-7zM356 453h7v7h-7zM411 460h7v7h-7zM418 460h7v7h-7zM459 460h7v7h-7zM328 467h7v7h-7zM335 467h7v7h-7zM342 467h7v7h-7zM349 467h7v7h-7zM356 467h7v7h-7zM459 467h7v7h-7zM322 474h6v7h-6zM328 474h7v7h-7zM335 474h7v7h-7zM411 474h7v7h-7zM473 474h7v7h-7zM349 481h7v7h-7zM473 481h7v7h-7zM308 488h7v6h-7zM322 488h6v6h-6zM404 488h7v6h-7zM308 494h7v7h-7zM404 494h7v7h-7zM335 501h7v7h-7z"/><path fill="#b97" d="M370 426h7v7h-7z"/><path fill="#b87" d="M377 426h7v7h-7zM363 433h7v7h-7zM370 440h7v6h-7zM377 440h7v6h-7zM390 446h7v7h-7zM397 446h7v7h-7z"/><path fill="#975" d="M418 426h7v7h-7zM411 440h7v6h-7zM363 446h7v7h-7zM342 460h7v7h-7zM349 460h7v7h-7zM356 460h7v7h-7zM452 467h7v7h-7zM473 467h7v7h-7zM308 501h7v7h-7z"/><path fill="#754" d="M425 426h7v7h-7zM432 426h7v7h-7zM452 440h7v6h-7zM363 467h7v7h-7zM411 467h7v7h-7zM404 481h7v7h-7zM363 488h7v6h-7zM397 488h7v6h-7zM397 494h7v7h-7zM404 501h7v7h-7z"/><path fill="#532" d="M439 426h7v7h-7zM432 481h7v7h-7zM390 494h7v7h-7zM301 508h7v7h-7zM308 508h7v7h-7zM328 508h7v7h-7zM335 508h7v7h-7z"/><path fill="#321" d="M446 426h6v7h-6zM439 535h7v7h-7z"/><path fill="#345" d="M466 426h7v7h-7z"/><path fill="#356" d="M473 426h7v7h-7z"/><path fill="#974" d="M239 433h7v7h-7zM273 433h7v7h-7z"/><path fill="#a42" d="M253 433h7v7h-7zM301 453h7v7h-7zM239 481h7v7h-7zM287 481h7v7h-7zM232 488h7v6h-7zM287 488h7v6h-7zM239 494h7v7h-7zM280 501h7v7h-7zM232 528h7v7h-7zM260 542h6v7h-6z"/><path fill="#c62" d="M266 433h7v7h-7zM239 440h7v6h-7zM232 467h7v7h-7z"/><path fill="#864" d="M280 433h7v7h-7zM432 433h7v7h-7zM452 446h7v7h-7zM363 453h7v7h-7zM452 453h7v7h-7zM315 467h7v7h-7zM356 474h7v7h-7zM363 474h7v7h-7zM308 481h7v7h-7zM363 481h7v7h-7zM301 488h7v6h-7zM315 488h7v6h-7zM466 488h7v6h-7zM301 494h7v7h-7z"/><path fill="#c52" d="M308 433h7v7h-7zM232 446h7v7h-7zM273 453h7v7h-7zM280 453h7v7h-7zM294 453h7v7h-7zM273 460h7v7h-7zM280 460h7v7h-7zM239 474h7v7h-7zM266 481h7v7h-7zM280 481h7v7h-7zM266 494h7v7h-7zM253 501h7v7h-7zM260 501h6v7h-6zM273 501h7v7h-7zM232 508h7v7h-7zM266 508h7v7h-7zM239 515h7v7h-7zM266 515h7v7h-7zM239 542h7v7h-7z"/><path fill="#a43" d="M315 433h7v7h-7zM322 433h6v7h-6zM397 453h7v7h-7zM404 460h7v7h-7z"/><path fill="#963" d="M335 433h7v7h-7z"/><path fill="#977" d="M356 433h7v7h-7z"/><path fill="#c98" d="M370 433h7v7h-7z"/><path fill="#a87" d="M377 433h7v7h-7zM384 440h6v6h-6zM390 440h7v6h-7zM397 440h7v6h-7zM315 501h7v7h-7z"/><path fill="#876" d="M397 433h7v7h-7zM466 460h7v7h-7z"/><path fill="#976" d="M411 433h7v7h-7zM404 440h7v6h-7zM322 494h6v7h-6zM328 494h7v7h-7z"/><path fill="#632" d="M439 433h7v7h-7zM384 494h6v7h-6zM315 508h7v7h-7zM342 515h7v7h-7zM363 515h7v7h-7zM349 528h7v7h-7zM294 535h7v7h-7zM308 542h7v7h-7z"/><path fill="#421" d="M446 433h6v7h-6zM425 494h7v7h-7zM411 501h7v7h-7zM418 501h7v7h-7zM425 501h7v7h-7zM384 508h6v7h-6zM425 508h7v7h-7zM432 508h7v7h-7zM439 508h7v7h-7zM446 508h6v7h-6zM459 508h7v7h-7zM315 515h7v7h-7zM322 515h6v7h-6zM328 515h7v7h-7zM335 515h7v7h-7zM377 515h7v7h-7zM384 515h6v7h-6zM425 515h7v7h-7zM432 515h7v7h-7zM439 515h7v7h-7zM446 515h6v7h-6zM452 515h7v7h-7zM459 515h7v7h-7zM466 515h7v7h-7zM473 515h7v7h-7zM315 522h7v6h-7zM322 522h6v6h-6zM328 522h7v6h-7zM377 522h7v6h-7zM452 522h7v6h-7zM466 522h7v6h-7zM315 528h7v7h-7zM328 528h7v7h-7zM370 528h7v7h-7zM377 528h7v7h-7zM452 528h7v7h-7zM335 535h7v7h-7zM370 535h7v7h-7zM377 535h7v7h-7zM418 535h7v7h-7zM446 535h6v7h-6zM452 535h7v7h-7zM315 542h7v7h-7zM328 542h7v7h-7zM335 542h7v7h-7zM342 542h7v7h-7zM377 542h7v7h-7zM418 542h7v7h-7zM439 542h7v7h-7zM446 542h6v7h-6zM452 542h7v7h-7z"/><path fill="#342" d="M452 433h7v7h-7z"/><path fill="#456" d="M466 433h7v7h-7zM466 440h7v6h-7zM473 446h7v7h-7zM418 481h7v7h-7z"/><path fill="#d52" d="M246 440h7v6h-7zM239 467h7v7h-7zM280 494h7v7h-7zM246 501h7v7h-7zM266 501h7v7h-7zM239 508h7v7h-7z"/><path fill="#b41" d="M253 440h7v6h-7z"/><path fill="#b51" d="M260 440h6v6h-6zM273 446h7v7h-7zM280 446h7v7h-7zM266 467h7v7h-7zM273 481h7v7h-7zM273 494h7v7h-7zM260 515h6v7h-6zM232 535h7v7h-7z"/><path fill="#457" d="M473 440h7v6h-7z"/><path fill="#e51" d="M239 446h7v7h-7zM253 446h7v7h-7zM266 453h7v7h-7zM260 460h6v7h-6zM246 467h7v7h-7zM260 474h6v7h-6zM253 488h7v6h-7zM253 508h7v7h-7zM253 515h7v7h-7z"/><path fill="#d41" d="M246 446h7v7h-7zM246 453h7v7h-7zM253 453h7v7h-7zM246 508h7v7h-7z"/><path fill="#c51" d="M260 446h6v7h-6zM266 446h7v7h-7zM266 488h7v6h-7zM253 494h7v7h-7z"/><path fill="#853" d="M308 446h7v7h-7zM370 453h7v7h-7zM390 453h7v7h-7zM446 453h6v7h-6zM439 460h7v7h-7zM301 501h7v7h-7zM349 508h7v7h-7z"/><path fill="#b86" d="M370 446h7v7h-7z"/><path fill="#966" d="M404 446h7v7h-7z"/><path fill="#566" d="M466 446h7v7h-7zM411 488h7v6h-7z"/><path fill="#e62" d="M239 453h7v7h-7zM260 508h6v7h-6z"/><path fill="#f51" d="M260 453h6v7h-6zM253 460h7v7h-7zM253 467h7v7h-7zM246 474h7v7h-7z"/><path fill="#d62" d="M287 453h7v7h-7zM239 460h7v7h-7zM266 474h7v7h-7zM273 488h7v6h-7zM260 494h6v7h-6zM232 515h7v7h-7zM232 542h7v7h-7z"/><path fill="#785" d="M328 453h7v7h-7zM425 460h7v7h-7z"/><path fill="#a54" d="M404 453h7v7h-7z"/><path fill="#965" d="M411 453h7v7h-7zM363 460h7v7h-7zM315 474h7v7h-7zM452 474h7v7h-7zM466 474h7v7h-7zM328 501h7v7h-7z"/><path fill="#d51" d="M246 460h7v7h-7zM266 460h7v7h-7zM260 467h6v7h-6zM253 474h7v7h-7zM246 481h7v7h-7zM253 481h7v7h-7zM246 488h7v6h-7z"/><path fill="#a51" d="M294 460h7v7h-7zM280 467h7v7h-7z"/><path fill="#885" d="M425 467h7v7h-7z"/><path fill="#941" d="M287 474h7v7h-7zM239 488h7v6h-7zM253 528h7v7h-7zM253 542h7v7h-7z"/><path fill="#943" d="M404 474h7v7h-7zM390 488h7v6h-7z"/><path fill="#964" d="M459 474h7v7h-7zM466 481h7v7h-7z"/><path fill="#e61" d="M260 481h6v7h-6z"/><path fill="#556" d="M411 481h7v7h-7z"/><path fill="#543" d="M425 481h7v7h-7z"/><path fill="#e52" d="M260 488h6v6h-6z"/><path fill="#445" d="M418 488h7v6h-7z"/><path fill="#521" d="M432 488h7v6h-7zM432 494h7v7h-7zM384 501h6v7h-6zM432 501h7v7h-7zM439 501h7v7h-7zM370 508h7v7h-7zM390 508h7v7h-7zM466 508h7v7h-7zM473 508h7v7h-7zM301 515h7v7h-7zM308 515h7v7h-7zM370 515h7v7h-7zM294 522h7v6h-7zM301 522h7v6h-7zM308 522h7v6h-7zM335 522h7v6h-7zM370 522h7v6h-7zM459 522h7v6h-7zM473 522h7v6h-7zM301 528h7v7h-7zM308 528h7v7h-7zM322 528h6v7h-6zM335 528h7v7h-7zM473 528h7v7h-7zM315 535h7v7h-7zM322 535h6v7h-6zM328 535h7v7h-7zM342 535h7v7h-7zM349 535h7v7h-7zM411 535h7v7h-7zM459 535h7v7h-7zM322 542h6v7h-6zM349 542h7v7h-7zM459 542h7v7h-7z"/><path fill="#a41" d="M287 494h7v7h-7zM239 528h7v7h-7z"/><path fill="#a86" d="M315 494h7v7h-7z"/><path fill="#533" d="M411 494h7v7h-7z"/><path fill="#b42" d="M232 501h7v7h-7zM239 501h7v7h-7z"/><path fill="#311" d="M397 508h7v7h-7zM404 508h7v7h-7zM390 515h7v7h-7zM384 522h6v6h-6zM446 522h6v6h-6zM397 528h7v7h-7zM404 528h7v7h-7zM446 528h6v7h-6zM390 535h7v7h-7z"/><path fill="#c41" d="M246 515h7v7h-7z"/><path fill="#722" d="M397 535h7v7h-7zM466 535h7v7h-7z"/><path fill="#822" d="M473 535h7v7h-7zM397 542h7v7h-7zM466 542h7v7h-7z"/><rect x="443" y="385" width="38" height="7" fill="#000"/><path fill="#000" d="M482 385h7v7h-7zM496 385h7v7h-7zM503 385h7v7h-7zM510 385h6v7h-6zM516 385h7v7h-7zM523 385h7v7h-7zM530 385h7v7h-7zM551 385h7v7h-7zM558 385h7v7h-7zM565 385h7v7h-7zM572 385h6v7h-6zM578 385h7v7h-7zM482 392h7v7h-7zM489 392h7v7h-7zM510 392h6v7h-6zM572 392h6v7h-6zM489 399h7v7h-7zM496 399h7v7h-7zM565 399h7v7h-7zM558 406h7v6h-7zM558 412h7v7h-7zM565 412h7v7h-7z"/><path fill="#001" d="M489 385h7v7h-7zM537 385h7v7h-7zM544 385h7v7h-7zM585 385h7v7h-7zM496 392h7v7h-7zM503 392h7v7h-7zM516 392h7v7h-7zM523 392h7v7h-7zM530 392h7v7h-7zM537 392h7v7h-7zM544 392h7v7h-7zM551 392h7v7h-7zM558 392h7v7h-7zM565 392h7v7h-7zM578 392h7v7h-7zM585 392h7v7h-7zM482 399h7v7h-7zM503 399h7v7h-7zM510 399h6v7h-6zM516 399h7v7h-7zM551 399h7v7h-7zM558 399h7v7h-7zM572 399h6v7h-6zM578 399h7v7h-7zM482 406h7v6h-7zM489 406h7v6h-7zM496 406h7v6h-7zM503 406h7v6h-7zM510 406h6v6h-6zM551 406h7v6h-7zM565 406h7v6h-7zM572 406h6v6h-6zM496 412h7v7h-7zM503 412h7v7h-7zM551 412h7v7h-7z"/><path fill="#014" d="M592 385h7v7h-7zM592 392h7v7h-7zM530 399h7v7h-7zM537 399h7v7h-7zM523 406h7v6h-7zM530 406h7v6h-7zM537 406h7v6h-7zM516 412h7v7h-7zM523 412h7v7h-7zM537 412h7v7h-7zM523 419h7v7h-7zM530 419h7v7h-7zM654 474h7v7h-7zM675 481h7v7h-7zM696 481h6v7h-6zM654 488h7v6h-7zM668 488h7v6h-7zM675 488h7v6h-7zM682 488h7v6h-7z"/><path fill="#015" d="M599 385h7v7h-7zM530 412h7v7h-7zM585 433h7v7h-7zM654 467h7v7h-7zM654 481h7v7h-7zM661 481h7v7h-7zM689 481h7v7h-7zM689 488h7v6h-7z"/><path fill="#139" d="M606 385h7v7h-7zM647 399h7v7h-7zM654 406h7v6h-7zM661 412h7v7h-7zM661 419h7v7h-7zM668 426h7v7h-7zM675 433h7v7h-7zM675 440h7v6h-7zM716 440h7v6h-7zM723 440h7v6h-7zM716 446h7v7h-7zM716 453h7v7h-7zM613 460h7v7h-7zM689 460h7v7h-7zM702 460h7v7h-7zM606 467h7v7h-7zM702 467h7v7h-7zM709 467h7v7h-7zM723 467h7v7h-7zM702 474h7v7h-7zM578 481h7v7h-7zM585 481h7v7h-7zM599 481h7v7h-7zM592 488h7v6h-7z"/><path fill="#14a" d="M613 385h7v7h-7zM654 399h7v7h-7zM661 406h7v6h-7zM682 453h7v7h-7zM702 453h7v7h-7zM709 453h7v7h-7zM709 460h7v7h-7zM723 460h7v7h-7zM592 481h7v7h-7zM599 488h7v6h-7z"/><path fill="#16c" d="M620 385h7v7h-7zM647 392h7v7h-7z"/><path fill="#17c" d="M627 385h7v7h-7zM647 385h7v7h-7z"/><path fill="#2ae" d="M634 385h6v7h-6z"/><path fill="#29d" d="M640 385h7v7h-7zM668 385h7v7h-7zM668 392h7v7h-7z"/><path fill="#17d" d="M654 385h7v7h-7z"/><path fill="#28c" d="M661 385h7v7h-7zM634 392h6v7h-6z"/><path fill="#156" d="M675 385h7v7h-7zM620 474h7v7h-7zM709 481h7v7h-7z"/><path fill="#254" d="M682 385h7v7h-7zM627 488h7v6h-7z"/><path fill="#564" d="M689 385h7v7h-7zM696 392h6v7h-6z"/><path fill="#554" d="M696 385h6v7h-6z"/><path fill="#243" d="M702 385h7v7h-7zM709 385h7v7h-7zM702 392h7v7h-7zM716 392h7v7h-7zM723 392h7v7h-7zM716 399h7v7h-7zM696 412h6v7h-6zM696 419h6v7h-6zM696 501h6v7h-6z"/><path fill="#233" d="M716 385h7v7h-7zM634 481h6v7h-6zM640 488h7v6h-7z"/><path fill="#132" d="M723 385h7v7h-7zM640 481h7v7h-7z"/><path fill="#125" d="M599 392h7v7h-7z"/><path fill="#238" d="M606 392h7v7h-7z"/><path fill="#248" d="M613 392h7v7h-7zM599 501h7v7h-7z"/><path fill="#15a" d="M620 392h7v7h-7z"/><path fill="#16b" d="M627 392h7v7h-7zM654 392h7v7h-7z"/><path fill="#29e" d="M640 392h7v7h-7zM661 392h7v7h-7z"/><path fill="#157" d="M675 392h7v7h-7z"/><path fill="#155" d="M682 392h7v7h-7zM702 406h7v6h-7zM696 433h6v7h-6z"/><path fill="#465" d="M689 392h7v7h-7z"/><path fill="#133" d="M709 392h7v7h-7z"/><path fill="#003" d="M523 399h7v7h-7zM544 399h7v7h-7z"/><path fill="#011" d="M585 399h7v7h-7z"/><path fill="#134" d="M592 399h7v7h-7zM510 426h6v7h-6zM516 426h7v7h-7zM627 474h7v7h-7zM558 501h7v7h-7zM661 501h7v7h-7z"/><path fill="#244" d="M599 399h7v7h-7zM592 406h7v6h-7zM709 406h7v6h-7zM627 460h7v7h-7zM627 467h7v7h-7zM716 488h7v6h-7zM723 488h7v6h-7zM551 501h7v7h-7z"/><path fill="#643" d="M606 399h7v7h-7z"/><path fill="#754" d="M613 399h7v7h-7zM606 528h7v7h-7zM613 528h7v7h-7z"/><path fill="#245" d="M620 399h7v7h-7zM620 406h7v6h-7zM613 412h7v7h-7zM606 419h7v7h-7zM627 453h7v7h-7zM551 494h7v7h-7zM613 494h7v7h-7zM696 494h6v7h-6zM606 501h7v7h-7z"/><path fill="#147" d="M627 399h7v7h-7zM682 399h7v7h-7zM613 488h7v6h-7z"/><path fill="#149" d="M634 399h6v7h-6zM661 399h7v7h-7zM675 399h7v7h-7zM675 426h7v7h-7zM682 433h7v7h-7zM696 460h6v7h-6zM723 474h7v7h-7zM606 488h7v6h-7z"/><path fill="#138" d="M640 399h7v7h-7zM647 406h7v6h-7zM668 406h7v6h-7zM668 412h7v7h-7zM709 440h7v6h-7zM682 446h7v7h-7zM689 453h7v7h-7zM723 453h7v7h-7zM716 460h7v7h-7zM716 467h7v7h-7zM606 474h7v7h-7zM606 481h7v7h-7zM613 481h7v7h-7zM592 494h7v7h-7zM599 494h7v7h-7z"/><path fill="#15b" d="M668 399h7v7h-7z"/><path fill="#256" d="M689 399h7v7h-7z"/><path fill="#145" d="M696 399h6v7h-6zM689 406h7v6h-7zM675 412h7v7h-7zM682 412h7v7h-7zM682 419h7v7h-7zM716 419h7v7h-7zM689 426h7v7h-7zM709 426h7v7h-7zM702 433h7v7h-7zM620 467h7v7h-7zM627 481h7v7h-7zM668 494h7v7h-7zM675 494h7v7h-7zM682 494h7v7h-7zM675 501h7v7h-7zM682 501h7v7h-7z"/><path fill="#144" d="M702 399h7v7h-7zM709 399h7v7h-7zM696 406h6v6h-6zM689 412h7v7h-7zM716 412h7v7h-7zM723 412h7v7h-7zM689 419h7v7h-7zM696 426h6v7h-6zM702 488h7v6h-7zM709 488h7v6h-7zM668 501h7v7h-7zM689 501h7v7h-7zM647 508h7v7h-7zM654 508h7v7h-7z"/><path fill="#232" d="M723 399h7v7h-7zM634 488h6v6h-6z"/><path fill="#002" d="M516 406h7v6h-7z"/><path fill="#004" d="M544 406h7v6h-7zM544 412h7v7h-7z"/><path fill="#110" d="M578 406h7v6h-7z"/><path fill="#111" d="M585 406h7v6h-7zM496 419h7v7h-7zM503 419h7v7h-7z"/><path fill="#354" d="M599 406h7v6h-7z"/><path fill="#853" d="M606 406h7v6h-7z"/><path fill="#743" d="M613 406h7v6h-7zM599 419h7v7h-7zM634 453h6v7h-6zM620 494h7v7h-7zM592 508h7v7h-7z"/><path fill="#036" d="M627 406h7v6h-7zM709 433h7v7h-7zM620 453h7v7h-7zM558 494h7v7h-7z"/><path fill="#127" d="M634 406h6v6h-6zM640 412h7v7h-7zM606 426h7v7h-7zM578 440h7v6h-7zM627 446h7v7h-7zM606 453h7v7h-7zM572 460h6v7h-6zM696 474h6v7h-6zM585 501h7v7h-7z"/><path fill="#128" d="M640 406h7v6h-7zM647 412h7v7h-7zM654 412h7v7h-7zM620 419h7v7h-7zM627 419h7v7h-7zM647 419h7v7h-7zM640 426h7v7h-7zM647 426h7v7h-7zM654 426h7v7h-7zM716 433h7v7h-7zM606 440h7v6h-7zM634 440h6v6h-6zM572 446h6v7h-6zM578 446h7v7h-7zM606 446h7v7h-7zM613 446h7v7h-7zM654 446h7v7h-7zM668 446h7v7h-7zM565 453h7v7h-7zM585 453h7v7h-7zM661 453h7v7h-7zM592 460h7v7h-7zM606 460h7v7h-7zM668 460h7v7h-7zM599 467h7v7h-7zM675 467h7v7h-7zM696 467h6v7h-6zM592 474h7v7h-7zM668 474h7v7h-7zM675 474h7v7h-7zM558 481h7v7h-7zM572 481h6v7h-6zM578 488h7v6h-7zM565 494h7v7h-7zM578 501h7v7h-7z"/><path fill="#148" d="M675 406h7v6h-7zM668 419h7v7h-7zM682 426h7v7h-7zM613 474h7v7h-7z"/><path fill="#137" d="M682 406h7v6h-7zM620 412h7v7h-7zM716 426h7v7h-7zM702 440h7v6h-7z"/><path fill="#143" d="M716 406h7v6h-7zM723 406h7v6h-7z"/><path fill="#013" d="M482 412h7v7h-7zM489 412h7v7h-7zM510 412h6v7h-6zM510 419h6v7h-6z"/><path fill="#100" d="M572 412h6v7h-6z"/><path fill="#421" d="M578 412h7v7h-7zM661 515h7v7h-7zM675 515h7v7h-7zM585 522h7v6h-7zM640 522h7v6h-7zM661 522h7v6h-7zM551 528h7v7h-7zM585 528h7v7h-7zM675 528h7v7h-7zM682 528h7v7h-7z"/><path fill="#621" d="M585 412h7v7h-7zM585 535h7v7h-7z"/><path fill="#842" d="M592 412h7v7h-7zM551 426h7v7h-7zM572 426h6v7h-6zM627 494h7v7h-7zM613 508h7v7h-7zM627 508h7v7h-7zM606 515h7v7h-7zM613 515h7v7h-7zM544 535h7v7h-7zM565 535h7v7h-7zM682 535h7v7h-7zM516 542h7v7h-7zM565 542h7v7h-7zM627 542h7v7h-7z"/><path fill="#753" d="M599 412h7v7h-7zM489 433h7v7h-7z"/><path fill="#344" d="M606 412h7v7h-7zM516 433h7v7h-7zM613 501h7v7h-7zM647 515h7v7h-7zM654 515h7v7h-7z"/><path fill="#028" d="M627 412h7v7h-7zM654 419h7v7h-7zM613 426h7v7h-7zM723 426h7v7h-7zM606 433h7v7h-7zM620 433h7v7h-7zM661 433h7v7h-7zM654 440h7v6h-7zM668 440h7v6h-7zM620 446h7v7h-7zM668 453h7v7h-7zM592 467h7v7h-7zM661 467h7v7h-7zM682 467h7v7h-7zM572 474h6v7h-6zM599 474h7v7h-7zM558 488h7v6h-7zM565 488h7v6h-7zM572 494h6v7h-6zM578 494h7v7h-7zM585 494h7v7h-7z"/><path fill="#129" d="M634 412h6v7h-6zM661 426h7v7h-7zM613 433h7v7h-7zM627 433h7v7h-7zM647 433h7v7h-7zM654 433h7v7h-7zM668 433h7v7h-7zM620 440h7v6h-7zM585 446h7v7h-7zM647 446h7v7h-7zM578 453h7v7h-7zM599 453h7v7h-7zM578 460h7v7h-7zM599 460h7v7h-7zM578 467h7v7h-7zM668 467h7v7h-7zM689 467h7v7h-7zM565 474h7v7h-7zM578 474h7v7h-7zM585 474h7v7h-7zM565 481h7v7h-7zM572 488h6v6h-6z"/><path fill="#565" d="M702 412h7v7h-7zM709 412h7v7h-7zM709 419h7v7h-7zM482 426h7v7h-7zM689 440h7v6h-7z"/><path fill="#124" d="M482 419h7v7h-7zM544 419h7v7h-7zM696 488h6v6h-6zM647 501h7v7h-7zM654 501h7v7h-7z"/><path fill="#114" d="M489 419h7v7h-7zM537 419h7v7h-7zM530 426h7v7h-7zM647 467h7v7h-7zM647 474h7v7h-7zM647 481h7v7h-7zM647 488h7v6h-7zM661 488h7v6h-7zM647 494h7v7h-7zM654 494h7v7h-7z"/><path fill="#115" d="M516 419h7v7h-7zM523 426h7v7h-7zM585 426h7v7h-7zM668 481h7v7h-7zM682 481h7v7h-7z"/><path fill="#211" d="M551 419h7v7h-7zM558 419h7v7h-7zM565 419h7v7h-7zM565 515h7v7h-7zM578 515h7v7h-7zM558 522h7v6h-7zM689 522h7v6h-7zM634 535h6v7h-6zM634 542h6v7h-6zM640 542h7v7h-7z"/><path fill="#311" d="M572 419h6v7h-6zM585 515h7v7h-7zM551 522h7v6h-7zM572 522h6v6h-6zM578 522h7v6h-7zM668 522h7v6h-7zM682 522h7v6h-7zM565 528h7v7h-7zM572 528h6v7h-6zM578 528h7v7h-7zM634 528h6v7h-6zM640 528h7v7h-7z"/><path fill="#422" d="M578 419h7v7h-7zM503 426h7v7h-7zM640 474h7v7h-7zM640 494h7v7h-7zM585 508h7v7h-7zM689 508h7v7h-7zM696 508h6v7h-6z"/><path fill="#522" d="M585 419h7v7h-7zM640 467h7v7h-7zM640 501h7v7h-7z"/><path fill="#742" d="M592 419h7v7h-7zM496 433h7v7h-7zM558 440h7v6h-7zM634 460h6v7h-6zM716 494h7v7h-7zM544 501h7v7h-7zM606 508h7v7h-7z"/><path fill="#146" d="M613 419h7v7h-7zM675 419h7v7h-7zM689 433h7v7h-7zM620 460h7v7h-7z"/><path fill="#029" d="M634 419h6v7h-6zM723 433h7v7h-7zM592 453h7v7h-7zM565 467h7v7h-7z"/><path fill="#027" d="M640 419h7v7h-7zM613 453h7v7h-7z"/><path fill="#454" d="M702 419h7v7h-7zM510 433h6v7h-6z"/><path fill="#045" d="M723 419h7v7h-7zM716 481h7v7h-7zM723 481h7v7h-7z"/><path fill="#544" d="M489 426h7v7h-7z"/><path fill="#532" d="M496 426h7v7h-7zM634 467h6v7h-6zM634 494h6v7h-6zM709 494h7v7h-7zM702 501h7v7h-7zM640 508h7v7h-7zM668 508h7v7h-7zM682 508h7v7h-7zM640 515h7v7h-7z"/><path fill="#555" d="M537 426h7v7h-7z"/><path fill="#664" d="M544 426h7v7h-7z"/><path fill="#831" d="M558 426h7v7h-7zM592 528h7v7h-7z"/><path fill="#941" d="M565 426h7v7h-7zM716 501h7v7h-7zM723 501h7v7h-7zM523 522h7v6h-7zM592 522h7v6h-7zM530 535h7v7h-7zM675 535h7v7h-7zM510 542h6v7h-6zM689 542h7v7h-7zM723 542h7v7h-7z"/><path fill="#323" d="M578 426h7v7h-7zM530 433h7v7h-7z"/><path fill="#227" d="M592 426h7v7h-7zM565 446h7v7h-7zM647 453h7v7h-7zM551 474h7v7h-7z"/><path fill="#126" d="M599 426h7v7h-7zM565 501h7v7h-7z"/><path fill="#017" d="M620 426h7v7h-7zM634 426h6v7h-6zM585 440h7v6h-7zM599 440h7v6h-7z"/><path fill="#118" d="M627 426h7v7h-7zM599 433h7v7h-7zM592 440h7v6h-7zM613 440h7v6h-7zM627 440h7v6h-7zM640 440h7v6h-7zM647 440h7v6h-7zM599 446h7v7h-7zM565 460h7v7h-7zM661 460h7v7h-7zM558 474h7v7h-7zM689 474h7v7h-7z"/><path fill="#255" d="M702 426h7v7h-7zM620 488h7v6h-7z"/><path fill="#764" d="M482 433h7v7h-7zM544 433h7v7h-7zM606 522h7v6h-7zM613 522h7v6h-7zM551 542h7v7h-7z"/><path fill="#642" d="M503 433h7v7h-7z"/><path fill="#324" d="M523 433h7v7h-7z"/><path fill="#654" d="M537 433h7v7h-7zM551 535h7v7h-7z"/><path fill="#942" d="M551 433h7v7h-7zM558 433h7v7h-7zM565 433h7v7h-7zM551 446h7v7h-7zM537 494h7v7h-7zM620 508h7v7h-7zM716 508h7v7h-7zM723 508h7v7h-7zM599 515h7v7h-7zM620 515h7v7h-7zM530 522h7v6h-7zM647 522h7v6h-7zM530 528h7v7h-7zM516 535h7v7h-7zM523 535h7v7h-7zM537 535h7v7h-7zM689 535h7v7h-7zM723 535h7v7h-7zM523 542h7v7h-7zM530 542h7v7h-7zM537 542h7v7h-7zM572 542h6v7h-6zM716 542h7v7h-7z"/><path fill="#832" d="M572 433h6v7h-6zM544 474h7v7h-7z"/><path fill="#225" d="M578 433h7v7h-7z"/><path fill="#117" d="M592 433h7v7h-7zM661 440h7v6h-7zM592 446h7v7h-7zM558 467h7v7h-7zM661 474h7v7h-7zM682 474h7v7h-7zM572 501h6v7h-6z"/><path fill="#119" d="M634 433h6v7h-6z"/><path fill="#018" d="M640 433h7v7h-7zM661 446h7v7h-7zM572 453h6v7h-6zM654 453h7v7h-7zM585 460h7v7h-7zM654 460h7v7h-7zM572 467h6v7h-6zM585 467h7v7h-7z"/><path fill="#c62" d="M482 440h7v6h-7z"/><path fill="#d62" d="M489 440h7v6h-7zM510 440h6v6h-6zM530 440h7v6h-7zM537 440h7v6h-7zM544 446h7v7h-7zM503 508h7v7h-7zM489 522h7v6h-7zM496 535h7v7h-7z"/><path fill="#d51" d="M496 440h7v6h-7zM496 446h7v7h-7zM530 460h7v7h-7zM530 467h7v7h-7zM496 481h7v7h-7zM523 494h7v7h-7zM516 522h7v6h-7z"/><path fill="#c51" d="M503 440h7v6h-7zM516 440h7v6h-7zM489 446h7v7h-7zM489 453h7v7h-7zM482 460h7v7h-7zM537 460h7v7h-7zM489 467h7v7h-7zM489 474h7v7h-7zM523 474h7v7h-7zM530 474h7v7h-7zM510 481h6v7h-6zM516 488h7v6h-7zM523 488h7v6h-7zM510 494h6v7h-6zM516 494h7v7h-7zM496 508h7v7h-7zM510 508h6v7h-6zM510 515h6v7h-6zM503 522h7v6h-7zM482 528h7v7h-7zM482 542h7v7h-7zM489 542h7v7h-7zM503 542h7v7h-7z"/><path fill="#c52" d="M523 440h7v6h-7zM544 453h7v7h-7zM523 481h7v7h-7zM482 488h7v6h-7zM530 488h7v6h-7zM510 522h6v6h-6z"/><path fill="#a52" d="M544 440h7v6h-7zM537 481h7v7h-7zM537 501h7v7h-7zM530 508h7v7h-7zM530 515h7v7h-7zM599 528h7v7h-7zM668 542h7v7h-7zM675 542h7v7h-7zM682 542h7v7h-7z"/><path fill="#a42" d="M551 440h7v6h-7zM537 467h7v7h-7zM537 474h7v7h-7zM537 488h7v6h-7zM627 501h7v7h-7zM523 515h7v7h-7zM661 535h7v7h-7z"/><path fill="#326" d="M565 440h7v6h-7z"/><path fill="#228" d="M572 440h6v6h-6zM634 446h6v7h-6zM640 446h7v7h-7z"/><path fill="#249" d="M682 440h7v6h-7zM702 446h7v7h-7zM696 453h6v7h-6z"/><path fill="#566" d="M696 440h6v6h-6z"/><path fill="#d61" d="M482 446h7v7h-7zM530 446h7v7h-7zM496 453h7v7h-7zM503 488h7v6h-7zM482 515h7v7h-7zM496 528h7v7h-7zM516 528h7v7h-7z"/><path fill="#f61" d="M503 446h7v7h-7zM510 446h6v7h-6zM516 446h7v7h-7zM537 446h7v7h-7zM510 453h6v7h-6zM530 453h7v7h-7zM496 460h7v7h-7zM496 467h7v7h-7zM510 467h6v7h-6zM516 467h7v7h-7zM496 488h7v6h-7z"/><path fill="#f71" d="M523 446h7v7h-7zM516 453h7v7h-7zM523 453h7v7h-7zM516 460h7v7h-7zM503 467h7v7h-7zM503 481h7v7h-7z"/><path fill="#633" d="M558 446h7v7h-7z"/><path fill="#13a" d="M675 446h7v7h-7zM675 453h7v7h-7zM675 460h7v7h-7zM585 488h7v6h-7z"/><path fill="#456" d="M689 446h7v7h-7zM696 446h6v7h-6z"/><path fill="#039" d="M709 446h7v7h-7zM723 446h7v7h-7z"/><path fill="#e62" d="M482 453h7v7h-7zM489 460h7v7h-7zM482 467h7v7h-7zM496 501h7v7h-7zM503 501h7v7h-7zM510 501h6v7h-6zM496 522h7v6h-7z"/><path fill="#e61" d="M503 453h7v7h-7zM537 453h7v7h-7zM503 460h7v7h-7zM510 460h6v7h-6zM523 460h7v7h-7zM523 467h7v7h-7zM482 474h7v7h-7zM503 474h7v7h-7zM516 474h7v7h-7zM516 481h7v7h-7zM510 488h6v6h-6zM503 494h7v7h-7zM482 508h7v7h-7zM489 508h7v7h-7zM489 515h7v7h-7zM496 515h7v7h-7z"/><path fill="#424" d="M551 453h7v7h-7z"/><path fill="#214" d="M558 453h7v7h-7z"/><path fill="#744" d="M640 453h7v7h-7z"/><path fill="#b52" d="M544 460h7v7h-7zM523 501h7v7h-7zM530 501h7v7h-7zM516 508h7v7h-7zM510 535h6v7h-6zM620 542h7v7h-7zM661 542h7v7h-7z"/><path fill="#314" d="M551 460h7v7h-7z"/><path fill="#016" d="M558 460h7v7h-7z"/><path fill="#843" d="M640 460h7v7h-7z"/><path fill="#226" d="M647 460h7v7h-7zM551 467h7v7h-7zM551 481h7v7h-7z"/><path fill="#038" d="M682 460h7v7h-7zM613 467h7v7h-7zM709 474h7v7h-7zM716 474h7v7h-7z"/><path fill="#943" d="M544 467h7v7h-7zM599 508h7v7h-7z"/><path fill="#f62" d="M496 474h7v7h-7z"/><path fill="#e51" d="M510 474h6v7h-6zM489 488h7v6h-7zM516 501h7v7h-7z"/><path fill="#432" d="M634 474h6v7h-6z"/><path fill="#b51" d="M482 481h7v7h-7zM530 481h7v7h-7zM516 515h7v7h-7zM503 528h7v7h-7zM510 528h6v7h-6zM482 535h7v7h-7zM489 535h7v7h-7z"/><path fill="#d52" d="M489 481h7v7h-7zM530 494h7v7h-7zM503 515h7v7h-7zM482 522h7v6h-7zM489 528h7v7h-7zM503 535h7v7h-7zM496 542h7v7h-7z"/><path fill="#732" d="M544 481h7v7h-7zM537 508h7v7h-7zM627 515h7v7h-7zM537 522h7v6h-7zM620 522h7v6h-7z"/><path fill="#046" d="M620 481h7v7h-7z"/><path fill="#135" d="M702 481h7v7h-7z"/><path fill="#733" d="M544 488h7v6h-7z"/><path fill="#237" d="M551 488h7v6h-7zM592 501h7v7h-7z"/><path fill="#b31" d="M482 494h7v7h-7zM606 542h7v7h-7z"/><path fill="#b41" d="M489 494h7v7h-7zM654 535h7v7h-7z"/><path fill="#e52" d="M496 494h7v7h-7z"/><path fill="#952" d="M544 494h7v7h-7zM620 501h7v7h-7zM599 522h7v6h-7zM544 542h7v7h-7z"/><path fill="#047" d="M606 494h7v7h-7z"/><path fill="#034" d="M661 494h7v7h-7zM689 494h7v7h-7z"/><path fill="#332" d="M702 494h7v7h-7z"/><path fill="#852" d="M723 494h7v7h-7z"/><path fill="#c41" d="M482 501h7v7h-7z"/><path fill="#d42" d="M489 501h7v7h-7z"/><path fill="#631" d="M634 501h6v7h-6zM709 501h7v7h-7zM634 508h6v7h-6zM537 515h7v7h-7zM634 515h6v7h-6zM709 515h7v7h-7zM709 522h7v6h-7zM716 522h7v6h-7zM723 522h7v6h-7zM537 528h7v7h-7zM620 528h7v7h-7zM627 528h7v7h-7zM716 528h7v7h-7zM723 528h7v7h-7zM578 535h7v7h-7zM709 535h7v7h-7zM578 542h7v7h-7zM585 542h7v7h-7zM702 542h7v7h-7zM709 542h7v7h-7z"/><path fill="#a41" d="M523 508h7v7h-7zM523 528h7v7h-7zM696 542h6v7h-6z"/><path fill="#531" d="M544 508h7v7h-7zM544 515h7v7h-7zM702 515h7v7h-7zM544 522h7v6h-7zM709 528h7v7h-7zM702 535h7v7h-7z"/><path fill="#221" d="M551 508h7v7h-7zM558 508h7v7h-7z"/><path fill="#212" d="M565 508h7v7h-7zM572 508h6v7h-6zM578 508h7v7h-7z"/><path fill="#433" d="M661 508h7v7h-7z"/><path fill="#431" d="M675 508h7v7h-7z"/><path fill="#521" d="M702 508h7v7h-7zM709 508h7v7h-7zM668 515h7v7h-7zM682 515h7v7h-7zM689 515h7v7h-7zM696 515h6v7h-6zM627 522h7v6h-7zM702 522h7v6h-7zM544 528h7v7h-7zM661 528h7v7h-7zM702 528h7v7h-7z"/><path fill="#321" d="M551 515h7v7h-7zM634 522h6v6h-6zM696 522h6v6h-6zM558 528h7v7h-7zM668 528h7v7h-7zM689 528h7v7h-7z"/><path fill="#310" d="M558 515h7v7h-7zM572 515h6v7h-6zM565 522h7v6h-7zM675 522h7v6h-7z"/><path fill="#841" d="M592 515h7v7h-7zM716 515h7v7h-7zM723 515h7v7h-7zM620 535h7v7h-7zM668 535h7v7h-7zM716 535h7v7h-7z"/><path fill="#932" d="M654 522h7v6h-7z"/><path fill="#921" d="M647 528h7v7h-7z"/><path fill="#a31" d="M654 528h7v7h-7zM592 542h7v7h-7zM599 542h7v7h-7z"/><path fill="#411" d="M696 528h6v7h-6z"/><path fill="#653" d="M558 535h7v7h-7z"/><path fill="#731" d="M572 535h6v7h-6zM627 535h7v7h-7zM696 535h6v7h-6z"/><path fill="#931" d="M592 535h7v7h-7zM647 535h7v7h-7zM647 542h7v7h-7z"/><path fill="#c42" d="M599 535h7v7h-7zM613 542h7v7h-7zM654 542h7v7h-7z"/><path fill="#b42" d="M606 535h7v7h-7zM613 535h7v7h-7z"/><path fill="#210" d="M640 535h7v7h-7z"/><path fill="#864" d="M558 542h7v7h-7z"/><path fill="#17d" d="M982 385h7v7h-7zM1037 385h7v7h-7zM1051 385h7v7h-7zM1072 385h6v7h-6zM1120 385h7v7h-7zM1127 385h7v7h-7zM1161 385h7v7h-7zM1175 385h7v7h-7zM1161 392h7v7h-7zM1175 392h7v7h-7zM1058 399h7v7h-7zM1140 399h7v7h-7zM1154 399h7v7h-7zM1030 406h7v6h-7zM1147 406h7v6h-7zM1161 406h7v6h-7zM982 412h7v7h-7zM989 412h7v7h-7zM1010 412h6v7h-6zM1058 412h7v7h-7zM1161 412h7v7h-7zM1168 412h7v7h-7zM1016 419h7v7h-7zM1223 453h7v7h-7zM1216 460h7v7h-7z"/><path fill="#16d" d="M989 385h7v7h-7zM1182 385h7v7h-7zM1182 392h7v7h-7zM1134 406h6v6h-6zM1140 406h7v6h-7zM1154 406h7v6h-7zM1161 419h7v7h-7zM1223 460h7v7h-7z"/><path fill="#15a" d="M996 385h7v7h-7zM1010 385h6v7h-6zM1106 385h7v7h-7zM1189 385h7v7h-7zM1113 392h7v7h-7zM1106 399h7v7h-7zM1182 399h7v7h-7zM1147 412h7v7h-7zM1189 419h7v7h-7zM1051 426h7v7h-7zM1058 426h7v7h-7zM1099 446h7v7h-7zM1106 446h7v7h-7zM1120 446h7v7h-7zM1127 453h7v7h-7zM1106 460h7v7h-7zM1209 474h7v7h-7zM1092 481h7v7h-7zM1113 488h7v6h-7zM1065 494h7v7h-7zM1078 494h7v7h-7zM1065 501h7v7h-7zM1072 501h6v7h-6zM1078 501h7v7h-7zM1154 501h7v7h-7z"/><path fill="#15b" d="M1003 385h7v7h-7zM1030 385h7v7h-7zM1078 385h7v7h-7zM1085 385h7v7h-7zM1113 385h7v7h-7zM1196 385h6v7h-6zM1202 385h7v7h-7zM1209 385h7v7h-7zM1216 385h7v7h-7zM1010 392h6v7h-6zM1016 392h7v7h-7zM1078 392h7v7h-7zM1085 392h7v7h-7zM1092 392h7v7h-7zM1106 392h7v7h-7zM1189 392h7v7h-7zM1202 392h7v7h-7zM996 399h7v7h-7zM1003 399h7v7h-7zM1078 399h7v7h-7zM1085 399h7v7h-7zM1092 399h7v7h-7zM1099 399h7v7h-7zM1175 399h7v7h-7zM1189 399h7v7h-7zM1196 399h6v7h-6zM982 406h7v6h-7zM989 406h7v6h-7zM1010 406h6v6h-6zM1016 406h7v6h-7zM1065 406h7v6h-7zM1078 406h7v6h-7zM1106 406h7v6h-7zM1182 406h7v6h-7zM1189 406h7v6h-7zM1202 406h7v6h-7zM1023 412h7v7h-7zM1037 412h7v7h-7zM1044 412h7v7h-7zM1127 412h7v7h-7zM1175 412h7v7h-7zM1182 412h7v7h-7zM1189 412h7v7h-7zM1037 419h7v7h-7zM1044 419h7v7h-7zM1113 419h7v7h-7zM1120 419h7v7h-7zM1154 419h7v7h-7zM1182 419h7v7h-7zM1196 419h6v7h-6zM1223 419h7v7h-7zM1037 426h7v7h-7zM1044 426h7v7h-7zM1175 426h7v7h-7zM1182 426h7v7h-7zM1196 426h6v7h-6zM1223 426h7v7h-7zM1092 433h7v7h-7zM1099 433h7v7h-7zM1175 433h7v7h-7zM1189 433h7v7h-7zM1092 440h7v6h-7zM1099 440h7v6h-7zM1120 440h7v6h-7zM1175 440h7v6h-7zM1209 440h7v6h-7zM1113 446h7v7h-7zM1127 446h7v7h-7zM1182 446h7v7h-7zM1189 446h7v7h-7zM1092 453h7v7h-7zM1106 453h7v7h-7zM1120 453h7v7h-7zM1182 453h7v7h-7zM1189 453h7v7h-7zM1196 453h6v7h-6zM1099 460h7v7h-7zM1189 460h7v7h-7zM1099 467h7v7h-7zM1189 467h7v7h-7zM1202 467h7v7h-7zM1223 467h7v7h-7zM1106 474h7v7h-7zM1223 474h7v7h-7zM1099 481h7v7h-7zM1189 481h7v7h-7zM1202 481h7v7h-7zM1223 481h7v7h-7zM1078 488h7v6h-7zM1085 488h7v6h-7zM1106 488h7v6h-7zM1175 488h7v6h-7zM1085 494h7v7h-7zM1092 494h7v7h-7zM1106 494h7v7h-7zM1147 494h7v7h-7zM1085 501h7v7h-7z"/><path fill="#14a" d="M1016 385h7v7h-7zM1023 385h7v7h-7zM1099 385h7v7h-7zM1223 385h7v7h-7zM1099 392h7v7h-7zM1223 392h7v7h-7zM1010 399h6v7h-6zM1016 399h7v7h-7zM1196 406h6v6h-6zM1120 412h7v7h-7zM1196 412h6v7h-6zM1030 419h7v7h-7zM1147 419h7v7h-7zM1216 419h7v7h-7zM1023 426h7v7h-7zM1189 426h7v7h-7zM1037 433h7v7h-7zM1161 433h7v7h-7zM1078 440h7v6h-7zM1127 440h7v6h-7zM1065 446h7v7h-7zM1078 446h7v7h-7zM1085 446h7v7h-7zM1092 446h7v7h-7zM1099 453h7v7h-7zM1113 453h7v7h-7zM1092 460h7v7h-7zM1196 460h6v7h-6zM1092 467h7v7h-7zM1113 467h7v7h-7zM1092 474h7v7h-7zM1099 474h7v7h-7zM1196 474h6v7h-6zM1113 481h7v7h-7zM1182 481h7v7h-7zM1216 481h7v7h-7zM1092 488h7v6h-7zM1182 488h7v6h-7zM1216 488h7v6h-7zM1099 494h7v7h-7zM1154 494h7v7h-7zM1161 494h7v7h-7zM1175 494h7v7h-7zM1182 494h7v7h-7zM1168 501h7v7h-7z"/><path fill="#17e" d="M1044 385h7v7h-7zM1058 385h7v7h-7zM1168 385h7v7h-7zM1058 392h7v7h-7zM1161 399h7v7h-7zM1216 446h7v7h-7zM1223 446h7v7h-7zM1216 453h7v7h-7zM1209 460h7v7h-7z"/><path fill="#18e" d="M1065 385h7v7h-7zM1147 385h7v7h-7zM1044 392h7v7h-7zM1147 392h7v7h-7zM1154 392h7v7h-7z"/><path fill="#15c" d="M1092 385h7v7h-7zM996 392h7v7h-7zM1003 392h7v7h-7zM1023 392h7v7h-7zM1196 392h6v7h-6zM1209 392h7v7h-7zM1216 392h7v7h-7zM989 399h7v7h-7zM1065 399h7v7h-7zM1072 399h6v7h-6zM1209 399h7v7h-7zM1175 406h7v6h-7zM1030 412h7v7h-7zM1023 419h7v7h-7zM1175 419h7v7h-7zM1161 426h7v7h-7zM1168 426h7v7h-7zM1168 433h7v7h-7zM1196 433h6v7h-6zM1216 433h7v7h-7zM1223 433h7v7h-7zM1113 440h7v6h-7zM1202 440h7v6h-7zM1196 446h6v7h-6zM1202 446h7v7h-7zM1113 460h7v7h-7zM1196 467h6v7h-6zM1209 467h7v7h-7zM1216 467h7v7h-7zM1189 474h7v7h-7zM1216 474h7v7h-7zM1085 481h7v7h-7zM1106 481h7v7h-7zM1196 481h6v7h-6zM1209 481h7v7h-7z"/><path fill="#1ae" d="M1134 385h6v7h-6zM1140 385h7v7h-7zM1134 392h6v7h-6z"/><path fill="#17c" d="M1154 385h7v7h-7zM1037 392h7v7h-7zM1051 392h7v7h-7zM1127 392h7v7h-7zM1030 399h7v7h-7zM1134 399h6v7h-6zM1147 399h7v7h-7zM1051 406h7v6h-7zM1051 412h7v7h-7zM982 419h7v7h-7zM989 419h7v7h-7zM1209 453h7v7h-7z"/><path fill="#16c" d="M982 392h7v7h-7zM989 392h7v7h-7zM1065 392h7v7h-7zM1072 392h6v7h-6zM1168 392h7v7h-7zM982 399h7v7h-7zM1023 399h7v7h-7zM1168 399h7v7h-7zM1003 406h7v6h-7zM1023 406h7v6h-7zM1058 406h7v6h-7zM1168 406h7v6h-7zM1016 412h7v7h-7zM1154 412h7v7h-7zM1051 419h7v7h-7zM1058 419h7v7h-7zM1168 419h7v7h-7zM1216 440h7v6h-7zM1223 440h7v6h-7zM1209 446h7v7h-7zM1202 453h7v7h-7zM1202 460h7v7h-7z"/><path fill="#16b" d="M1030 392h7v7h-7zM996 406h7v6h-7z"/><path fill="#26c" d="M1120 392h7v7h-7z"/><path fill="#1af" d="M1140 392h7v7h-7z"/><path fill="#19d" d="M1037 399h7v7h-7zM1037 406h7v6h-7zM1044 406h7v6h-7zM996 412h7v7h-7zM1003 419h7v7h-7z"/><path fill="#19e" d="M1044 399h7v7h-7zM1003 412h7v7h-7z"/><path fill="#18d" d="M1051 399h7v7h-7z"/><path fill="#24a" d="M1113 399h7v7h-7zM1044 433h7v7h-7zM1058 433h7v7h-7zM1120 460h7v7h-7zM1140 481h7v7h-7zM1127 488h7v6h-7zM1134 488h6v6h-6zM1140 488h7v6h-7zM1196 488h6v6h-6zM1223 488h7v6h-7zM1147 501h7v7h-7zM1161 501h7v7h-7zM1175 501h7v7h-7zM1182 501h7v7h-7z"/><path fill="#359" d="M1120 399h7v7h-7zM1127 399h7v7h-7zM1127 406h7v6h-7zM1037 440h7v6h-7zM1058 446h7v7h-7z"/><path fill="#14b" d="M1202 399h7v7h-7zM1209 406h7v6h-7zM1134 412h6v7h-6zM1140 412h7v7h-7zM1216 412h7v7h-7zM1127 419h7v7h-7zM1216 426h7v7h-7zM1023 433h7v7h-7zM1085 433h7v7h-7zM1182 433h7v7h-7zM1085 440h7v6h-7zM1182 440h7v6h-7zM1189 440h7v6h-7zM1196 440h6v6h-6zM1072 446h6v7h-6zM1175 446h7v7h-7zM1147 453h7v7h-7zM1154 453h7v7h-7zM1154 460h7v7h-7zM1175 460h7v7h-7zM1182 460h7v7h-7zM1106 467h7v7h-7zM1202 474h7v7h-7zM1078 481h7v7h-7zM1175 481h7v7h-7zM1099 488h7v6h-7zM1072 494h6v7h-6zM1168 494h7v7h-7z"/><path fill="#13c" d="M1216 399h7v7h-7zM1223 399h7v7h-7zM1134 419h6v7h-6zM1140 419h7v7h-7zM1113 426h7v7h-7zM1127 426h7v7h-7zM1147 426h7v7h-7zM1154 426h7v7h-7zM1209 426h7v7h-7zM1113 433h7v7h-7zM1134 433h6v7h-6zM1140 440h7v6h-7zM1147 440h7v6h-7zM1154 440h7v6h-7zM1168 440h7v6h-7zM1154 446h7v7h-7zM1168 446h7v7h-7zM1168 453h7v7h-7zM1072 460h6v7h-6zM1078 460h7v7h-7zM1085 460h7v7h-7zM1161 460h7v7h-7zM1168 460h7v7h-7zM1085 467h7v7h-7zM1154 467h7v7h-7zM1175 467h7v7h-7zM1078 474h7v7h-7zM1161 474h7v7h-7zM1168 474h7v7h-7zM1182 474h7v7h-7zM1065 481h7v7h-7zM1072 481h6v7h-6zM1168 481h7v7h-7zM1154 488h7v6h-7z"/><path fill="#149" d="M1072 406h6v6h-6zM1092 426h7v7h-7z"/><path fill="#25b" d="M1085 406h7v6h-7zM1092 406h7v6h-7zM1113 406h7v6h-7zM1099 426h7v7h-7zM1078 433h7v7h-7zM1072 440h6v6h-6zM1113 474h7v7h-7zM1120 481h7v7h-7zM1134 481h6v7h-6zM1120 488h7v6h-7zM1189 488h7v6h-7zM1202 488h7v6h-7zM1209 488h7v6h-7zM1113 494h7v7h-7zM1106 501h7v7h-7z"/><path fill="#25a" d="M1099 406h7v6h-7zM1078 426h7v7h-7zM1051 433h7v7h-7zM1065 440h7v6h-7zM1127 481h7v7h-7zM1092 501h7v7h-7zM1099 501h7v7h-7z"/><path fill="#348" d="M1120 406h7v6h-7zM1092 412h7v7h-7zM1099 412h7v7h-7zM1065 426h7v7h-7zM1072 433h6v7h-6zM1051 440h7v6h-7zM1140 467h7v7h-7zM1140 474h7v7h-7zM1134 494h6v7h-6zM1189 494h7v7h-7zM1209 494h7v7h-7zM1092 508h7v7h-7z"/><path fill="#13b" d="M1216 406h7v6h-7zM1030 426h7v7h-7zM1106 426h7v7h-7zM1120 426h7v7h-7zM1202 426h7v7h-7zM1106 433h7v7h-7zM1120 433h7v7h-7zM1202 433h7v7h-7zM1134 446h6v7h-6zM1140 446h7v7h-7zM1147 446h7v7h-7zM1161 446h7v7h-7zM1072 453h6v7h-6zM1078 453h7v7h-7zM1085 453h7v7h-7zM1065 467h7v7h-7zM1078 467h7v7h-7zM1168 467h7v7h-7zM1065 474h7v7h-7zM1147 474h7v7h-7zM1147 481h7v7h-7zM1161 481h7v7h-7zM1147 488h7v6h-7zM1161 488h7v6h-7zM1168 488h7v6h-7z"/><path fill="#03b" d="M1223 406h7v6h-7zM1154 433h7v7h-7zM1134 440h6v6h-6zM1161 440h7v6h-7zM1072 467h6v7h-6zM1161 467h7v7h-7z"/><path fill="#13a" d="M1065 412h7v7h-7zM1209 419h7v7h-7z"/><path fill="#139" d="M1072 412h6v7h-6zM1202 412h7v7h-7zM1209 412h7v7h-7zM1065 419h7v7h-7z"/><path fill="#349" d="M1078 412h7v7h-7zM1078 419h7v7h-7zM1072 426h6v7h-6zM1120 467h7v7h-7zM1140 494h7v7h-7z"/><path fill="#448" d="M1085 412h7v7h-7zM1044 440h7v6h-7zM1134 460h6v7h-6zM1140 460h7v7h-7zM1127 467h7v7h-7zM1202 494h7v7h-7zM1120 501h7v7h-7zM1127 501h7v7h-7zM1140 501h7v7h-7zM1189 501h7v7h-7zM1196 501h6v7h-6zM1099 508h7v7h-7zM1106 508h7v7h-7z"/><path fill="#249" d="M1106 412h7v7h-7zM1127 460h7v7h-7zM1113 501h7v7h-7z"/><path fill="#25c" d="M1113 412h7v7h-7z"/><path fill="#14c" d="M1223 412h7v7h-7zM1030 433h7v7h-7zM1209 433h7v7h-7zM1106 440h7v6h-7zM1065 453h7v7h-7zM1175 453h7v7h-7zM1147 467h7v7h-7zM1182 467h7v7h-7zM1085 474h7v7h-7zM1065 488h7v6h-7zM1072 488h6v6h-6z"/><path fill="#19c" d="M996 419h7v7h-7z"/><path fill="#18c" d="M1010 419h6v7h-6z"/><path fill="#238" d="M1072 419h6v7h-6z"/><path fill="#459" d="M1085 419h7v7h-7zM1099 419h7v7h-7zM1065 433h7v7h-7zM1051 446h7v7h-7zM1140 453h7v7h-7zM1120 474h7v7h-7zM1134 474h6v7h-6zM1120 494h7v7h-7zM1092 522h7v6h-7z"/><path fill="#449" d="M1092 419h7v7h-7zM1058 440h7v6h-7zM1127 474h7v7h-7zM1127 494h7v7h-7zM1196 494h6v7h-6z"/><path fill="#24b" d="M1106 419h7v7h-7zM1085 426h7v7h-7zM1147 460h7v7h-7z"/><path fill="#129" d="M1202 419h7v7h-7z"/><path fill="#179" d="M982 426h7v7h-7zM989 426h7v7h-7zM1010 426h6v7h-6zM1072 508h6v7h-6z"/><path fill="#17a" d="M996 426h7v7h-7z"/><path fill="#178" d="M1003 426h7v7h-7zM1010 433h6v7h-6zM996 440h7v6h-7zM1078 522h7v6h-7z"/><path fill="#069" d="M1016 426h7v7h-7zM1058 460h7v7h-7z"/><path fill="#03c" d="M1134 426h6v7h-6zM1140 426h7v7h-7zM1140 433h7v7h-7zM1175 474h7v7h-7z"/><path fill="#167" d="M982 433h7v7h-7zM989 433h7v7h-7zM996 446h7v7h-7zM1003 446h7v7h-7zM1010 446h6v7h-6zM1051 494h7v7h-7zM1051 501h7v7h-7zM1078 515h7v7h-7z"/><path fill="#068" d="M996 433h7v7h-7zM1016 433h7v7h-7zM1016 440h7v6h-7zM1058 481h7v7h-7z"/><path fill="#168" d="M1003 433h7v7h-7zM1003 440h7v6h-7zM1010 440h6v6h-6zM1058 467h7v7h-7zM1058 501h7v7h-7zM1065 508h7v7h-7zM1085 508h7v7h-7zM1065 515h7v7h-7zM1085 515h7v7h-7zM1065 522h7v6h-7zM1072 522h6v6h-6zM1085 522h7v6h-7zM1078 528h7v7h-7z"/><path fill="#13d" d="M1127 433h7v7h-7zM1147 433h7v7h-7zM1161 453h7v7h-7zM1154 481h7v7h-7z"/><path fill="#365" d="M982 440h7v6h-7zM989 440h7v6h-7zM996 453h7v7h-7zM1023 453h7v7h-7z"/><path fill="#169" d="M1023 440h7v6h-7zM1030 440h7v6h-7zM1058 453h7v7h-7zM1058 474h7v7h-7zM1058 494h7v7h-7zM1078 508h7v7h-7z"/><path fill="#376" d="M982 446h7v7h-7zM989 446h7v7h-7z"/><path fill="#267" d="M1016 446h7v7h-7zM1051 453h7v7h-7zM1051 467h7v7h-7zM1065 528h7v7h-7zM1072 528h6v7h-6z"/><path fill="#177" d="M1023 446h7v7h-7z"/><path fill="#278" d="M1030 446h7v7h-7zM1051 460h7v7h-7zM1051 488h7v6h-7z"/><path fill="#558" d="M1037 446h7v7h-7zM1099 515h7v7h-7zM1106 515h7v7h-7z"/><path fill="#658" d="M1044 446h7v7h-7z"/><path fill="#375" d="M982 453h7v7h-7zM989 453h7v7h-7z"/><path fill="#366" d="M1003 453h7v7h-7z"/><path fill="#566" d="M1010 453h6v7h-6z"/><path fill="#576" d="M1016 453h7v7h-7z"/><path fill="#466" d="M1030 453h7v7h-7z"/><path fill="#965" d="M1037 453h7v7h-7zM1044 460h7v7h-7zM1044 467h7v7h-7zM1044 481h7v7h-7z"/><path fill="#855" d="M1044 453h7v7h-7z"/><path fill="#45a" d="M1134 453h6v7h-6z"/><path fill="#465" d="M982 460h7v7h-7zM1003 460h7v7h-7zM1044 494h7v7h-7z"/><path fill="#565" d="M989 460h7v7h-7zM1030 460h7v7h-7zM1037 501h7v7h-7zM1065 535h7v7h-7z"/><path fill="#575" d="M996 460h7v7h-7zM1023 460h7v7h-7z"/><path fill="#665" d="M1010 460h6v7h-6zM1037 494h7v7h-7zM1044 535h7v7h-7zM1051 535h7v7h-7zM1058 542h7v7h-7z"/><path fill="#666" d="M1016 460h7v7h-7zM1072 542h6v7h-6z"/><path fill="#a65" d="M1037 460h7v7h-7zM1044 474h7v7h-7zM1030 494h7v7h-7zM1030 508h7v7h-7zM1030 535h7v7h-7zM1030 542h7v7h-7z"/><path fill="#03a" d="M1065 460h7v7h-7z"/><path fill="#954" d="M982 467h7v7h-7zM989 467h7v7h-7zM1030 515h7v7h-7zM1030 528h7v7h-7z"/><path fill="#964" d="M996 467h7v7h-7z"/><path fill="#864" d="M1003 467h7v7h-7z"/><path fill="#765" d="M1010 467h6v7h-6zM1016 467h7v7h-7zM1030 467h7v7h-7zM1044 488h7v6h-7zM1065 542h7v7h-7z"/><path fill="#776" d="M1023 467h7v7h-7zM1044 542h7v7h-7z"/><path fill="#b65" d="M1037 467h7v7h-7zM1030 481h7v7h-7zM982 488h7v6h-7zM1030 488h7v6h-7zM1023 528h7v7h-7z"/><path fill="#559" d="M1134 467h6v7h-6z"/><path fill="#a54" d="M982 474h7v7h-7zM989 481h7v7h-7zM1037 481h7v7h-7zM989 494h7v7h-7zM1003 522h7v6h-7zM1003 528h7v7h-7zM982 535h7v7h-7zM989 535h7v7h-7zM996 535h7v7h-7zM996 542h7v7h-7zM1016 542h7v7h-7z"/><path fill="#b64" d="M989 474h7v7h-7zM1003 481h7v7h-7zM1010 481h6v7h-6zM1023 515h7v7h-7zM1016 522h7v6h-7zM1010 528h6v7h-6zM1016 528h7v7h-7zM1003 535h7v7h-7zM1016 535h7v7h-7zM1023 542h7v7h-7z"/><path fill="#a64" d="M996 474h7v7h-7zM1003 474h7v7h-7zM982 481h7v7h-7zM1037 488h7v6h-7zM982 494h7v7h-7zM982 501h7v7h-7zM1030 501h7v7h-7zM1010 522h6v6h-6zM1023 522h7v6h-7zM1030 522h7v6h-7zM1010 535h6v7h-6zM1023 535h7v7h-7zM982 542h7v7h-7zM989 542h7v7h-7zM1003 542h7v7h-7zM1010 542h6v7h-6z"/><path fill="#865" d="M1010 474h6v7h-6zM1016 474h7v7h-7zM1030 474h7v7h-7zM1037 535h7v7h-7z"/><path fill="#875" d="M1023 474h7v7h-7z"/><path fill="#c65" d="M1037 474h7v7h-7zM996 481h7v7h-7zM1016 481h7v7h-7zM1023 481h7v7h-7zM1010 488h6v6h-6zM1023 508h7v7h-7zM1016 515h7v7h-7z"/><path fill="#377" d="M1051 474h7v7h-7z"/><path fill="#03d" d="M1072 474h6v7h-6zM1154 474h7v7h-7z"/><path fill="#378" d="M1051 481h7v7h-7z"/><path fill="#c64" d="M989 488h7v6h-7zM1003 488h7v6h-7zM1010 494h6v7h-6zM1016 494h7v7h-7zM989 501h7v7h-7zM1010 515h6v7h-6zM996 522h7v6h-7zM996 528h7v7h-7z"/><path fill="#d64" d="M996 488h7v6h-7zM1010 501h6v7h-6z"/><path fill="#d65" d="M1016 488h7v6h-7z"/><path fill="#d75" d="M1023 488h7v6h-7zM1023 494h7v7h-7zM1016 501h7v7h-7zM1016 508h7v7h-7z"/><path fill="#058" d="M1058 488h7v6h-7z"/><path fill="#d63" d="M996 494h7v7h-7zM996 501h7v7h-7zM989 515h7v7h-7z"/><path fill="#e63" d="M1003 494h7v7h-7zM1003 501h7v7h-7zM982 522h7v6h-7zM982 528h7v7h-7z"/><path fill="#337" d="M1216 494h7v7h-7z"/><path fill="#236" d="M1223 494h7v7h-7zM1147 508h7v7h-7zM1154 508h7v7h-7zM1161 508h7v7h-7zM1209 522h7v6h-7z"/><path fill="#c75" d="M1023 501h7v7h-7z"/><path fill="#355" d="M1044 501h7v7h-7z"/><path fill="#447" d="M1134 501h6v7h-6zM1202 501h7v7h-7zM1099 522h7v6h-7zM1092 528h7v7h-7z"/><path fill="#347" d="M1209 501h7v7h-7zM1092 515h7v7h-7z"/><path fill="#335" d="M1216 501h7v7h-7zM1044 508h7v7h-7zM1202 508h7v7h-7zM1216 508h7v7h-7zM1044 515h7v7h-7zM1161 515h7v7h-7zM1216 515h7v7h-7zM1223 515h7v7h-7zM1161 522h7v6h-7zM1223 522h7v6h-7zM1209 528h7v7h-7zM1078 535h7v7h-7zM1196 535h6v7h-6zM1216 535h7v7h-7zM1078 542h7v7h-7zM1085 542h7v7h-7zM1134 542h6v7h-6zM1202 542h7v7h-7z"/><path fill="#336" d="M1223 501h7v7h-7zM1134 508h6v7h-6zM1140 508h7v7h-7zM1168 508h7v7h-7zM1189 508h7v7h-7zM1196 508h6v7h-6zM1209 508h7v7h-7zM1051 515h7v7h-7zM1209 515h7v7h-7zM1175 528h7v7h-7zM1189 528h7v7h-7zM1085 535h7v7h-7zM1175 535h7v7h-7zM1175 542h7v7h-7zM1189 542h7v7h-7z"/><path fill="#e53" d="M982 508h7v7h-7z"/><path fill="#d53" d="M989 508h7v7h-7zM996 508h7v7h-7zM996 515h7v7h-7zM989 522h7v6h-7zM989 528h7v7h-7z"/><path fill="#f63" d="M1003 508h7v7h-7zM982 515h7v7h-7z"/><path fill="#e75" d="M1010 508h6v7h-6z"/><path fill="#446" d="M1037 508h7v7h-7z"/><path fill="#235" d="M1051 508h7v7h-7zM1058 515h7v7h-7zM1058 522h7v6h-7zM1202 522h7v6h-7zM1182 528h7v7h-7zM1223 535h7v7h-7zM1209 542h7v7h-7zM1216 542h7v7h-7z"/><path fill="#246" d="M1058 508h7v7h-7z"/><path fill="#458" d="M1113 508h7v7h-7z"/><path fill="#647" d="M1120 508h7v7h-7zM1106 522h7v6h-7zM1113 522h7v6h-7zM1106 528h7v7h-7zM1099 535h7v7h-7z"/><path fill="#537" d="M1127 508h7v7h-7z"/><path fill="#426" d="M1175 508h7v7h-7z"/><path fill="#325" d="M1182 508h7v7h-7zM1134 515h6v7h-6zM1140 515h7v7h-7zM1147 515h7v7h-7zM1189 515h7v7h-7zM1196 515h6v7h-6zM1202 515h7v7h-7zM1051 522h7v6h-7zM1175 522h7v6h-7zM1182 522h7v6h-7zM1168 528h7v7h-7zM1223 528h7v7h-7zM1134 535h6v7h-6zM1140 535h7v7h-7zM1209 535h7v7h-7zM1140 542h7v7h-7zM1223 542h7v7h-7z"/><path fill="#225" d="M1223 508h7v7h-7zM1168 515h7v7h-7zM1168 522h7v6h-7zM1189 522h7v6h-7zM1196 522h6v6h-6zM1196 528h6v7h-6zM1202 528h7v7h-7zM1216 528h7v7h-7zM1182 535h7v7h-7zM1189 535h7v7h-7zM1202 535h7v7h-7zM1196 542h6v7h-6z"/><path fill="#c53" d="M1003 515h7v7h-7z"/><path fill="#435" d="M1037 515h7v7h-7zM1051 528h7v7h-7zM1161 528h7v7h-7z"/><path fill="#078" d="M1072 515h6v7h-6z"/><path fill="#548" d="M1113 515h7v7h-7z"/><path fill="#637" d="M1120 515h7v7h-7z"/><path fill="#636" d="M1127 515h7v7h-7zM1044 522h7v6h-7zM1127 522h7v6h-7zM1113 528h7v7h-7zM1120 528h7v7h-7zM1120 535h7v7h-7zM1127 535h7v7h-7zM1154 535h7v7h-7zM1106 542h7v7h-7zM1120 542h7v7h-7zM1147 542h7v7h-7zM1161 542h7v7h-7z"/><path fill="#326" d="M1154 515h7v7h-7zM1182 542h7v7h-7z"/><path fill="#425" d="M1175 515h7v7h-7zM1182 515h7v7h-7zM1134 522h6v6h-6zM1154 522h7v6h-7zM1140 528h7v7h-7z"/><path fill="#746" d="M1037 522h7v6h-7zM1037 528h7v7h-7zM1106 535h7v7h-7z"/><path fill="#646" d="M1120 522h7v6h-7zM1099 542h7v7h-7zM1168 542h7v7h-7z"/><path fill="#424" d="M1140 522h7v6h-7zM1147 522h7v6h-7zM1154 528h7v7h-7z"/><path fill="#226" d="M1216 522h7v6h-7z"/><path fill="#536" d="M1044 528h7v7h-7zM1127 528h7v7h-7zM1147 535h7v7h-7zM1161 535h7v7h-7zM1168 535h7v7h-7zM1092 542h7v7h-7zM1127 542h7v7h-7z"/><path fill="#346" d="M1058 528h7v7h-7z"/><path fill="#268" d="M1085 528h7v7h-7z"/><path fill="#547" d="M1099 528h7v7h-7zM1092 535h7v7h-7z"/><path fill="#525" d="M1134 528h6v7h-6zM1147 528h7v7h-7z"/><path fill="#555" d="M1058 535h7v7h-7zM1072 535h6v7h-6z"/><path fill="#747" d="M1113 535h7v7h-7z"/><path fill="#764" d="M1037 542h7v7h-7z"/><path fill="#766" d="M1051 542h7v7h-7z"/><path fill="#736" d="M1113 542h7v7h-7z"/><path fill="#737" d="M1154 542h7v7h-7z"/><rect x="982" y="542" width="41" height="8" fill="#000"/><g transform="translate(732,385)" clip-path="url(#rc)"><g filter="url(#rb)"><rect x="-10" y="-10" width="270" height="190" fill="#cc4c12"/><ellipse cx="25.3" cy="94.3" rx="50.5" ry="43.8" fill="#f0520e" opacity="0.8"/><ellipse cx="193.7" cy="151.6" rx="70.8" ry="20.2" fill="#f0520e" opacity="0.55"/><polygon points="-10.1,-10.1 101.1,-10.1 91.8,1.3 79.2,9.3 67.4,16.0 55.6,21.1 42.1,27.8 25.3,33.7 10.1,39.6 -10.1,50.5" fill="#2e4a66"/><polygon points="-10.1,48.9 10.1,40.4 25.3,34.5 42.1,28.6 55.6,21.9 67.4,16.8 74.1,30.3 70.8,43.8 55.6,55.6 33.7,50.5 16.8,55.6 0.0,50.5" fill="#26405e"/><polygon points="91.8,1.3 101.1,-10.1 225.7,-10.1 219.0,16.8 210.6,16.0 202.2,14.3 188.7,14.3 175.2,16.0 161.7,16.8 151.6,14.3 144.9,10.1 134.8,7.6 123.0,4.2 116.2,0.0 107.8,10.1 94.3,11.8 79.2,18.5" fill="#26426a"/><polygon points="219.0,-10.1 262.8,-10.1 262.8,84.2 250.0,76.7 242.6,69.1 235.8,59.0 230.0,47.2 225.7,36.2 220.7,27.8 216.5,21.9 212.3,16.8" fill="#5c4c4e"/><ellipse cx="15.2" cy="10.1" rx="9.3" ry="6.5" fill="#b05a28" opacity="0.55"/><ellipse cx="42.1" cy="6.7" rx="7.6" ry="5.3" fill="#b05a28" opacity="0.55"/><ellipse cx="28.6" cy="25.3" rx="6.7" ry="4.7" fill="#b05a28" opacity="0.55"/><ellipse cx="70.8" cy="5.1" rx="6.7" ry="4.7" fill="#b05a28" opacity="0.55"/><ellipse cx="55.6" cy="42.1" rx="7.6" ry="5.3" fill="#b05a28" opacity="0.55"/><ellipse cx="168.5" cy="5.1" rx="9.3" ry="6.5" fill="#b05a28" opacity="0.55"/><ellipse cx="193.7" cy="3.4" rx="7.6" ry="5.3" fill="#b05a28" opacity="0.55"/><ellipse cx="235.8" cy="15.2" rx="10.1" ry="7.1" fill="#b05a28" opacity="0.55"/><ellipse cx="240.9" cy="38.7" rx="8.4" ry="5.9" fill="#b05a28" opacity="0.55"/><polygon points="74.1,30.3 79.2,18.5 94.3,11.8 107.8,15.2 128.0,20.2 148.2,16.0 146.6,25.3 128.0,38.7 107.8,48.9 84.2,62.3 70.8,74.1 57.3,67.4 55.6,55.6 70.8,43.8" fill="#d6621a"/><polygon points="107.8,48.9 128.0,38.7 151.6,23.6 210.6,17.7 224.1,42.1 235.8,60.6 242.6,70.8 262.8,80.9 262.8,102.8 219.0,107.8 212.3,124.7 170.1,131.4 156.7,117.9 144.9,101.1 134.8,87.6 128.0,107.8 117.9,128.0 94.3,144.9 79.2,141.5 67.4,107.8 70.8,80.9 84.2,62.3" fill="#23406a"/><ellipse cx="168.5" cy="42.1" rx="32.0" ry="17.7" fill="#1e3a66" transform="rotate(-12 168.5 42.1)"/><ellipse cx="94.3" cy="104.4" rx="20.2" ry="33.7" fill="#2a4670" opacity="0.8"/><ellipse cx="202.2" cy="99.4" rx="42.1" ry="21.9" fill="#36587e"/><ellipse cx="117.9" cy="70.8" rx="20.2" ry="11.8" fill="#36587e" opacity="0.7"/><polygon points="235.8,42.1 262.8,43.8 262.8,80.9 242.6,70.8" fill="#2a4c74"/><ellipse cx="146.6" cy="99.4" rx="12.6" ry="17.7" fill="#b4622a"/><ellipse cx="211.4" cy="39.6" rx="11.8" ry="10.4" fill="#b4622a"/><ellipse cx="213.9" cy="69.1" rx="11.1" ry="11.1" fill="#b4622a" opacity="0.85"/></g><rect x="0" y="0" width="249" height="169" filter="url(#rn)" opacity="0.4"/><rect x="0" y="0" width="249" height="169" filter="url(#rw)" opacity="0.22"/><g filter="url(#rb2)" fill="none" stroke="#88f4f4" stroke-linecap="round" stroke-linejoin="round"><path d="M-1.7 45.8L10.1 39.6L25.3 33.7L42.1 27.8L55.6 21.1L67.4 16.0L79.2 9.3L87.6 3.4L92.3 0.7" stroke-width="3.4"/><path d="M67.4 16.8L74.1 28.6L77.8 35.7" stroke-width="1.8" opacity=".65"/><path d="M115.9 -1.0L123.0 4.2L134.8 7.6L144.9 10.1L151.6 14.3L161.7 16.8L175.2 16.0L188.7 14.3L202.2 14.3L210.6 16.0" stroke-width="3.2"/><path d="M210.6 16.0L216.5 21.9L220.7 27.8L225.7 36.2L230.0 47.2L235.8 59.0L242.6 69.1L251.0 77.2" stroke-width="2.3" opacity=".85"/></g><g filter="url(#rb2)" fill="#5cbcdc" opacity=".8"><rect x="84.8" y="91.5" width="4.5" height="4.5"/><rect x="98.2" y="110.5" width="4.5" height="4.5"/><rect x="110.5" y="61.7" width="4.5" height="4.5"/><rect x="50.2" y="56.1" width="4.5" height="4.5"/><rect x="160.1" y="41.0" width="4.5" height="4.5"/><rect x="38.4" y="110.0" width="4.5" height="4.5"/><rect x="8.1" y="115.9" width="4.5" height="4.5"/><rect x="225.4" y="122.7" width="4.5" height="4.5"/><rect x="206.9" y="97.4" width="4.5" height="4.5"/></g></g><g transform="translate(1232,385)" clip-path="url(#rc)"><g filter="url(#rb)"><rect x="-10" y="-10" width="270" height="190" fill="#b0662c"/><ellipse cx="25.3" cy="94.3" rx="50.5" ry="43.8" fill="#c07a34" opacity="0.8"/><ellipse cx="193.7" cy="151.6" rx="70.8" ry="20.2" fill="#c07a34" opacity="0.55"/><polygon points="-10.1,-10.1 101.1,-10.1 91.8,1.3 79.2,9.3 67.4,16.0 55.6,21.1 42.1,27.8 25.3,33.7 10.1,39.6 -10.1,50.5" fill="#42829a"/><polygon points="-10.1,48.9 10.1,40.4 25.3,34.5 42.1,28.6 55.6,21.9 67.4,16.8 74.1,30.3 70.8,43.8 55.6,55.6 33.7,50.5 16.8,55.6 0.0,50.5" fill="#2e6480"/><polygon points="91.8,1.3 101.1,-10.1 225.7,-10.1 219.0,16.8 210.6,16.0 202.2,14.3 188.7,14.3 175.2,16.0 161.7,16.8 151.6,14.3 144.9,10.1 134.8,7.6 123.0,4.2 116.2,0.0 107.8,10.1 94.3,11.8 79.2,18.5" fill="#306a88"/><polygon points="219.0,-10.1 262.8,-10.1 262.8,84.2 250.0,76.7 242.6,69.1 235.8,59.0 230.0,47.2 225.7,36.2 220.7,27.8 216.5,21.9 212.3,16.8" fill="#4e6c78"/><ellipse cx="15.2" cy="10.1" rx="9.3" ry="6.5" fill="#a0743e" opacity="0.55"/><ellipse cx="42.1" cy="6.7" rx="7.6" ry="5.3" fill="#a0743e" opacity="0.55"/><ellipse cx="28.6" cy="25.3" rx="6.7" ry="4.7" fill="#a0743e" opacity="0.55"/><ellipse cx="70.8" cy="5.1" rx="6.7" ry="4.7" fill="#a0743e" opacity="0.55"/><ellipse cx="55.6" cy="42.1" rx="7.6" ry="5.3" fill="#a0743e" opacity="0.55"/><ellipse cx="168.5" cy="5.1" rx="9.3" ry="6.5" fill="#a0743e" opacity="0.55"/><ellipse cx="193.7" cy="3.4" rx="7.6" ry="5.3" fill="#a0743e" opacity="0.55"/><ellipse cx="235.8" cy="15.2" rx="10.1" ry="7.1" fill="#a0743e" opacity="0.55"/><ellipse cx="240.9" cy="38.7" rx="8.4" ry="5.9" fill="#a0743e" opacity="0.55"/><polygon points="74.1,30.3 79.2,18.5 94.3,11.8 107.8,15.2 128.0,20.2 148.2,16.0 146.6,25.3 128.0,38.7 107.8,48.9 84.2,62.3 70.8,74.1 57.3,67.4 55.6,55.6 70.8,43.8" fill="#c08444"/><polygon points="107.8,48.9 128.0,38.7 151.6,23.6 210.6,17.7 224.1,42.1 235.8,60.6 242.6,70.8 262.8,80.9 262.8,102.8 219.0,107.8 212.3,124.7 170.1,131.4 156.7,117.9 144.9,101.1 134.8,87.6 128.0,107.8 117.9,128.0 94.3,144.9 79.2,141.5 67.4,107.8 70.8,80.9 84.2,62.3" fill="#2b5676"/><ellipse cx="168.5" cy="42.1" rx="32.0" ry="17.7" fill="#27507a" transform="rotate(-12 168.5 42.1)"/><ellipse cx="94.3" cy="104.4" rx="20.2" ry="33.7" fill="#305c7c" opacity="0.8"/><ellipse cx="202.2" cy="99.4" rx="42.1" ry="21.9" fill="#346686"/><ellipse cx="117.9" cy="70.8" rx="20.2" ry="11.8" fill="#346686" opacity="0.7"/><polygon points="235.8,42.1 262.8,43.8 262.8,80.9 242.6,70.8" fill="#2e668a"/><ellipse cx="146.6" cy="99.4" rx="12.6" ry="17.7" fill="#9a7c4c"/><ellipse cx="211.4" cy="39.6" rx="11.8" ry="10.4" fill="#9a7c4c"/><ellipse cx="213.9" cy="69.1" rx="11.1" ry="11.1" fill="#9a7c4c" opacity="0.85"/></g><rect x="0" y="0" width="249" height="169" filter="url(#rn)" opacity="0.32"/><rect x="0" y="0" width="249" height="169" filter="url(#rw)" opacity="0.18"/><g filter="url(#rb2)" fill="none" stroke="#98eeee" stroke-linecap="round" stroke-linejoin="round"><path d="M-1.7 45.8L10.1 39.6L25.3 33.7L42.1 27.8L55.6 21.1L67.4 16.0L79.2 9.3L87.6 3.4L92.3 0.7" stroke-width="3.4"/><path d="M67.4 16.8L74.1 28.6L77.8 35.7" stroke-width="1.8" opacity=".65"/><path d="M115.9 -1.0L123.0 4.2L134.8 7.6L144.9 10.1L151.6 14.3L161.7 16.8L175.2 16.0L188.7 14.3L202.2 14.3L210.6 16.0" stroke-width="3.2"/><path d="M210.6 16.0L216.5 21.9L220.7 27.8L225.7 36.2L230.0 47.2L235.8 59.0L242.6 69.1L251.0 77.2" stroke-width="2.3" opacity=".85"/></g><g filter="url(#rb2)" fill="#70c4d4" opacity=".8"><rect x="84.8" y="91.5" width="4.5" height="4.5"/><rect x="98.2" y="110.5" width="4.5" height="4.5"/><rect x="110.5" y="61.7" width="4.5" height="4.5"/><rect x="50.2" y="56.1" width="4.5" height="4.5"/><rect x="160.1" y="41.0" width="4.5" height="4.5"/><rect x="38.4" y="110.0" width="4.5" height="4.5"/><rect x="8.1" y="115.9" width="4.5" height="4.5"/><rect x="225.4" y="122.7" width="4.5" height="4.5"/><rect x="206.9" y="97.4" width="4.5" height="4.5"/></g></g></svg>
<div class="a" style="left:480px;top:89px;width:2px;height:498px;background:#8b909c"></div><div class="a" style="left:730px;top:89px;width:2px;height:498px;background:#8b909c"></div><div class="a" style="left:980px;top:89px;width:2px;height:498px;background:#8b909c"></div><div class="a" style="left:1230px;top:89px;width:2px;height:498px;background:#8b909c"></div><div class="a" style="left:231px;top:337px;width:1250px;height:2px;background:#8b909c"></div><div class="mt" style="left:231px;top:89px">2014-08-03</div><div class="mt" style="left:231px;top:107px">Landsat</div><svg style="left:0px;top:0px" width="1484" height="1032" viewBox="0 0 1484 1032" ><circle cx="336" cy="216.5" r="3.8" fill="#a87868" stroke="#4a3a34" stroke-width=".8"/><circle cx="404.6" cy="194.6" r="3.6" fill="#ffff00" stroke="#55551a" stroke-width=".7"/><circle cx="409.6" cy="261" r="3.6" fill="#ffff00" stroke="#55551a" stroke-width=".7"/></svg>
<div class="ml" style="left:335.5px;top:201px">Profile 1</div><div class="ml" style="left:404.5px;top:179px">Profile 2</div><div class="ml" style="left:409.5px;top:245px">Profile 3</div><svg style="left:0px;top:0px" width="1484" height="1032" viewBox="0 0 1484 1032" ><path d="M409.5 339V506.5M409.5 519V587" stroke="#ff0000" stroke-width="1.2"/><path d="M232 510.5H401.5M417 510.5H480" stroke="#ff0000" stroke-width="1.2"/><path d="M296.5 504.5V515.5" stroke="#ff0000" stroke-width="1.1"/><circle cx="336" cy="466.5" r="3.8" fill="#a87868" stroke="#4a3a34" stroke-width=".8"/><circle cx="404.6" cy="444.6" r="3.6" fill="#ffff00" stroke="#55551a" stroke-width=".7"/><circle cx="409.6" cy="511" r="3.6" fill="#ffff00" stroke="#55551a" stroke-width=".7"/><rect x="408.2" y="509.6" width="2.8" height="2.8" fill="none" stroke="#ff0000" stroke-width=".9"/></svg>
<div class="sc" style="left:293.5px;top:513.5px;width:58.5px">500.0 m</div><div class="ml" style="left:335.5px;top:451px">Profile 1</div><div class="ml" style="left:404.5px;top:429px">Profile 2</div><div class="ml" style="left:409.5px;top:495px">Profile 3</div><div class="mt" style="left:481px;top:89px">2014-08-11</div><div class="mt" style="left:481px;top:107px">Landsat</div><svg style="left:0px;top:0px" width="1484" height="1032" viewBox="0 0 1484 1032" ><circle cx="586" cy="216.5" r="3.8" fill="#a87868" stroke="#4a3a34" stroke-width=".8"/><circle cx="654.6" cy="194.6" r="3.6" fill="#ffff00" stroke="#55551a" stroke-width=".7"/><circle cx="659.6" cy="261" r="3.6" fill="#ffff00" stroke="#55551a" stroke-width=".7"/></svg>
<div class="ml" style="left:585.5px;top:201px">Profile 1</div><div class="ml" style="left:654.5px;top:179px">Profile 2</div><div class="ml" style="left:659.5px;top:245px">Profile 3</div><svg style="left:0px;top:0px" width="1484" height="1032" viewBox="0 0 1484 1032" ><path d="M659.5 339V506.5M659.5 519V587" stroke="#ff0000" stroke-width="1.2"/><path d="M481 510.5H651.5M667 510.5H730" stroke="#ff0000" stroke-width="1.2"/><path d="M546.5 504.5V515.5" stroke="#ff0000" stroke-width="1.1"/><circle cx="586" cy="466.5" r="3.8" fill="#a87868" stroke="#4a3a34" stroke-width=".8"/><circle cx="654.6" cy="444.6" r="3.6" fill="#ffff00" stroke="#55551a" stroke-width=".7"/><circle cx="659.6" cy="511" r="3.6" fill="#ffff00" stroke="#55551a" stroke-width=".7"/><rect x="658.2" y="509.6" width="2.8" height="2.8" fill="none" stroke="#ff0000" stroke-width=".9"/></svg>
<div class="sc" style="left:543.5px;top:513.5px;width:58.5px">500.0 m</div><div class="ml" style="left:585.5px;top:451px">Profile 1</div><div class="ml" style="left:654.5px;top:429px">Profile 2</div><div class="ml" style="left:659.5px;top:495px">Profile 3</div><div class="mt" style="left:731px;top:89px">2014-08-17</div><div class="mt" style="left:731px;top:107px">RapidEye</div><svg style="left:0px;top:0px" width="1484" height="1032" viewBox="0 0 1484 1032" ><circle cx="836" cy="216.5" r="3.8" fill="#a87868" stroke="#4a3a34" stroke-width=".8"/><circle cx="904.6" cy="194.6" r="3.6" fill="#ffff00" stroke="#55551a" stroke-width=".7"/><circle cx="909.6" cy="261" r="3.6" fill="#ffff00" stroke="#55551a" stroke-width=".7"/></svg>
<div class="ml" style="left:835.5px;top:201px">Profile 1</div><div class="ml" style="left:904.5px;top:179px">Profile 2</div><div class="ml" style="left:909.5px;top:245px">Profile 3</div><svg style="left:0px;top:0px" width="1484" height="1032" viewBox="0 0 1484 1032" ><path d="M909.5 339V506.5M909.5 519V587" stroke="#ff0000" stroke-width="1.2"/><path d="M731 510.5H901.5M917 510.5H980" stroke="#ff0000" stroke-width="1.2"/><path d="M796.5 504.5V515.5" stroke="#ff0000" stroke-width="1.1"/><circle cx="836" cy="466.5" r="3.8" fill="#a87868" stroke="#4a3a34" stroke-width=".8"/><circle cx="904.6" cy="444.6" r="3.6" fill="#ffff00" stroke="#55551a" stroke-width=".7"/><circle cx="909.6" cy="511" r="3.6" fill="#ffff00" stroke="#55551a" stroke-width=".7"/><rect x="908.2" y="509.6" width="2.8" height="2.8" fill="none" stroke="#ff0000" stroke-width=".9"/></svg>
<div class="sc" style="left:793.5px;top:513.5px;width:58.5px">500.0 m</div><div class="ml" style="left:835.5px;top:451px">Profile 1</div><div class="ml" style="left:904.5px;top:429px">Profile 2</div><div class="ml" style="left:909.5px;top:495px">Profile 3</div><div class="mt" style="left:981px;top:89px">2014-08-19</div><div class="mt" style="left:981px;top:107px">Landsat</div><svg style="left:0px;top:0px" width="1484" height="1032" viewBox="0 0 1484 1032" ><circle cx="1086" cy="216.5" r="3.8" fill="#a87868" stroke="#4a3a34" stroke-width=".8"/><circle cx="1154.6" cy="194.6" r="3.6" fill="#ffff00" stroke="#55551a" stroke-width=".7"/><circle cx="1159.6" cy="261" r="3.6" fill="#ffff00" stroke="#55551a" stroke-width=".7"/></svg>
<div class="ml" style="left:1085.5px;top:201px">Profile 1</div><div class="ml" style="left:1154.5px;top:179px">Profile 2</div><div class="ml" style="left:1159.5px;top:245px">Profile 3</div><svg style="left:0px;top:0px" width="1484" height="1032" viewBox="0 0 1484 1032" ><path d="M1159.5 339V506.5M1159.5 519V587" stroke="#ff0000" stroke-width="1.2"/><path d="M981 510.5H1151.5M1167 510.5H1230" stroke="#ff0000" stroke-width="1.2"/><path d="M1046.5 504.5V515.5" stroke="#ff0000" stroke-width="1.1"/><circle cx="1086" cy="466.5" r="3.8" fill="#a87868" stroke="#4a3a34" stroke-width=".8"/><circle cx="1154.6" cy="444.6" r="3.6" fill="#ffff00" stroke="#55551a" stroke-width=".7"/><circle cx="1159.6" cy="511" r="3.6" fill="#ffff00" stroke="#55551a" stroke-width=".7"/><rect x="1158.2" y="509.6" width="2.8" height="2.8" fill="none" stroke="#ff0000" stroke-width=".9"/></svg>
<div class="sc" style="left:1043.5px;top:513.5px;width:58.5px">500.0 m</div><div class="ml" style="left:1085.5px;top:451px">Profile 1</div><div class="ml" style="left:1154.5px;top:429px">Profile 2</div><div class="ml" style="left:1159.5px;top:495px">Profile 3</div><div class="mt" style="left:1231px;top:89px">2014-08-20</div><div class="mt" style="left:1231px;top:107px">RapidEye</div><svg style="left:0px;top:0px" width="1484" height="1032" viewBox="0 0 1484 1032" ><circle cx="1336" cy="216.5" r="3.8" fill="#a87868" stroke="#4a3a34" stroke-width=".8"/><circle cx="1404.6" cy="194.6" r="3.6" fill="#ffff00" stroke="#55551a" stroke-width=".7"/><circle cx="1409.6" cy="261" r="3.6" fill="#ffff00" stroke="#55551a" stroke-width=".7"/></svg>
<div class="ml" style="left:1335.5px;top:201px">Profile 1</div><div class="ml" style="left:1404.5px;top:179px">Profile 2</div><div class="ml" style="left:1409.5px;top:245px">Profile 3</div><svg style="left:0px;top:0px" width="1484" height="1032" viewBox="0 0 1484 1032" ><path d="M1409.5 339V506.5M1409.5 519V587" stroke="#ff0000" stroke-width="1.2"/><path d="M1231 510.5H1401.5M1417 510.5H1480" stroke="#ff0000" stroke-width="1.2"/><path d="M1296.5 504.5V515.5" stroke="#ff0000" stroke-width="1.1"/><circle cx="1336" cy="466.5" r="3.8" fill="#a87868" stroke="#4a3a34" stroke-width=".8"/><circle cx="1404.6" cy="444.6" r="3.6" fill="#ffff00" stroke="#55551a" stroke-width=".7"/><circle cx="1409.6" cy="511" r="3.6" fill="#ffff00" stroke="#55551a" stroke-width=".7"/><rect x="1408.2" y="509.6" width="2.8" height="2.8" fill="none" stroke="#ff0000" stroke-width=".9"/></svg>
<div class="sc" style="left:1293.5px;top:513.5px;width:58.5px">500.0 m</div><div class="ml" style="left:1335.5px;top:451px">Profile 1</div><div class="ml" style="left:1404.5px;top:429px">Profile 2</div><div class="ml" style="left:1409.5px;top:495px">Profile 3</div><div class="a" style="left:231px;top:587px;width:1250px;height:28px;background:#f0f0f0"></div><svg style="left:234px;top:595px" width="15" height="15" viewBox="0 0 15 15" ><rect x="0.5" y="0" width="3" height="14.5" fill="#6d9dd2" stroke="#35639c" stroke-width="1"/><path d="M13.6 0L3.6 7.25L13.6 14.5Z" fill="#6d9dd2" stroke="#35639c" stroke-width="1" stroke-linejoin="round"/></svg>
<svg style="left:256px;top:595px" width="16" height="15" viewBox="0 0 16 15" ><path d="M15.5 0L6 7.25L15.5 14.5Z" fill="#6d9dd2" stroke="#35639c" stroke-width="1" stroke-linejoin="round"/><path d="M10.0 0L0.5 7.25L10.0 14.5Z" fill="#6d9dd2" stroke="#35639c" stroke-width="1" stroke-linejoin="round"/></svg>
<svg style="left:282px;top:595px" width="12" height="15" viewBox="0 0 12 15" ><path d="M10.5 0L0.5 7.25L10.5 14.5Z" fill="#6d9dd2" stroke="#35639c" stroke-width="1" stroke-linejoin="round"/></svg>
<svg style="left:1418px;top:595px" width="12" height="15" viewBox="0 0 12 15" ><path d="M0.5 0L10.5 7.25L0.5 14.5Z" fill="#6d9dd2" stroke="#35639c" stroke-width="1" stroke-linejoin="round"/></svg>
<svg style="left:1439px;top:595px" width="16" height="15" viewBox="0 0 16 15" ><path d="M0.5 0L10.0 7.25L0.5 14.5Z" fill="#6d9dd2" stroke="#35639c" stroke-width="1" stroke-linejoin="round"/><path d="M6 0L15.5 7.25L6 14.5Z" fill="#6d9dd2" stroke="#35639c" stroke-width="1" stroke-linejoin="round"/></svg>
<svg style="left:1463px;top:595px" width="15" height="15" viewBox="0 0 15 15" ><path d="M0.5 0L10.5 7.25L0.5 14.5Z" fill="#6d9dd2" stroke="#35639c" stroke-width="1" stroke-linejoin="round"/><rect x="10.0" y="0" width="3" height="14.5" fill="#6d9dd2" stroke="#35639c" stroke-width="1"/></svg>
<svg style="left:0px;top:0px" width="1484" height="1032" viewBox="0 0 1484 1032" ><path d="M304.4 592V596.5" stroke="#908a7c" stroke-width="1"/><path d="M338.9 592V596.5" stroke="#908a7c" stroke-width="1"/><path d="M373.3 592V596.5" stroke="#908a7c" stroke-width="1"/><path d="M407.8 592V596.5" stroke="#908a7c" stroke-width="1"/><path d="M442.3 592V596.5" stroke="#908a7c" stroke-width="1"/><path d="M476.8 592V596.5" stroke="#908a7c" stroke-width="1"/><path d="M511.2 592V596.5" stroke="#908a7c" stroke-width="1"/><path d="M545.7 592V596.5" stroke="#908a7c" stroke-width="1"/><path d="M580.2 592V596.5" stroke="#908a7c" stroke-width="1"/><path d="M614.6 592V596.5" stroke="#908a7c" stroke-width="1"/><path d="M649.1 592V596.5" stroke="#908a7c" stroke-width="1"/><path d="M683.6 592V596.5" stroke="#908a7c" stroke-width="1"/><path d="M718.0 592V596.5" stroke="#908a7c" stroke-width="1"/><path d="M752.5 592V596.5" stroke="#908a7c" stroke-width="1"/><path d="M787.0 592V596.5" stroke="#908a7c" stroke-width="1"/><path d="M821.4 592V596.5" stroke="#908a7c" stroke-width="1"/><path d="M855.9 592V596.5" stroke="#908a7c" stroke-width="1"/><path d="M890.4 592V596.5" stroke="#908a7c" stroke-width="1"/><path d="M924.9 592V596.5" stroke="#908a7c" stroke-width="1"/><path d="M959.3 592V596.5" stroke="#908a7c" stroke-width="1"/><path d="M993.8 592V596.5" stroke="#908a7c" stroke-width="1"/><path d="M1028.3 592V596.5" stroke="#908a7c" stroke-width="1"/><path d="M1062.7 592V596.5" stroke="#908a7c" stroke-width="1"/><path d="M1097.2 592V596.5" stroke="#908a7c" stroke-width="1"/><path d="M1131.7 592V596.5" stroke="#908a7c" stroke-width="1"/><path d="M1166.2 592V596.5" stroke="#908a7c" stroke-width="1"/><path d="M1200.6 592V596.5" stroke="#908a7c" stroke-width="1"/><path d="M1235.1 592V596.5" stroke="#908a7c" stroke-width="1"/><path d="M1269.6 592V596.5" stroke="#908a7c" stroke-width="1"/><path d="M1304.0 592V596.5" stroke="#908a7c" stroke-width="1"/><path d="M1338.5 592V596.5" stroke="#908a7c" stroke-width="1"/><path d="M1373.0 592V596.5" stroke="#908a7c" stroke-width="1"/><path d="M1407.4 592V596.5" stroke="#908a7c" stroke-width="1"/><rect x="299.5" y="603.5" width="1113" height="3" fill="#e7eaea" stroke="#d2d2d2" stroke-width="1"/><path d="M919.4 615V601.5L924.9 596L930.4 601.5V615Z" fill="#0078d7"/></svg>
<div class="dt" style="left:1px;top:622px;width:1482px;height:25px"></div><div class="t" style="left:6.80px;top:628.50px;letter-spacing:0.061px">Temporal Profiles | 2D</div>
<svg style="left:1444px;top:628px" width="34" height="14" viewBox="0 0 34 14" ><rect x="4.2" y="1" width="7.8" height="7.2" fill="none" stroke="#333" stroke-width="1.5"/><path d="M3.4 1.4H12.8" stroke="#333" stroke-width="2.2"/><rect x=".9" y="5.6" width="7.8" height="7.4" fill="#dcdcdc" stroke="#333" stroke-width="1.5"/><path d="M.2 6H9.4" stroke="#333" stroke-width="2.2"/><path d="M21.4 2L31.6 13M31.6 2L21.4 13" stroke="#333" stroke-width="2.6"/></svg>
<div class="a" style="left:5px;top:649px;width:35px;height:346px;background:#fff;border:1px solid #7f8c9c"></div><div class="a" style="left:7px;top:651px;width:31px;height:29px;background:#d9d9d9"></div><svg style="left:10px;top:653px" width="26" height="25" viewBox="0 0 26 25" ><path d="M1.5 1V21.5H23.5" stroke="#5a6a86" stroke-width="1" fill="none"/><path d="M3.5 10.5C5.5 8.4 7.5 8.4 9.5 10.4C11.5 12.4 13.5 12.4 15.5 10.4C17.5 8.6 19.5 8.8 22 10.4" stroke="#9a6a4a" stroke-width="1.1" fill="none"/><path d="M3.5 14C5.5 12 7.5 12 9.5 14.4C11.5 16.8 13.5 16.6 15.5 14.4C17.5 12.6 19.5 15.6 22 14.6" stroke="#222" stroke-width="1.1" fill="none"/></svg>
<svg style="left:12px;top:684px" width="21" height="21" viewBox="0 0 21 21" ><rect x=".5" y=".5" width="19.5" height="19.5" fill="#f2f6fb" stroke="#7aa3d8" stroke-width="1"/><rect x="1" y="1" width="18.5" height="4.2" fill="#c4d8f0"/><path d="M3 3.1H6M8.5 3.1H17" stroke="#4a7cc0" stroke-width="1.6"/><path d="M3 8H6M8.5 8H17M3 11.2H6M8.5 11.2H17M3 14.4H6M8.5 14.4H17M3 17.4H6M8.5 17.4H17" stroke="#5b8ccc" stroke-width="1.1"/></svg>
<svg style="left:45px;top:655px" width="19" height="17" viewBox="0 0 19 17" ><path d="M1 5.5C3 2 5 2 7 4.4C9 7 11 7 13 4.4C14.6 2.4 16.4 2.4 18.2 4.8" stroke="#333" stroke-width="1.2" fill="none"/><circle cx="4.6" cy="12.6" r="3.6" fill="#4a7cc0" stroke="#2a5391" stroke-width=".8"/><path d="M3 12L4.6 13.2L6.2 13.4" stroke="#fff" stroke-width="1" fill="none"/></svg>
<svg style="left:71px;top:655px" width="18" height="18" viewBox="0 0 18 18" ><g transform="scale(.75)"><g transform="translate(24,0) scale(-1,1)"><path d="M1.6 11C1.8 5.4 6.4 1.4 11.8 1.4C14.8 1.4 17 2.4 18.8 4.2L22.2 1V10.8H12.4L15.8 7.4C14.8 6.4 13.4 5.8 11.8 5.8C8.6 5.8 6.6 7.8 6.2 11Z" fill="#46b03e" stroke="#2e9a2e" stroke-width=".8" stroke-linejoin="round"/><path d="M22.4 12.6C22.2 18.2 17.6 22.2 12.2 22.2C9.2 22.2 7 21.2 5.2 19.4L1.8 22.6V12.8H11.6L8.2 16.2C9.2 17.2 10.6 17.8 12.2 17.8C15.4 17.8 17.4 15.8 17.8 12.6Z" fill="#5cc052" stroke="#2e9a2e" stroke-width=".8" stroke-linejoin="round"/></g></g></svg>
<svg style="left:96px;top:655px" width="19" height="18" viewBox="0 0 19 18" ><g transform="scale(.76)"><path d="M5.8919999999999995 3.792L10.452 8.352" stroke="#5b8dce" stroke-width="3.952" fill="none"/><path d="M2.7 0.6L10.3 0.6L2.7 8.2Z" fill="#5b8dce" stroke="#3c6db0" stroke-width=".4"/><path d="M19.608 3.792L15.048000000000002 8.352" stroke="#5b8dce" stroke-width="3.952" fill="none"/><path d="M22.8 0.6L15.200000000000001 0.6L22.8 8.2Z" fill="#5b8dce" stroke="#3c6db0" stroke-width=".4"/><path d="M19.608 17.008L15.048000000000002 12.448" stroke="#5b8dce" stroke-width="3.952" fill="none"/><path d="M22.8 20.2L15.200000000000001 20.2L22.8 12.6Z" fill="#5b8dce" stroke="#3c6db0" stroke-width=".4"/><path d="M7.4 15.4L.8 21.6" stroke="#222" stroke-width="3.2" stroke-linecap="round"/><path d="M6 16.8L.9 21.5" stroke="#f2c230" stroke-width="2.2" stroke-linecap="round"/><circle cx="12.2" cy="9.6" r="6.6" fill="#e9e9e9" stroke="#9a9a9a" stroke-width="1.4"/><circle cx="12.2" cy="9.6" r="5" fill="#f3f3f3"/></g></svg>
<svg style="left:122px;top:655px" width="17" height="17" viewBox="0 0 17 17" ><rect x=".6" y=".6" width="15.8" height="15.8" rx="3" fill="#5a9455" stroke="#447a40" stroke-width="1"/><path d="M3.6 8.5H13.4M8.5 3.6V13.4" stroke="#fff" stroke-width="3"/></svg>
<svg style="left:146px;top:655px" width="17" height="17" viewBox="0 0 17 17" ><rect x=".6" y=".6" width="15.8" height="15.8" rx="2.5" fill="#d8202c" stroke="#b01420" stroke-width="1"/><path d="M4 4L13 13M13 4L4 13" stroke="#fff" stroke-width="2.8"/></svg>
<div class="a" style="left:41px;top:677px;width:620px;height:318px;background:#fff;border:1px solid #828790"></div><div class="a" style="left:42px;top:761px;width:14px;height:211px;background:#f0f0f0"></div><div class="a" style="left:42px;top:972px;width:618px;height:22px;background:#f0f0f0"></div><div class="a" style="left:56px;top:678px;width:1px;height:83px;background:#dcdcdc"></div><div class="a" style="left:156px;top:678px;width:1px;height:83px;background:#dcdcdc"></div><div class="a" style="left:256px;top:678px;width:1px;height:83px;background:#dcdcdc"></div><div class="a" style="left:356px;top:678px;width:1px;height:83px;background:#dcdcdc"></div><div class="a" style="left:42px;top:730px;width:618px;height:1px;background:#dcdcdc"></div><div class="a" style="left:42px;top:760px;width:618px;height:1px;background:#dcdcdc"></div><svg style="left:103px;top:678px" width="10" height="5" viewBox="0 0 10 5" ><path d="M.5 .5L4.5 4L8.5 .5" stroke="#777" stroke-width=".9" fill="none"/></svg>
<div class="t" style="left:77.60px;top:683.00px;letter-spacing:0.171px">Coordinate</div>
<div class="t" style="left:189.60px;top:683.00px;letter-spacing:-0.328px">Sensor</div>
<div class="t" style="left:294.40px;top:683.00px;letter-spacing:-0.192px">Style</div>
<div class="t" style="left:474.10px;top:683.00px;letter-spacing:0.326px;font-weight:bold">DN or Index</div>
<div class="a" style="left:257px;top:701px;width:99px;height:29px;background:#000"></div><div class="a" style="left:257px;top:731px;width:99px;height:29px;background:#000"></div><div class="a" style="left:305px;top:714px;width:3px;height:3px;background:#00ff00"></div><div class="a" style="left:305px;top:744px;width:3px;height:3px;background:#1464ff"></div><div class="a" style="left:357px;top:731px;width:303px;height:29px;background:#0078d7"></div><div class="t" style="left:46.50px;top:708.50px">1</div>
<svg style="left:61px;top:709px" width="13" height="13" viewBox="0 0 13 13" ><rect x=".5" y=".5" width="12" height="12" fill="#fff" stroke="#333" stroke-width="1"/><path d="M2.6 6.6L5.2 9.4L10.4 3.2" stroke="#111" stroke-width="1.2" fill="none"/></svg>
<div class="t" style="left:79.00px;top:708.50px;letter-spacing:0.163px">3 "Profile 3"</div>
<div class="t" style="left:160.30px;top:708.50px;letter-spacing:-0.054px">Landsat</div>
<div class="t" style="left:360.30px;top:708.50px;letter-spacing:0.362px">(b4-b3)/(b4+b3)</div>
<div class="t" style="left:46.50px;top:738.50px;font-weight:bold">0</div>
<svg style="left:61px;top:739px" width="13" height="13" viewBox="0 0 13 13" ><rect x=".5" y=".5" width="12" height="12" fill="#fff" stroke="#333" stroke-width="1"/><path d="M2.6 6.6L5.2 9.4L10.4 3.2" stroke="#111" stroke-width="1.2" fill="none"/></svg>
<div class="t" style="left:79.00px;top:738.50px;letter-spacing:0.163px">3 "Profile 3"</div>
<div class="t" style="left:160.30px;top:738.50px;letter-spacing:-0.224px">RapidEye</div>
<div class="t" style="left:360.30px;top:738.50px;letter-spacing:0.362px">(b5-b3)/(b5+b3)</div>
<svg style="left:47px;top:977px" width="8" height="11" viewBox="0 0 8 11" ><path d="M.5 .5L7 5.5L.5 10.5Z" fill="#222"/></svg>
<div class="t" style="left:62.30px;top:975.50px;letter-spacing:-0.371px">Data Value(s)</div>
<div class="a" style="left:2px;top:996px;width:65px;height:13px;background:#e6e6e6;border:1px solid #bcbcbc"></div><div class="t" style="left:74.50px;top:996.00px;letter-spacing:0.479px">0%</div>
<div class="t" style="left:107.00px;top:996.00px;letter-spacing:-0.427px">Loaded 1 pixel from 2014-07-02_LE72270652014183CUB00_BOA.tif.</div>
<div class="a" style="left:0;top:1010px;width:1484px;height:1px;background:#a8a8a8"></div><div class="a" style="left:176px;top:1010px;width:133px;height:23px;background:#fff;border:1px solid #d0d0d0;border-top:none"></div><div class="a" style="left:2px;top:1011px;width:366px;height:18px;border-bottom:1px solid #dadada"></div><div class="a" style="left:79px;top:1011px;width:1px;height:19px;background:#d4d4d4"></div><div class="t" style="left:12.60px;top:1013.00px;letter-spacing:-0.712px">Time Series</div>
<div class="t" style="left:90.25px;top:1013.00px;letter-spacing:-0.402px">Spectral Library</div>
<div class="t" style="left:189.60px;top:1014.00px;letter-spacing:-0.387px">Temporal Profiles | 2D</div>
<div class="t" style="left:318.35px;top:1013.00px;letter-spacing:-0.598px">Labeling</div>
<div class="a" style="left:667px;top:677px;width:816px;height:318px;background:#000"></div><svg style="left:0px;top:0px" width="1484" height="1032" viewBox="0 0 1484 1032" ><path d="M718.5 677V957.5H1483" stroke="#969696" stroke-width="1" fill="none"/><path d="M714.5 933.6H722.5" stroke="#969696" stroke-width="1"/><path d="M714.5 903.7H722.5" stroke="#969696" stroke-width="1"/><path d="M714.5 873.9H722.5" stroke="#969696" stroke-width="1"/><path d="M714.5 844.0H722.5" stroke="#969696" stroke-width="1"/><path d="M714.5 814.1H722.5" stroke="#969696" stroke-width="1"/><path d="M714.5 784.2H722.5" stroke="#969696" stroke-width="1"/><path d="M714.5 754.4H722.5" stroke="#969696" stroke-width="1"/><path d="M714.5 724.5H722.5" stroke="#969696" stroke-width="1"/><path d="M714.5 694.6H722.5" stroke="#969696" stroke-width="1"/><path d="M788 954V957" stroke="#969696" stroke-width="1"/><path d="M866 952V957" stroke="#969696" stroke-width="1"/><path d="M944 954V957" stroke="#969696" stroke-width="1"/><path d="M1022 952V957" stroke="#969696" stroke-width="1"/><path d="M1100 954V957" stroke="#969696" stroke-width="1"/><path d="M1177.5 952V957" stroke="#969696" stroke-width="1"/><path d="M1255.5 954V957" stroke="#969696" stroke-width="1"/><path d="M1333.5 952V957" stroke="#969696" stroke-width="1"/><path d="M1411.5 954V957" stroke="#969696" stroke-width="1"/><path d="M718 786H1483" stroke="#a0a000" stroke-width="2"/><path d="M1459 677V957" stroke="#a0a000" stroke-width="2"/><circle cx="741.9" cy="774.0" r="2.6" fill="#00ff00"/><circle cx="879.1" cy="723.1" r="2.6" fill="#00ff00"/><circle cx="963.9" cy="693.0" r="2.6" fill="#00ff00"/><circle cx="998.1" cy="745.2" r="2.6" fill="#00ff00"/><circle cx="1032.0" cy="699.1" r="2.6" fill="#00ff00"/><circle cx="1049.0" cy="704.9" r="2.6" fill="#00ff00"/><circle cx="1066.0" cy="703.9" r="2.6" fill="#00ff00"/><circle cx="980.9" cy="888.2" r="2.6" fill="#00ff00"/><circle cx="946.6" cy="925.9" r="2.6" fill="#00ff00"/><circle cx="1014.8" cy="924.3" r="2.6" fill="#00ff00"/><circle cx="1082.9" cy="698.1" r="2.6" fill="#00ff00"/><circle cx="1116.8" cy="705.1" r="2.6" fill="#00ff00"/><circle cx="1151.8" cy="709.9" r="2.6" fill="#00ff00"/><circle cx="1168.7" cy="712.1" r="2.6" fill="#00ff00"/><circle cx="1185.7" cy="754.1" r="2.6" fill="#00ff00"/><circle cx="1236.9" cy="742.7" r="2.6" fill="#00ff00"/><circle cx="1253.8" cy="747.1" r="2.6" fill="#00ff00"/><circle cx="1219.9" cy="768.1" r="2.6" fill="#00ff00"/><circle cx="1134.8" cy="786.1" r="2.6" fill="#00ff00"/><circle cx="1203.0" cy="790.9" r="2.6" fill="#00ff00"/><circle cx="1305.0" cy="720.9" r="2.6" fill="#00ff00"/><circle cx="1321.9" cy="738.2" r="2.6" fill="#00ff00"/><circle cx="1372.8" cy="737.1" r="2.6" fill="#00ff00"/><circle cx="1389.7" cy="698.8" r="2.6" fill="#00ff00"/><circle cx="1459.0" cy="781.0" r="2.6" fill="#00ff00"/><circle cx="1270.7" cy="869.0" r="2.6" fill="#00ff00"/><circle cx="1287.7" cy="932.0" r="2.6" fill="#00ff00"/><circle cx="1084.7" cy="772.9" r="2.4" fill="#1464ff"/><circle cx="1197.8" cy="926.8" r="2.4" fill="#1464ff"/><circle cx="1204.8" cy="941.9" r="2.4" fill="#1464ff"/><circle cx="1217.7" cy="936.8" r="2.4" fill="#1464ff"/></svg>
<div class="pl" style="left:680px;width:32px;text-align:right;top:927.6px">0.1</div><div class="pl" style="left:680px;width:32px;text-align:right;top:897.7px">0.2</div><div class="pl" style="left:680px;width:32px;text-align:right;top:867.9px">0.3</div><div class="pl" style="left:680px;width:32px;text-align:right;top:838.0px">0.4</div><div class="pl" style="left:680px;width:32px;text-align:right;top:808.1px">0.5</div><div class="pl" style="left:680px;width:32px;text-align:right;top:778.2px">0.6</div><div class="pl" style="left:680px;width:32px;text-align:right;top:748.4px">0.7</div><div class="pl" style="left:680px;width:32px;text-align:right;top:718.5px">0.8</div><div class="pl" style="left:680px;width:32px;text-align:right;top:688.6px">0.9</div><div class="pl c" style="left:826px;width:80px;top:959px">2014-03-14</div><div class="pl c" style="left:982px;width:80px;top:959px">2014-05-26</div><div class="pl c" style="left:1137.5px;width:80px;top:959px">2014-08-07</div><div class="pl c" style="left:1293.5px;width:80px;top:959px">2014-10-19</div><div class="pl c" style="left:1066px;width:60px;top:982px">Date</div><div class="pl c" style="left:633.5px;width:80px;top:814px;transform:rotate(-90deg)">DN or Index</div><div class="pl" style="left:1396px;top:682px;color:#ffff00">DN 0.59</div><div class="pl" style="left:1396px;top:695px;color:#ffff00">Date 2014-12-17</div><div class="pl" style="left:1396px;top:708px;color:#ffff00">DOY 351</div></body></html>
